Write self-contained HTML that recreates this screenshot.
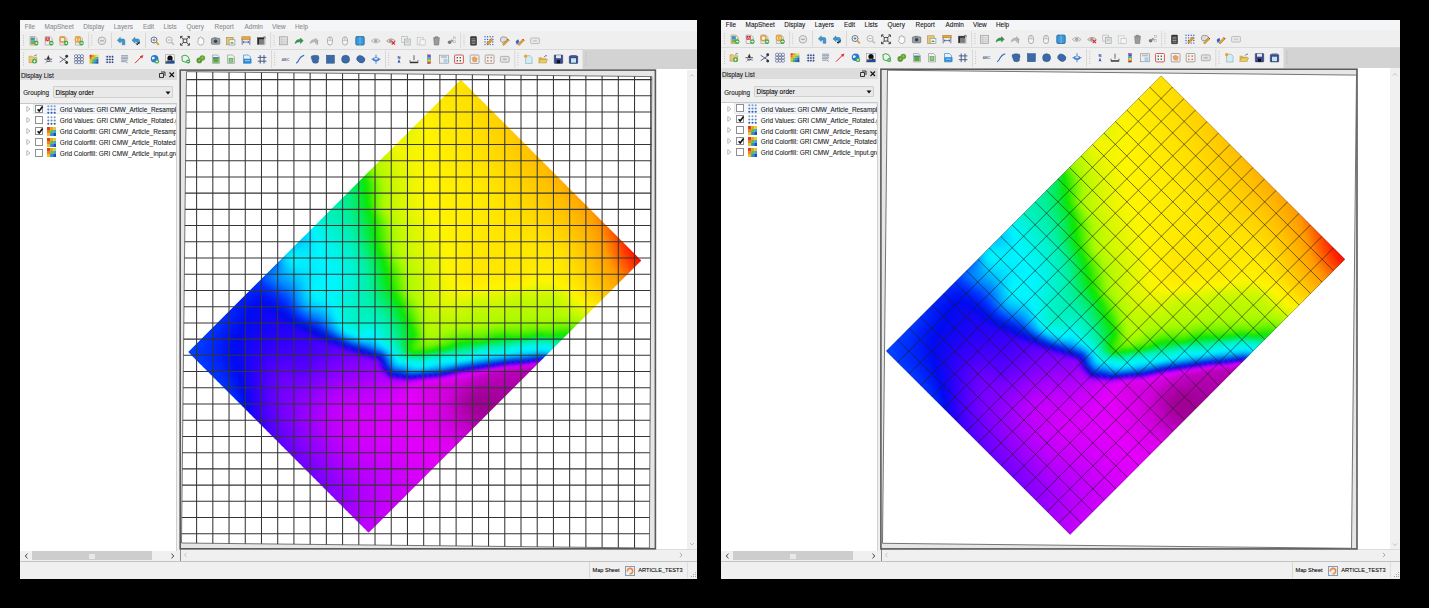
<!DOCTYPE html><html><head><meta charset="utf-8"><style>
html,body{margin:0;padding:0;background:#000;width:1429px;height:608px;overflow:hidden;position:relative}
div{position:absolute}
.s{position:absolute}
.t{position:absolute;white-space:nowrap;font-family:"Liberation Sans",sans-serif;line-height:1.2;-webkit-text-stroke:0.08px currentColor}
.dm{position:absolute;width:390px;height:260px;transform-origin:0 0;overflow:hidden}
.dm i{position:absolute;left:0;width:100%;height:3px}
.f0{top:0px;background:linear-gradient(90deg,#0045ff,#0042ff,#003fff,#003dff,#003bff,#0039ff,#0038ff,#0037ff,#0036ff,#0036ff,#0035fe,#0032fd,#002ffc,#002cfb,#0028fa,#0025f9,#0022f8,#0020f7,#001ff7,#0020f7,#0021f8,#0023f8,#0025f9,#0029fa,#002efc,#0037ff,#0046ff,#0057ff,#0065ff,#006dff,#0071ff,#0077ff,#008dff,#00afff,#00cdff,#00dcff,#00deff,#00d8ff,#00d1ff,#00caff,#00c9ff,#00d0ff,#00daff,#00e8ff,#00f4fd,#00f4f1,#00f3e4,#00f3d7,#00f2cb,#00f1c1,#00f1ba,#00f1b5,#00f0b0,#00f0ac,#00f0a4,#01ef9b,#02ee8f,#02ee82,#03ed72,#04ec5f,#06ea48,#07e92c,#0ae70b,#2cea00,#5df000,#88f600,#a2f900,#b0fa00,#b8f900,#c0f900,#cbf800,#d8f700,#e5f700,#eff600,#f5f600,#f0f600,#e4f700,#e2f700,#e4f700,#e8f600,#eef600,#f4f600,#faf500,#fff400,#fff200,#fff000,#ffee00,#ffed00,#ffec00,#ffeb00,#ffea00,#ffe900,#ffe800,#ffe700,#ffe600,#ffe500,#ffe300,#ffe100)}
.f1{top:2px;background:linear-gradient(90deg,#0043ff,#003fff,#003cff,#003aff,#0038ff,#0036ff,#0035fe,#0034fe,#0033fe,#0032fd,#0030fd,#002efc,#002bfb,#0029fa,#0025f9,#0022f8,#001ff7,#001df6,#001cf6,#001cf6,#001ef7,#001ff7,#0022f8,#0025f9,#002cfb,#0035fe,#0046ff,#005aff,#006bff,#0076ff,#007bff,#0082ff,#0098ff,#00baff,#00d9ff,#00e6ff,#00e5ff,#00dfff,#00d7ff,#00d0ff,#00ceff,#00d4ff,#00deff,#00ebff,#00f5fc,#00f4ef,#00f3e3,#00f3d6,#00f2ca,#00f1c0,#00f1b9,#00f1b4,#00f0af,#00f0aa,#01efa1,#01ef96,#02ee8a,#03ed7c,#04ec6b,#05eb57,#06ea3f,#08e823,#0de704,#34eb00,#63f100,#8cf600,#a6f900,#b3f900,#bbf900,#c4f800,#cef800,#dbf700,#e7f600,#f1f600,#f5f600,#f0f600,#e7f600,#e5f700,#e6f600,#eaf600,#eff600,#f5f600,#fcf500,#fff400,#fff100,#ffef00,#ffee00,#ffec00,#ffeb00,#ffea00,#ffe900,#ffe800,#ffe700,#ffe600,#ffe500,#ffe400,#ffe300,#ffe100)}
.f2{top:4px;background:linear-gradient(90deg,#0041ff,#003dff,#003aff,#0037ff,#0035fe,#0033fe,#0032fd,#0030fd,#002ffc,#002dfc,#002cfb,#002afb,#0027fa,#0025f9,#0022f8,#001ff7,#001df6,#001af5,#0019f5,#0019f5,#001af5,#001cf6,#001ef7,#0022f8,#0028fa,#0033fe,#0046ff,#005dff,#0072ff,#007eff,#0084ff,#008eff,#00a4ff,#00c3ff,#00e1ff,#00edff,#00ebff,#00e5ff,#00dcff,#00d6ff,#00d4ff,#00d8ff,#00e2ff,#00eeff,#00f5fa,#00f4ee,#00f3e1,#00f3d5,#00f2ca,#00f1c0,#00f1b8,#00f1b3,#00f0ad,#00f0a7,#01ef9d,#01ef92,#02ee84,#03ed75,#04ec63,#05eb4e,#07e935,#09e718,#15e700,#3dec00,#69f200,#8ff700,#a9fa00,#b5f900,#bef900,#c7f800,#d1f800,#ddf700,#e8f600,#f1f600,#f5f600,#f1f600,#eaf600,#e7f600,#e9f600,#ecf600,#f1f600,#f7f500,#fdf500,#fff300,#fff100,#ffef00,#ffed00,#ffec00,#ffeb00,#ffea00,#ffe900,#ffe800,#ffe700,#ffe600,#ffe500,#ffe400,#ffe200,#ffe100)}
.f3{top:6px;background:linear-gradient(90deg,#0040ff,#003cff,#0038ff,#0035fe,#0033fe,#0031fd,#002ffc,#002dfc,#002bfb,#0029fa,#0027fa,#0025f9,#0023f8,#0022f8,#001ff7,#001df6,#001af5,#0017f4,#0016f4,#0016f4,#0017f4,#0018f5,#001af5,#001ef7,#0025f9,#0031fd,#0045ff,#005eff,#0077ff,#0085ff,#008dff,#0099ff,#00adff,#00caff,#00e5ff,#00f0ff,#00f0ff,#00e9ff,#00e1ff,#00dbff,#00d9ff,#00ddff,#00e5ff,#00f1ff,#00f5f8,#00f4ec,#00f3e0,#00f2d4,#00f2c9,#00f1c0,#00f1b8,#00f0b2,#00f0ac,#00f0a4,#01ef99,#02ee8d,#03ed7e,#04ec6e,#05eb5a,#06ea44,#08e82a,#09e70c,#20e900,#46ee00,#6ff300,#93f700,#acfa00,#b8f900,#c1f900,#caf800,#d4f800,#dff700,#e9f600,#f1f600,#f4f600,#f2f600,#edf600,#eaf600,#ebf600,#eef600,#f3f600,#f8f500,#fef500,#fff300,#fff100,#ffef00,#ffed00,#ffec00,#ffea00,#ffe900,#ffe800,#ffe800,#ffe700,#ffe600,#ffe400,#ffe300,#ffe200,#ffe000)}
.f4{top:8px;background:linear-gradient(90deg,#003fff,#003aff,#0036ff,#0033fe,#0031fd,#002ffc,#002cfb,#002afb,#0027fa,#0025f9,#0022f8,#0021f8,#0020f7,#001ef7,#001cf6,#001af5,#0017f4,#0015f4,#0013f3,#0013f3,#0013f3,#0015f4,#0017f4,#001bf6,#0022f8,#002ffc,#0043ff,#005fff,#0079ff,#008aff,#0094ff,#00a1ff,#00b5ff,#00cfff,#00e6ff,#00f1ff,#00f2ff,#00ecff,#00e5ff,#00e0ff,#00deff,#00e2ff,#00e9ff,#00f3ff,#00f4f6,#00f4eb,#00f3e0,#00f2d4,#00f2c9,#00f1c0,#00f1b8,#00f0b1,#00f0ab,#01efa1,#01ef95,#02ee88,#03ed78,#04ec66,#05eb51,#07e939,#08e81e,#0de703,#2bea00,#50ef00,#75f300,#97f800,#aefa00,#baf900,#c4f800,#cdf800,#d6f700,#e0f700,#eaf600,#f1f600,#f4f600,#f2f600,#eff600,#edf600,#eef600,#f1f600,#f5f600,#faf500,#fff500,#fff200,#fff000,#ffee00,#ffed00,#ffeb00,#ffea00,#ffe900,#ffe800,#ffe700,#ffe600,#ffe500,#ffe400,#ffe300,#ffe100,#ffdf00)}
.f5{top:10px;background:linear-gradient(90deg,#003eff,#0039ff,#0035fe,#0032fd,#002ffc,#002cfb,#002afb,#0027fa,#0024f9,#0021f8,#001ff7,#001df6,#001cf6,#001bf6,#0019f5,#0017f4,#0014f3,#0012f3,#0010f2,#0010f2,#0010f2,#0011f2,#0014f3,#0018f5,#0020f7,#002dfc,#0041ff,#005dff,#0078ff,#008cff,#0099ff,#00a7ff,#00bbff,#00d2ff,#00e6ff,#00f1ff,#00f2ff,#00eeff,#00e9ff,#00e4ff,#00e3ff,#00e6ff,#00edff,#00f5fd,#00f4f4,#00f4ea,#00f3df,#00f2d4,#00f2c9,#00f1c0,#00f1b8,#00f0b1,#00f0aa,#01ef9e,#01ef91,#02ee83,#03ed71,#05eb5d,#06ea47,#07e92d,#09e711,#17e800,#37ec00,#59f000,#7cf400,#9bf800,#b0fa00,#bcf900,#c6f800,#cff800,#d8f700,#e2f700,#eaf600,#f0f600,#f3f600,#f3f600,#f1f600,#eff600,#f0f600,#f3f600,#f7f500,#fcf500,#fff400,#fff200,#fff000,#ffee00,#ffec00,#ffeb00,#ffea00,#ffe900,#ffe800,#ffe700,#ffe600,#ffe500,#ffe300,#ffe200,#ffe100,#ffdf00)}
.f6{top:12px;background:linear-gradient(90deg,#003dff,#0038ff,#0034fe,#0030fd,#002dfc,#002afb,#0027fa,#0024f9,#0021f8,#001ef7,#001bf6,#001af5,#0019f5,#0017f4,#0016f4,#0014f3,#0012f3,#0010f2,#000ef1,#000df1,#000df1,#000ef1,#0011f2,#0016f4,#001ef7,#002bfb,#003fff,#005bff,#0076ff,#008cff,#009cff,#00abff,#00beff,#00d3ff,#00e5ff,#00f0ff,#00f2ff,#00f0ff,#00ebff,#00e8ff,#00e7ff,#00eaff,#00f0ff,#00f5fc,#00f4f3,#00f4e9,#00f3de,#00f2d3,#00f2c9,#00f1c0,#00f1b8,#00f0b0,#00f0a8,#01ef9c,#02ee8e,#03ed7d,#04ec6b,#05eb55,#06ea3c,#08e821,#0be605,#23e900,#42ed00,#63f100,#83f500,#a0f900,#b3f900,#bff900,#c9f800,#d2f800,#daf700,#e3f700,#ebf600,#f0f600,#f3f600,#f4f600,#f2f600,#f2f600,#f3f600,#f5f600,#f9f500,#fdf500,#fff400,#fff200,#fff000,#ffee00,#ffec00,#ffeb00,#ffea00,#ffe800,#ffe700,#ffe600,#ffe500,#ffe400,#ffe300,#ffe200,#ffe000,#ffde00)}
.f7{top:14px;background:linear-gradient(90deg,#003cff,#0037ff,#0033fe,#002ffc,#002bfb,#0028fa,#0025f9,#0021f8,#001ef7,#001bf6,#0018f5,#0017f4,#0016f4,#0014f3,#0013f3,#0012f3,#0010f2,#000df1,#000bf0,#000af0,#000af0,#000cf1,#000ff2,#0013f3,#001cf6,#0029fa,#003dff,#0058ff,#0074ff,#008bff,#009dff,#00adff,#00c0ff,#00d3ff,#00e3ff,#00eeff,#00f1ff,#00f0ff,#00edff,#00ebff,#00eaff,#00edff,#00f3ff,#00f5fa,#00f4f1,#00f4e8,#00f3dd,#00f2d3,#00f2c9,#00f1c0,#00f1b7,#00f0b0,#00f0a6,#01ef99,#02ee8a,#03ed78,#04ec64,#06ea4c,#07e932,#09e715,#13e700,#30eb00,#4eef00,#6df200,#8bf600,#a5f900,#b5f900,#c1f900,#cbf800,#d3f800,#dcf700,#e4f700,#ebf600,#f0f600,#f3f600,#f4f600,#f4f600,#f4f600,#f5f600,#f7f500,#faf500,#fef500,#fff300,#fff100,#ffef00,#ffee00,#ffec00,#ffea00,#ffe900,#ffe800,#ffe700,#ffe600,#ffe500,#ffe400,#ffe200,#ffe100,#ffdf00,#ffdd00)}
.f8{top:16px;background:linear-gradient(90deg,#003bff,#0036ff,#0032fd,#002efc,#002afb,#0026f9,#0022f8,#001ff7,#001bf6,#0018f5,#0016f4,#0014f3,#0013f3,#0012f3,#0010f2,#000ff2,#000df1,#000bf0,#010af0,#020af0,#020af0,#010af0,#000cf1,#0012f3,#001af5,#0028fa,#003aff,#0055ff,#0071ff,#0089ff,#009cff,#00aeff,#00c0ff,#00d3ff,#00e2ff,#00ebff,#00f0ff,#00f0ff,#00eeff,#00edff,#00edff,#00f0ff,#00f5fe,#00f5f8,#00f4f0,#00f4e7,#00f3dd,#00f2d3,#00f2c9,#00f1c0,#00f1b7,#00f0af,#00f0a4,#01ef96,#02ee86,#03ed73,#05eb5d,#06ea43,#08e827,#0ae709,#20e900,#3dec00,#5af000,#77f400,#92f700,#aafa00,#b8f900,#c3f900,#cdf800,#d5f700,#ddf700,#e5f700,#ebf600,#f0f600,#f4f600,#f5f600,#f5f600,#f6f600,#f7f500,#f9f500,#fcf500,#fff400,#fff300,#fff100,#ffef00,#ffed00,#ffec00,#ffea00,#ffe900,#ffe800,#ffe700,#ffe600,#ffe400,#ffe300,#ffe200,#ffe000,#ffdf00,#ffdd00)}
.f9{top:18px;background:linear-gradient(90deg,#003aff,#0035fe,#0031fd,#002cfb,#0028fa,#0024f9,#0020f7,#001df6,#0019f5,#0016f4,#0013f3,#0011f2,#0010f2,#000ff2,#000ef1,#000df1,#000bf0,#010af0,#0309f1,#0509f1,#0509f1,#0309f1,#000af0,#0010f2,#0019f5,#0026f9,#0038fe,#0052ff,#006dff,#0086ff,#009bff,#00adff,#00c0ff,#00d1ff,#00e0ff,#00e9ff,#00eeff,#00efff,#00efff,#00efff,#00f0ff,#00f3ff,#00f5fc,#00f4f6,#00f4ee,#00f4e6,#00f3dc,#00f2d2,#00f2c9,#00f1bf,#00f1b6,#00f0ae,#00f0a2,#01ef93,#02ee81,#04ec6d,#05eb56,#07e93a,#08e81c,#0fe701,#2dea00,#4aee00,#66f100,#81f500,#9af800,#aefa00,#bbf900,#c5f800,#cff800,#d7f700,#dff700,#e6f600,#ecf600,#f1f600,#f4f600,#f6f600,#f6f600,#f7f500,#f9f500,#fbf500,#fef500,#fff400,#fff200,#fff000,#ffef00,#ffed00,#ffeb00,#ffea00,#ffe900,#ffe700,#ffe600,#ffe500,#ffe400,#ffe300,#ffe100,#ffe000,#ffde00,#ffdc00)}
.f10{top:20px;background:linear-gradient(90deg,#003aff,#0035fe,#0030fd,#002bfb,#0027fa,#0023f8,#001ef7,#001af5,#0017f4,#0013f3,#0011f2,#000ff2,#000df1,#000cf1,#000bf0,#000bf0,#010af0,#0309f1,#0509f1,#0709f1,#0709f1,#0609f1,#020af0,#000ef1,#0017f4,#0025f9,#0036fe,#004fff,#006aff,#0083ff,#0099ff,#00acff,#00bfff,#00d0ff,#00deff,#00e7ff,#00ecff,#00efff,#00efff,#00f0ff,#00f1ff,#00f4ff,#00f5fb,#00f4f5,#00f4ed,#00f3e5,#00f3db,#00f2d2,#00f2c8,#00f1bf,#00f1b6,#00f0ad,#01efa0,#02ee8f,#03ed7d,#04ec68,#05eb4f,#07e931,#09e710,#1be800,#3aec00,#57f000,#72f300,#8bf600,#a2f900,#b2fa00,#bef900,#c8f800,#d0f800,#d8f700,#e0f700,#e6f600,#ecf600,#f1f600,#f4f600,#f6f600,#f7f500,#f9f500,#faf500,#fdf500,#fff500,#fff300,#fff200,#fff000,#ffee00,#ffed00,#ffeb00,#ffea00,#ffe800,#ffe700,#ffe600,#ffe500,#ffe400,#ffe200,#ffe100,#ffdf00,#ffdd00,#ffdb00)}
.f11{top:22px;background:linear-gradient(90deg,#0039ff,#0034fe,#002ffc,#002afb,#0025f9,#0021f8,#001df6,#0018f5,#0015f4,#0011f2,#000ef1,#000cf1,#000bf0,#000af0,#010af0,#020af0,#0309f1,#0509f1,#0709f1,#0908f2,#0908f2,#0808f2,#0409f1,#000df1,#0016f4,#0023f8,#0034fe,#004dff,#0067ff,#0080ff,#0097ff,#00abff,#00beff,#00cfff,#00dcff,#00e5ff,#00ebff,#00eeff,#00f0ff,#00f1ff,#00f3ff,#00f5fe,#00f5f9,#00f4f3,#00f4ec,#00f3e4,#00f3db,#00f2d1,#00f2c8,#00f1be,#00f1b5,#00f0ac,#01ef9d,#02ee8c,#03ed79,#04ec63,#06ea48,#08e829,#0be707,#27ea00,#48ee00,#64f100,#7ef400,#95f700,#a9fa00,#b6f900,#c0f900,#caf800,#d2f800,#daf700,#e1f700,#e7f600,#edf600,#f1f600,#f5f600,#f7f500,#f9f500,#faf500,#fcf500,#fef500,#fff400,#fff300,#fff100,#fff000,#ffee00,#ffec00,#ffeb00,#ffe900,#ffe800,#ffe700,#ffe600,#ffe400,#ffe300,#ffe200,#ffe000,#ffdf00,#ffdd00,#ffdb00)}
.f12{top:24px;background:linear-gradient(90deg,#0039ff,#0034fe,#002efc,#0029fa,#0024f9,#001ff7,#001bf6,#0016f4,#0013f3,#000ff2,#000cf1,#000af0,#020af0,#0309f1,#0409f1,#0409f1,#0509f1,#0709f1,#0908f2,#0b08f2,#0b08f2,#0a08f2,#0509f1,#000cf1,#0015f4,#0022f8,#0032fd,#004aff,#0064ff,#007eff,#0095ff,#00aaff,#00beff,#00ceff,#00dbff,#00e4ff,#00eaff,#00eeff,#00f0ff,#00f2ff,#00f4ff,#00f5fd,#00f5f8,#00f4f2,#00f4eb,#00f3e3,#00f3da,#00f2d0,#00f2c7,#00f1bd,#00f1b4,#00f0aa,#01ef9a,#02ee88,#03ed74,#04ec5e,#06ea42,#08e820,#11e701,#34eb00,#55ef00,#71f300,#89f600,#9ef900,#affa00,#b9f900,#c3f900,#ccf800,#d4f800,#dbf700,#e2f700,#e8f600,#edf600,#f2f600,#f5f600,#f8f500,#faf500,#fbf500,#fdf500,#fff500,#fff400,#fff200,#fff100,#ffef00,#ffee00,#ffec00,#ffea00,#ffe900,#ffe800,#ffe600,#ffe500,#ffe400,#ffe300,#ffe100,#ffe000,#ffde00,#ffdc00,#ffda00)}
.f13{top:26px;background:linear-gradient(90deg,#0038ff,#0033fe,#002efc,#0028fa,#0023f8,#001ef7,#0019f5,#0015f4,#0011f2,#000df1,#000af0,#020af0,#0409f1,#0509f1,#0609f1,#0709f1,#0709f1,#0908f2,#0b08f2,#0c08f2,#0d07f3,#0c08f2,#0709f1,#000bf0,#0014f3,#0021f8,#0031fd,#0048ff,#0062ff,#007cff,#0093ff,#00a9ff,#00beff,#00ceff,#00dbff,#00e3ff,#00e9ff,#00edff,#00f0ff,#00f2ff,#00f5ff,#00f5fc,#00f5f7,#00f4f1,#00f4ea,#00f3e2,#00f3d9,#00f2d0,#00f2c6,#00f1bc,#00f1b3,#00f0a8,#01ef96,#02ee84,#03ed70,#05eb58,#06ea3c,#09e718,#1ae800,#41ed00,#63f100,#7ef500,#94f700,#a7fa00,#b3f900,#bdf900,#c6f800,#cef800,#d6f700,#ddf700,#e3f700,#e9f600,#eef600,#f2f600,#f6f600,#f8f500,#fbf500,#fdf500,#fff500,#fff400,#fff300,#fff200,#fff000,#ffef00,#ffed00,#ffec00,#ffea00,#ffe900,#ffe700,#ffe600,#ffe500,#ffe400,#ffe200,#ffe100,#ffdf00,#ffdd00,#ffdb00,#ffd900)}
.f14{top:28px;background:linear-gradient(90deg,#0038ff,#0033fe,#002dfc,#0027fa,#0022f8,#001cf6,#0017f4,#0013f3,#000ff2,#000bf0,#020af0,#0509f1,#0709f1,#0808f2,#0908f2,#0908f2,#0a08f2,#0a08f2,#0c08f2,#0e07f3,#0f07f3,#0e07f3,#0808f2,#010bf0,#0013f3,#0020f7,#0030fd,#0047ff,#0061ff,#007aff,#0092ff,#00aaff,#00beff,#00cfff,#00dcff,#00e4ff,#00e9ff,#00edff,#00f0ff,#00f3ff,#00f5fe,#00f5fb,#00f4f6,#00f4f0,#00f4e9,#00f3e1,#00f3d8,#00f2cf,#00f2c5,#00f1bb,#00f0b1,#00f0a5,#01ef92,#03ed7f,#04ec6a,#05eb52,#07e935,#09e711,#24e900,#4eee00,#71f300,#8bf600,#9ff900,#aefa00,#b7f900,#c1f900,#c9f800,#d1f800,#d8f700,#def700,#e4f700,#e9f600,#eef600,#f3f600,#f6f600,#f9f500,#fcf500,#fef500,#fff500,#fff400,#fff200,#fff100,#fff000,#ffee00,#ffed00,#ffeb00,#ffea00,#ffe800,#ffe700,#ffe600,#ffe400,#ffe300,#ffe200,#ffe000,#ffdf00,#ffdd00,#ffdb00,#ffd900)}
.f15{top:30px;background:linear-gradient(90deg,#0038ff,#0032fd,#002cfb,#0026f9,#0021f8,#001bf6,#0016f4,#0011f2,#000df1,#010af0,#0509f1,#0709f1,#0908f2,#0b08f2,#0b08f2,#0c08f2,#0c08f2,#0c08f2,#0e07f3,#1007f3,#1107f3,#0f07f3,#0a08f2,#010af0,#0012f2,#001ff7,#002ffc,#0046ff,#0061ff,#007aff,#0093ff,#00abff,#00c0ff,#00d1ff,#00ddff,#00e5ff,#00eaff,#00eeff,#00f1ff,#00f3ff,#00f5fe,#00f5fa,#00f4f5,#00f4ef,#00f4e8,#00f3e0,#00f3d7,#00f2ce,#00f2c4,#00f1ba,#00f0af,#01efa1,#02ee8e,#03ed7a,#04ec64,#06ea4c,#07e92f,#0ae70a,#2eea00,#5af000,#7ef400,#97f800,#a9fa00,#b3f900,#bcf900,#c4f800,#ccf800,#d3f800,#d9f700,#dff700,#e5f700,#eaf600,#eff600,#f4f600,#f7f500,#faf500,#fdf500,#fff500,#fff400,#fff300,#fff200,#fff100,#ffef00,#ffee00,#ffec00,#ffeb00,#ffea00,#ffe800,#ffe700,#ffe500,#ffe400,#ffe300,#ffe100,#ffe000,#ffde00,#ffdc00,#ffda00,#ffd800)}
.f16{top:32px;background:linear-gradient(90deg,#0037ff,#0032fd,#002cfb,#0025f9,#001ff7,#001af5,#0014f3,#000ff2,#000bf0,#0409f1,#0709f1,#0a08f2,#0c08f2,#0d07f3,#0e07f3,#0e07f3,#0e07f3,#0f07f3,#1007f3,#1107f3,#1206f4,#1107f3,#0c08f2,#020aef,#0012f1,#001ef7,#002ffc,#0046ff,#0062ff,#007cff,#0095ff,#00aeff,#00c3ff,#00d4ff,#00dfff,#00e7ff,#00ebff,#00efff,#00f1ff,#00f4ff,#00f5fd,#00f5f9,#00f4f5,#00f4ee,#00f4e7,#00f3df,#00f3d6,#00f2cc,#00f1c2,#00f1b8,#00f0ad,#01ef9c,#02ee88,#03ed74,#04ec5e,#06ea45,#08e828,#0de705,#37ec00,#67f200,#8af600,#a1f900,#affa00,#b8f900,#c0f900,#c7f800,#cff800,#d5f700,#dbf700,#e1f700,#e6f600,#ebf600,#f0f600,#f4f600,#f8f500,#fbf500,#fef500,#fff500,#fff400,#fff300,#fff100,#fff000,#ffef00,#ffed00,#ffec00,#ffeb00,#ffe900,#ffe800,#ffe600,#ffe500,#ffe400,#ffe200,#ffe100,#ffdf00,#ffdd00,#ffdb00,#ffd900,#ffd700)}
.f17{top:34px;background:linear-gradient(90deg,#0037ff,#0031fd,#002bfb,#0025f9,#001ef7,#0018f5,#0013f3,#000df1,#010af0,#0609f1,#0a08f2,#0c08f2,#0e07f3,#1007f3,#1107f3,#1107f3,#1107f3,#1107f3,#1206f4,#1306f4,#1406f4,#1306f4,#0e07f2,#0309ee,#0011f0,#001ef6,#002ffc,#0047ff,#0064ff,#0080ff,#009aff,#00b2ff,#00c7ff,#00d7ff,#00e2ff,#00e9ff,#00edff,#00efff,#00f2ff,#00f4ff,#00f5fd,#00f5f9,#00f4f4,#00f4ee,#00f4e6,#00f3de,#00f3d5,#00f2cb,#00f1c1,#00f1b6,#00f0aa,#01ef97,#02ee83,#04ec6d,#05eb56,#06ea3d,#08e820,#12e702,#41ed00,#71f300,#94f700,#aafa00,#b4f900,#bcf900,#c3f900,#caf800,#d1f800,#d8f700,#ddf700,#e2f700,#e7f600,#ecf600,#f1f600,#f5f600,#f9f500,#fcf500,#fef500,#fff400,#fff300,#fff200,#fff100,#fff000,#ffee00,#ffed00,#ffec00,#ffea00,#ffe900,#ffe700,#ffe600,#ffe500,#ffe300,#ffe200,#ffe000,#ffdf00,#ffdd00,#ffdb00,#ffd900,#ffd600)}
.f18{top:36px;background:linear-gradient(90deg,#0036ff,#0031fd,#002afb,#0024f9,#001df6,#0017f4,#0011f2,#000cf1,#0409f1,#0808f2,#0c08f2,#0f07f3,#1107f3,#1306f4,#1306f4,#1406f4,#1406f4,#1306f4,#1406f4,#1506f4,#1606f4,#1506f4,#0f07f3,#0409ed,#0011ee,#001ef6,#0030fc,#0049ff,#0068ff,#0085ff,#009fff,#00b7ff,#00ccff,#00dcff,#00e6ff,#00ecff,#00efff,#00f0ff,#00f2ff,#00f4ff,#00f5fc,#00f5f8,#00f4f3,#00f4ed,#00f3e5,#00f3dd,#00f2d3,#00f2c9,#00f1bf,#00f1b4,#00f0a6,#01ef92,#03ed7c,#04ec65,#05eb4e,#07e934,#09e715,#1be800,#4aee00,#79f400,#9cf800,#affa00,#b9f900,#c0f900,#c7f800,#cef800,#d4f800,#daf700,#dff700,#e4f700,#e9f600,#eef600,#f2f600,#f6f600,#faf500,#fdf500,#fff500,#fff400,#fff300,#fff200,#fff000,#ffef00,#ffee00,#ffed00,#ffeb00,#ffea00,#ffe900,#ffe700,#ffe600,#ffe400,#ffe300,#ffe100,#ffe000,#ffde00,#ffdc00,#ffda00,#ffd800,#ffd600)}
.f19{top:38px;background:linear-gradient(90deg,#0036ff,#0030fd,#0029fa,#0023f8,#001cf6,#0015f4,#000ff2,#010af0,#0609f1,#0b08f2,#0f07f3,#1206f4,#1406f4,#1506f4,#1606f4,#1606f4,#1606f4,#1606f4,#1606f4,#1705f5,#1705f5,#1705f5,#1107f3,#0509ed,#0010ec,#001ef5,#0030fd,#004cff,#006cff,#008bff,#00a5ff,#00bdff,#00d2ff,#00e1ff,#00eaff,#00eeff,#00f0ff,#00f1ff,#00f2ff,#00f5ff,#00f5fc,#00f5f8,#00f4f2,#00f4ec,#00f3e4,#00f3db,#00f2d2,#00f2c8,#00f1bd,#00f0b1,#00f0a2,#02ee8c,#03ed75,#05eb5d,#06ea44,#08e829,#0ae70a,#26ea00,#53ef00,#7ff500,#a1f900,#b3f900,#bcf900,#c4f800,#caf800,#d1f800,#d7f700,#dcf700,#e1f700,#e6f600,#ebf600,#eff600,#f3f600,#f7f500,#fbf500,#fef500,#fff400,#fff300,#fff200,#fff100,#fff000,#ffef00,#ffee00,#ffec00,#ffeb00,#ffea00,#ffe800,#ffe700,#ffe500,#ffe400,#ffe200,#ffe100,#ffdf00,#ffdd00,#ffdc00,#ffda00,#ffd700,#ffd500)}
.f20{top:40px;background:linear-gradient(90deg,#0036ff,#0030fd,#0029fa,#0022f8,#001bf6,#0014f3,#000df1,#0309f1,#0808f2,#0d07f3,#1107f3,#1406f4,#1705f5,#1805f5,#1905f5,#1905f5,#1905f5,#1905f5,#1805f5,#1805f5,#1905f5,#1805f5,#1306f3,#0609ed,#0010eb,#001ef4,#0031fd,#004eff,#0070ff,#0090ff,#00acff,#00c3ff,#00d8ff,#00e6ff,#00eeff,#00f1ff,#00f2ff,#00f2ff,#00f3ff,#00f5ff,#00f5fc,#00f5f7,#00f4f2,#00f4eb,#00f3e3,#00f3da,#00f2d0,#00f2c6,#00f1bb,#00f0af,#01ef9c,#02ee85,#04ec6d,#05eb54,#07e93a,#08e81e,#0fe702,#31eb00,#5cf000,#85f500,#a6f900,#b6f900,#bff900,#c7f800,#cef800,#d4f800,#d9f700,#dff700,#e4f700,#e8f600,#ecf600,#f1f600,#f5f600,#f8f500,#fcf500,#fff500,#fff400,#fff300,#fff200,#fff100,#fff000,#ffee00,#ffed00,#ffec00,#ffeb00,#ffe900,#ffe800,#ffe600,#ffe500,#ffe400,#ffe200,#ffe100,#ffdf00,#ffdd00,#ffdb00,#ffd900,#ffd700,#ffd400)}
.f21{top:42px;background:linear-gradient(90deg,#0035fe,#002ffc,#0028fa,#0020f7,#0019f5,#0012f3,#000cf1,#0509f1,#0b08f2,#1007f3,#1406f4,#1705f5,#1a05f5,#1b05f5,#1c04f6,#1c04f6,#1c04f6,#1b05f5,#1b05f5,#1a05f5,#1b05f5,#1a05f5,#1506f4,#0808ee,#0010e9,#001ef3,#0032fd,#0051ff,#0074ff,#0096ff,#00b2ff,#00caff,#00deff,#00ebff,#00f2ff,#00f4ff,#00f4ff,#00f3ff,#00f3ff,#00f5ff,#00f5fb,#00f5f7,#00f4f1,#00f4ea,#00f3e2,#00f3d8,#00f2cf,#00f2c4,#00f1b8,#00f0ab,#01ef96,#03ed7e,#04ec65,#06ea4b,#07e92f,#09e712,#19e800,#3dec00,#64f100,#8af600,#a9fa00,#b8f900,#c2f900,#caf800,#d1f800,#d6f700,#dcf700,#e1f700,#e6f600,#eaf600,#eef600,#f2f600,#f6f600,#faf500,#fdf500,#fff500,#fff400,#fff200,#fff100,#fff000,#ffef00,#ffee00,#ffed00,#ffec00,#ffea00,#ffe900,#ffe800,#ffe600,#ffe500,#ffe300,#ffe200,#ffe000,#ffde00,#ffdc00,#ffda00,#ffd800,#ffd600,#ffd400)}
.f22{top:44px;background:linear-gradient(90deg,#0035fe,#002efc,#0027fa,#001ff7,#0018f5,#0010f2,#010af0,#0709f1,#0d07f3,#1306f4,#1705f5,#1a05f5,#1d04f6,#1e04f6,#1f04f6,#1f04f6,#1f04f6,#1e04f6,#1d04f6,#1c04f6,#1d04f6,#1c04f6,#1705f4,#0a08ee,#0010e8,#001ef2,#0033fd,#0053ff,#0079ff,#009bff,#00b7ff,#00cfff,#00e3ff,#00f0ff,#00f5fe,#00f5fe,#00f5ff,#00f3ff,#00f3ff,#00f5fe,#00f5fb,#00f4f6,#00f4f0,#00f4e8,#00f3e0,#00f3d7,#00f2cd,#00f1c2,#00f1b6,#00f0a7,#02ee90,#03ed77,#05eb5c,#06ea41,#08e824,#0be606,#24e900,#47ee00,#6cf200,#90f700,#acfa00,#baf900,#c5f800,#cdf800,#d3f800,#d9f700,#def700,#e3f700,#e8f600,#ecf600,#f0f600,#f4f600,#f7f500,#fbf500,#fef500,#fff400,#fff300,#fff200,#fff100,#fff000,#ffef00,#ffee00,#ffec00,#ffeb00,#ffea00,#ffe900,#ffe700,#ffe600,#ffe400,#ffe300,#ffe100,#ffe000,#ffde00,#ffdc00,#ffda00,#ffd800,#ffd500,#ffd300)}
.f23{top:46px;background:linear-gradient(90deg,#0034fe,#002efc,#0026f9,#001ef7,#0016f4,#000ff2,#0309f1,#0a08f2,#1007f3,#1606f4,#1a05f5,#1d04f6,#2004f6,#2103f7,#2203f7,#2203f7,#2103f7,#2103f7,#2004f6,#1f04f6,#1e04f6,#1e04f6,#1a05f5,#0c07ef,#000fe7,#001ef0,#0033fd,#0055ff,#007cff,#00a0ff,#00bcff,#00d4ff,#00e8ff,#00f4ff,#00f5fc,#00f5fd,#00f5fe,#00f4ff,#00f4ff,#00f5fe,#00f5fa,#00f4f5,#00f4ef,#00f4e7,#00f3de,#00f3d5,#00f2cb,#00f1bf,#00f1b3,#00f0a2,#02ee89,#03ed6f,#05eb53,#07e936,#09e718,#11e701,#30eb00,#52ef00,#75f300,#96f700,#affa00,#bcf900,#c7f800,#cff800,#d6f700,#dbf700,#e1f700,#e5f700,#eaf600,#eef600,#f2f600,#f5f600,#f9f500,#fcf500,#fff500,#fff400,#fff300,#fff200,#fff100,#fff000,#ffee00,#ffed00,#ffec00,#ffeb00,#ffea00,#ffe800,#ffe700,#ffe500,#ffe400,#ffe200,#ffe100,#ffdf00,#ffdd00,#ffdb00,#ffd900,#ffd700,#ffd500,#ffd200)}
.f24{top:48px;background:linear-gradient(90deg,#0033fe,#002dfc,#0025f9,#001df6,#0015f4,#000df1,#0509f1,#0d07f3,#1306f4,#1905f5,#1d04f6,#2103f7,#2303f7,#2503f7,#2503f7,#2503f7,#2403f7,#2303f7,#2203f7,#2103f7,#2004f6,#2004f6,#1c04f5,#0e07f0,#000fe6,#001eee,#0033fc,#0056ff,#007eff,#00a4ff,#00c0ff,#00d7ff,#00ebff,#00f5fe,#00f5fb,#00f5fc,#00f5fe,#00f4ff,#00f4ff,#00f5fe,#00f5fa,#00f4f4,#00f4ed,#00f3e5,#00f3dd,#00f2d3,#00f2c8,#00f1bd,#00f0b0,#01ef9d,#02ee82,#04ec67,#06ea4a,#07e92b,#09e70c,#1ce800,#3cec00,#5cf000,#7df400,#9cf800,#b1fa00,#bff900,#c9f800,#d1f800,#d8f700,#def700,#e3f700,#e8f600,#ecf600,#f0f600,#f4f600,#f7f500,#faf500,#fdf500,#fff400,#fff300,#fff200,#fff100,#fff000,#ffef00,#ffee00,#ffed00,#ffec00,#ffeb00,#ffe900,#ffe800,#ffe600,#ffe500,#ffe400,#ffe200,#ffe000,#ffdf00,#ffdd00,#ffdb00,#ffd900,#ffd600,#ffd400,#ffd200)}
.f25{top:50px;background:linear-gradient(90deg,#0033fe,#002cfb,#0023f8,#001bf6,#0013f3,#000bf0,#0808f2,#0f07f3,#1606f4,#1c04f6,#2103f7,#2403f7,#2702f8,#2802f8,#2902f8,#2802f8,#2702f8,#2602f8,#2503f7,#2303f7,#2203f7,#2103f7,#1e04f6,#1107f1,#000ee5,#001deb,#0032fb,#0055ff,#007fff,#00a6ff,#00c2ff,#00d9ff,#00ebff,#00f5fd,#00f5fb,#00f5fb,#00f5fd,#00f4ff,#00f4ff,#00f5fd,#00f5f9,#00f4f3,#00f4ec,#00f3e4,#00f3db,#00f2d1,#00f2c6,#00f1ba,#00f0ad,#01ef97,#03ed7b,#04ec5e,#06ea40,#08e820,#0de703,#28ea00,#47ee00,#66f100,#85f500,#a1f900,#b4f900,#c1f900,#cbf800,#d3f800,#daf700,#dff700,#e5f700,#eaf600,#eef600,#f2f600,#f5f600,#f9f500,#fcf500,#fff500,#fff400,#fff300,#fff200,#fff100,#fff000,#ffef00,#ffee00,#ffed00,#ffeb00,#ffea00,#ffe900,#ffe800,#ffe600,#ffe500,#ffe300,#ffe200,#ffe000,#ffde00,#ffdc00,#ffda00,#ffd800,#ffd600,#ffd300,#ffd100)}
.f26{top:52px;background:linear-gradient(90deg,#0032fd,#002bfb,#0022f8,#0019f5,#0011f2,#020af0,#0a08f2,#1206f4,#1905f5,#1f04f6,#2403f7,#2802f8,#2a02f8,#2c01f9,#2c01f9,#2c01f9,#2b01f9,#2902f8,#2802f8,#2602f8,#2403f7,#2303f7,#2004f6,#1406f2,#010ce6,#001ce8,#0031fa,#0054ff,#007fff,#00a6ff,#00c2ff,#00d9ff,#00ebff,#00f5fe,#00f5fb,#00f5fb,#00f5fd,#00f5ff,#00f5ff,#00f5fc,#00f5f7,#00f4f1,#00f4ea,#00f3e2,#00f3d9,#00f2cf,#00f2c4,#00f1b8,#00f0a9,#01ef91,#03ed74,#05eb56,#07e936,#09e715,#15e700,#34eb00,#52ef00,#70f300,#8df600,#a7f900,#b7f900,#c3f900,#ccf800,#d5f700,#dbf700,#e1f700,#e7f600,#ebf600,#f0f600,#f4f600,#f7f500,#faf500,#fdf500,#fff500,#fff400,#fff200,#fff100,#fff100,#fff000,#ffee00,#ffed00,#ffec00,#ffeb00,#ffea00,#ffe900,#ffe700,#ffe600,#ffe400,#ffe300,#ffe100,#ffdf00,#ffde00,#ffdc00,#ffda00,#ffd700,#ffd500,#ffd300,#ffd000)}
.f27{top:54px;background:linear-gradient(90deg,#0031fd,#0029fa,#0021f8,#0018f5,#000ff2,#0409f1,#0d07f3,#1506f4,#1d04f6,#2303f7,#2802f8,#2b01f9,#2e01f9,#2f01f9,#2f01f9,#2f01f9,#2e01f9,#2c01f9,#2a02f8,#2802f8,#2602f8,#2503f7,#2203f7,#1805f4,#020be7,#001ae5,#002ff7,#0051ff,#007cff,#00a5ff,#00c1ff,#00d7ff,#00e8ff,#00f4ff,#00f5fc,#00f5fb,#00f5fc,#00f5fe,#00f5fe,#00f5fa,#00f4f5,#00f4ef,#00f4e8,#00f3df,#00f3d6,#00f2cc,#00f1c1,#00f1b5,#00f0a5,#02ee8a,#04ec6d,#05eb4e,#07e92c,#0ae70a,#21e900,#3fed00,#5df000,#79f400,#94f700,#abfa00,#b9f900,#c5f800,#cef800,#d6f700,#ddf700,#e3f700,#e8f600,#edf600,#f1f600,#f5f600,#f9f500,#fcf500,#fef500,#fff400,#fff300,#fff200,#fff100,#fff000,#ffef00,#ffee00,#ffed00,#ffec00,#ffeb00,#ffea00,#ffe800,#ffe700,#ffe500,#ffe400,#ffe200,#ffe100,#ffdf00,#ffdd00,#ffdb00,#ffd900,#ffd700,#ffd500,#ffd200,#ffcf00)}
.f28{top:56px;background:linear-gradient(90deg,#002ffc,#0028fa,#001ff7,#0016f4,#000cf1,#0709f1,#1007f3,#1905f5,#2004f6,#2602f8,#2b01f9,#2f01f9,#3200fa,#3300fa,#3300fa,#3200fa,#3100fa,#2f01f9,#2d01f9,#2b01f9,#2902f8,#2702f8,#2503f7,#1c04f5,#050ae9,#0019e3,#002cf4,#004efe,#0078ff,#00a1ff,#00bdff,#00d4ff,#00e5ff,#00f1ff,#00f5fd,#00f5fc,#00f5fc,#00f5fc,#00f5fc,#00f5f8,#00f4f3,#00f4ec,#00f3e5,#00f3dd,#00f2d4,#00f2c9,#00f1be,#00f0b2,#01ef9f,#02ee84,#04ec66,#06ea45,#08e822,#0ee703,#2cea00,#4bee00,#68f200,#83f500,#9cf800,#affa00,#bcf900,#c7f800,#d0f800,#d8f700,#def700,#e4f700,#eaf600,#eff600,#f3f600,#f7f500,#faf500,#fdf500,#fff500,#fff400,#fff300,#fff200,#fff100,#fff000,#ffef00,#ffee00,#ffed00,#ffec00,#ffea00,#ffe900,#ffe800,#ffe700,#ffe500,#ffe400,#ffe200,#ffe000,#ffdf00,#ffdd00,#ffdb00,#ffd800,#ffd600,#ffd400,#ffd100,#ffcf00)}
.f29{top:58px;background:linear-gradient(90deg,#002efc,#0027fa,#001df6,#0014f3,#010bf0,#0a08f2,#1406f4,#1c04f6,#2403f7,#2a02f8,#2f01f9,#3300fa,#3500fa,#3600fa,#3600fa,#3500fa,#3400fa,#3200fa,#3000fa,#2d01f9,#2b01f9,#2902f8,#2702f8,#1f04f6,#0808eb,#0018e1,#002af0,#0049fe,#0073ff,#009bff,#00b9ff,#00cfff,#00e1ff,#00eeff,#00f5fe,#00f5fc,#00f5fb,#00f5fb,#00f5f9,#00f4f5,#00f4f0,#00f4ea,#00f3e2,#00f3da,#00f2d1,#00f2c7,#00f1bb,#00f0af,#01ef9a,#03ed7e,#04ec5f,#06ea3d,#09e718,#16e800,#38ec00,#57f000,#73f300,#8cf600,#a3f900,#b3f900,#bef900,#c8f800,#d1f800,#d9f700,#e0f700,#e6f600,#ebf600,#f0f600,#f5f600,#f8f500,#fcf500,#fef500,#fff400,#fff300,#fff200,#fff100,#fff000,#ffef00,#ffef00,#ffee00,#ffec00,#ffeb00,#ffea00,#ffe900,#ffe800,#ffe600,#ffe500,#ffe300,#ffe200,#ffe000,#ffde00,#ffdc00,#ffda00,#ffd800,#ffd600,#ffd300,#ffd100,#ffce00)}
.f30{top:60px;background:linear-gradient(90deg,#002dfc,#0025f9,#001bf6,#0011f2,#0309f1,#0d07f3,#1705f5,#2004f6,#2802f8,#2e01f9,#3300fa,#3700fa,#3900fb,#3a00fb,#3900fb,#3800fa,#3700fa,#3500fa,#3200fa,#3000fa,#2d01f9,#2b01f9,#2902f8,#2303f7,#0e07ed,#0016e0,#0027ec,#0044fd,#006dff,#0095ff,#00b3ff,#00cbff,#00ddff,#00ebff,#00f4ff,#00f5fc,#00f5fa,#00f5f8,#00f4f6,#00f4f2,#00f4ed,#00f4e7,#00f3df,#00f3d7,#00f2ce,#00f1c3,#00f1b8,#00f0ab,#01ef94,#03ed78,#05eb58,#07e934,#09e70e,#21e900,#44ed00,#63f100,#7df400,#95f700,#aafa00,#b6f900,#c1f900,#caf800,#d3f800,#daf700,#e1f700,#e7f600,#edf600,#f2f600,#f6f600,#faf500,#fdf500,#fff500,#fff400,#fff300,#fff200,#fff100,#fff000,#ffef00,#ffee00,#ffed00,#ffec00,#ffeb00,#ffea00,#ffe900,#ffe700,#ffe600,#ffe400,#ffe300,#ffe100,#ffe000,#ffde00,#ffdc00,#ffda00,#ffd700,#ffd500,#ffd300,#ffd000,#ffcd00)}
.f31{top:62px;background:linear-gradient(90deg,#002bfb,#0023f8,#0019f5,#000ff2,#0609f1,#1107f3,#1b05f5,#2403f7,#2c01f9,#3200fa,#3700fa,#3a00fb,#3c00fb,#3d00fb,#3d00fb,#3b00fb,#3a00fb,#3700fa,#3500fa,#3200fa,#3000fa,#2d01f9,#2b01f9,#2602f7,#1306f0,#0012e0,#0023e7,#003efc,#0066ff,#008eff,#00adff,#00c6ff,#00d9ff,#00e8ff,#00f2ff,#00f5fc,#00f5f8,#00f4f6,#00f4f3,#00f4ef,#00f4ea,#00f3e3,#00f3dc,#00f2d4,#00f2ca,#00f1c0,#00f1b5,#00f0a6,#02ee8e,#03ed72,#05eb51,#07e92d,#0ce706,#2cea00,#50ef00,#6ef300,#88f600,#9ef800,#affa00,#b9f900,#c3f900,#ccf800,#d4f800,#dbf700,#e2f700,#e8f600,#eef600,#f3f600,#f8f500,#fbf500,#fef500,#fff400,#fff300,#fff200,#fff100,#fff100,#fff000,#ffef00,#ffee00,#ffed00,#ffec00,#ffeb00,#ffea00,#ffe800,#ffe700,#ffe600,#ffe400,#ffe300,#ffe100,#ffdf00,#ffdd00,#ffdb00,#ffd900,#ffd700,#ffd400,#ffd200,#ffcf00,#ffcd00)}
.f32{top:64px;background:linear-gradient(90deg,#0029fa,#0021f8,#0017f4,#000cf1,#0908f2,#1406f4,#1f04f6,#2802f8,#3000fa,#3600fa,#3b00fb,#3e00fb,#4000fb,#4100fb,#4000fb,#3f00fb,#3c00fb,#3a00fb,#3700fa,#3500fa,#3200fa,#2f01f9,#2d01f9,#2902f8,#1905f2,#010ee0,#0020e2,#0038f9,#005fff,#0087ff,#00a7ff,#00c1ff,#00d6ff,#00e6ff,#00f2ff,#00f5fb,#00f5f7,#00f4f3,#00f4ef,#00f4eb,#00f4e6,#00f3e0,#00f3d8,#00f2d0,#00f2c7,#00f1bd,#00f0b1,#01efa1,#02ee88,#04ec6b,#06ea4b,#08e825,#11e702,#38ec00,#5cf000,#7af400,#92f700,#a6f900,#b3f900,#bcf900,#c6f800,#cef800,#d5f700,#dcf700,#e3f700,#e9f600,#eff600,#f4f600,#f9f500,#fdf500,#fff500,#fff400,#fff300,#fff200,#fff100,#fff000,#ffef00,#ffef00,#ffee00,#ffed00,#ffec00,#ffeb00,#ffe900,#ffe800,#ffe700,#ffe500,#ffe400,#ffe200,#ffe100,#ffdf00,#ffdd00,#ffdb00,#ffd800,#ffd600,#ffd400,#ffd100,#ffcf00,#ffcc00)}
.f33{top:66px;background:linear-gradient(90deg,#0027fa,#001ff7,#0014f3,#020af1,#0d07f3,#1805f5,#2303f7,#2c01f9,#3400fa,#3a00fb,#3f00fb,#4200fb,#4400fb,#4400fb,#4400fb,#4200fb,#3f00fb,#3c00fb,#3a00fb,#3700fa,#3400fa,#3200fa,#3000fa,#2c01f9,#1f04f4,#030be2,#001cde,#0033f6,#0058ff,#0080ff,#00a1ff,#00bcff,#00d3ff,#00e5ff,#00f2ff,#00f5fa,#00f4f4,#00f4f0,#00f4ec,#00f4e7,#00f3e2,#00f3dc,#00f3d5,#00f2cd,#00f1c3,#00f1b9,#00f0ae,#01ef9a,#02ee81,#04ec65,#06ea44,#08e81e,#18e800,#43ed00,#68f200,#85f500,#9cf800,#acfa00,#b6f900,#bff900,#c8f800,#d0f800,#d7f700,#ddf700,#e3f700,#eaf600,#f0f600,#f6f600,#faf500,#fef500,#fff400,#fff300,#fff200,#fff200,#fff100,#fff000,#ffef00,#ffee00,#ffed00,#ffec00,#ffeb00,#ffea00,#ffe900,#ffe800,#ffe600,#ffe500,#ffe300,#ffe200,#ffe000,#ffde00,#ffdc00,#ffda00,#ffd800,#ffd600,#ffd300,#ffd100,#ffce00,#ffcb00)}
.f34{top:68px;background:linear-gradient(90deg,#0025f9,#001cf6,#0011f2,#0509f1,#1107f3,#1c04f6,#2702f8,#3000fa,#3800fa,#3e00fb,#4200fb,#4600fc,#4800fc,#4800fc,#4700fc,#4500fb,#4200fb,#3f00fb,#3c00fb,#3900fb,#3600fa,#3400fa,#3200fa,#2f01f9,#2403f6,#0709e5,#0019db,#002df1,#0051fe,#007aff,#009cff,#00b9ff,#00d1ff,#00e4ff,#00f3ff,#00f5f8,#00f4f2,#00f4ed,#00f4e8,#00f3e3,#00f3de,#00f3d8,#00f2d1,#00f2c9,#00f1c0,#00f1b5,#00f0a9,#01ef93,#03ed7a,#04ec5e,#06ea3e,#09e717,#20e900,#4eee00,#74f300,#90f700,#a5f900,#b1fa00,#baf900,#c2f900,#caf800,#d1f800,#d8f700,#def700,#e4f700,#eaf600,#f1f600,#f7f500,#fbf500,#fef500,#fff400,#fff300,#fff200,#fff100,#fff000,#fff000,#ffef00,#ffee00,#ffed00,#ffec00,#ffeb00,#ffea00,#ffe900,#ffe800,#ffe600,#ffe500,#ffe300,#ffe200,#ffe000,#ffde00,#ffdc00,#ffda00,#ffd700,#ffd500,#ffd300,#ffd000,#ffcd00,#ffcb00)}
.f35{top:70px;background:linear-gradient(90deg,#0023f8,#0019f5,#000ef1,#0908f2,#1506f4,#2103f7,#2b01f9,#3500fa,#3c00fb,#4200fb,#4600fc,#4a00fc,#4c00fc,#4c00fc,#4b00fc,#4800fc,#4500fb,#4200fb,#3e00fb,#3b00fb,#3800fa,#3600fa,#3400fa,#3200fa,#2a02f8,#0d07e9,#0016d9,#0029eb,#004afd,#0074ff,#0098ff,#00b6ff,#00d0ff,#00e5ff,#00f4fe,#00f4f6,#00f4ee,#00f4e9,#00f3e4,#00f3df,#00f3da,#00f2d4,#00f2cd,#00f2c5,#00f1bc,#00f0b1,#00f0a3,#02ee8c,#03ed73,#05eb57,#07e937,#09e710,#29ea00,#58f000,#7ff500,#9af800,#acfa00,#b5f900,#bdf900,#c5f800,#ccf800,#d3f800,#d9f700,#dff700,#e5f700,#ebf600,#f1f600,#f7f500,#fcf500,#fff500,#fff400,#fff300,#fff200,#fff100,#fff000,#ffef00,#ffef00,#ffee00,#ffed00,#ffec00,#ffeb00,#ffea00,#ffe900,#ffe700,#ffe600,#ffe400,#ffe300,#ffe100,#ffdf00,#ffdd00,#ffdb00,#ffd900,#ffd700,#ffd500,#ffd200,#ffd000,#ffcd00,#ffca00)}
.f36{top:72px;background:linear-gradient(90deg,#0020f7,#0016f4,#010bf1,#0d07f3,#1a05f5,#2503f7,#3000fa,#3900fb,#4000fb,#4600fc,#4a00fc,#4e00fc,#4f00fc,#5000fc,#4e00fc,#4b00fc,#4800fc,#4400fb,#4000fb,#3d00fb,#3a00fb,#3800fa,#3600fa,#3400fa,#2e01f9,#1506ed,#0013da,#0025e6,#0044fc,#006fff,#0095ff,#00b4ff,#00d0ff,#00e7ff,#00f5fc,#00f4f2,#00f4eb,#00f3e5,#00f3e0,#00f3db,#00f3d6,#00f2d0,#00f2c9,#00f1c1,#00f1b8,#00f0ad,#01ef9b,#02ee84,#04ec6b,#05eb4f,#07e92f,#0ae70a,#31eb00,#62f100,#89f600,#a2f900,#b0fa00,#b9f900,#c0f900,#c7f800,#cef800,#d5f700,#dbf700,#e0f700,#e6f600,#ecf600,#f2f600,#f8f500,#fdf500,#fff500,#fff300,#fff200,#fff100,#fff100,#fff000,#ffef00,#ffee00,#ffee00,#ffed00,#ffec00,#ffeb00,#ffea00,#ffe800,#ffe700,#ffe600,#ffe400,#ffe300,#ffe100,#ffdf00,#ffdd00,#ffdb00,#ffd900,#ffd600,#ffd400,#ffd100,#ffcf00,#ffcc00,#ffc900)}
.f37{top:74px;background:linear-gradient(90deg,#001cf6,#0012f3,#0409f1,#1206f4,#1e04f6,#2a02f8,#3400fa,#3d00fb,#4400fb,#4a00fc,#4f00fc,#5200fc,#5300fd,#5300fd,#5200fc,#4e00fc,#4a00fc,#4600fc,#4300fb,#3f00fb,#3c00fb,#3a00fb,#3800fa,#3600fa,#3200fa,#1d04f1,#0010db,#0021e2,#003ffa,#006bff,#0093ff,#00b5ff,#00d2ff,#00eaff,#00f5f9,#00f4ef,#00f4e7,#00f3e1,#00f3dc,#00f3d7,#00f2d2,#00f2cc,#00f2c5,#00f1bd,#00f1b4,#00f0a8,#01ef93,#03ed7c,#04ec63,#06ea47,#08e826,#0ee704,#39ec00,#6af200,#91f700,#a9fa00,#b4f900,#bcf900,#c3f900,#caf800,#d0f800,#d6f700,#dcf700,#e1f700,#e7f600,#edf600,#f3f600,#f8f500,#fdf500,#fff400,#fff300,#fff200,#fff100,#fff000,#fff000,#ffef00,#ffee00,#ffed00,#ffed00,#ffec00,#ffea00,#ffe900,#ffe800,#ffe700,#ffe500,#ffe400,#ffe200,#ffe000,#ffdf00,#ffdd00,#ffda00,#ffd800,#ffd600,#ffd300,#ffd100,#ffce00,#ffcc00,#ffc900)}
.f38{top:76px;background:linear-gradient(90deg,#0018f5,#000ef1,#0908f2,#1705f5,#2303f7,#2f01f9,#3900fb,#4100fb,#4800fc,#4e00fc,#5300fd,#5600fd,#5700fd,#5700fd,#5500fd,#5100fc,#4d00fc,#4900fc,#4500fb,#4100fb,#3e00fb,#3c00fb,#3a00fb,#3900fb,#3600fa,#2403f4,#020cde,#001fde,#003af8,#0068ff,#0093ff,#00b6ff,#00d5ff,#00eeff,#00f4f6,#00f4eb,#00f3e3,#00f3dd,#00f3d8,#00f2d3,#00f2ce,#00f2c8,#00f1c1,#00f1b9,#00f0af,#01efa1,#02ee8b,#03ed74,#05eb5a,#06ea3d,#08e81c,#14e700,#41ed00,#70f300,#96f700,#adfa00,#b7f900,#bff900,#c6f800,#ccf800,#d2f800,#d8f700,#ddf700,#e2f700,#e8f600,#eef600,#f4f600,#f9f500,#fef500,#fff400,#fff300,#fff200,#fff100,#fff000,#ffef00,#ffef00,#ffee00,#ffed00,#ffec00,#ffeb00,#ffea00,#ffe900,#ffe800,#ffe700,#ffe500,#ffe400,#ffe200,#ffe000,#ffde00,#ffdc00,#ffda00,#ffd800,#ffd500,#ffd300,#ffd000,#ffce00,#ffcb00,#ffc800)}
.f39{top:78px;background:linear-gradient(90deg,#0013f3,#020af1,#0f07f3,#1c04f6,#2902f8,#3400fa,#3d00fb,#4500fb,#4c00fc,#5200fc,#5700fd,#5a00fd,#5b00fd,#5b00fd,#5800fd,#5400fd,#5000fc,#4b00fc,#4700fc,#4300fb,#4000fb,#3e00fb,#3c00fb,#3b00fb,#3900fa,#2b01f7,#0709e2,#001cdb,#0037f5,#0067fe,#0094ff,#00b8ff,#00d9ff,#00f1fe,#00f4f2,#00f4e6,#00f3de,#00f3d8,#00f2d3,#00f2cf,#00f2ca,#00f2c4,#00f1bd,#00f1b5,#00f0ab,#01ef99,#02ee83,#04ec6b,#05eb51,#07e933,#09e712,#1ee900,#49ee00,#75f300,#99f800,#affa00,#baf900,#c2f900,#c8f800,#cef800,#d4f800,#daf700,#dff700,#e4f700,#e9f600,#eff600,#f4f600,#faf500,#fef500,#fff400,#fff300,#fff200,#fff100,#fff000,#ffef00,#ffef00,#ffee00,#ffed00,#ffec00,#ffeb00,#ffea00,#ffe900,#ffe800,#ffe600,#ffe500,#ffe300,#ffe200,#ffe000,#ffde00,#ffdc00,#ffd900,#ffd700,#ffd500,#ffd200,#ffd000,#ffcd00,#ffca00,#ffc700)}
.f40{top:80px;background:linear-gradient(90deg,#000ef1,#0709f1,#1406f4,#2103f7,#2e01f9,#3800fa,#4100fb,#4900fc,#5000fc,#5600fd,#5a00fd,#5e00fd,#5f00fd,#5f00fd,#5c00fd,#5700fd,#5200fc,#4d00fc,#4900fc,#4500fb,#4300fb,#4000fb,#3f00fb,#3d00fb,#3c00fb,#3200f9,#0d07e7,#001ada,#0034f1,#0065fe,#0095ff,#00bcff,#00ddff,#00f4fc,#00f4ed,#00f3e2,#00f3da,#00f2d4,#00f2cf,#00f2cb,#00f2c6,#00f1c0,#00f1b9,#00f0b1,#00f0a5,#01ef91,#03ed7b,#04ec62,#06ea47,#08e829,#0ae708,#28ea00,#51ef00,#7af400,#9cf800,#b1fa00,#bcf900,#c4f800,#caf800,#d0f800,#d6f700,#dbf700,#e0f700,#e5f700,#eaf600,#f0f600,#f5f600,#faf500,#fef500,#fff400,#fff200,#fff100,#fff100,#fff000,#ffef00,#ffee00,#ffee00,#ffed00,#ffec00,#ffeb00,#ffea00,#ffe900,#ffe700,#ffe600,#ffe500,#ffe300,#ffe100,#ffdf00,#ffdd00,#ffdb00,#ffd900,#ffd700,#ffd400,#ffd200,#ffcf00,#ffcc00,#ffca00,#ffc700)}
.f41{top:82px;background:linear-gradient(90deg,#020af0,#0c08f2,#1a05f5,#2702f8,#3300fa,#3d00fb,#4500fb,#4d00fc,#5400fd,#5a00fd,#5e00fd,#6100fe,#6300fe,#6200fe,#5f00fd,#5900fd,#5400fd,#4f00fc,#4b00fc,#4700fc,#4500fb,#4300fb,#4100fb,#4000fb,#3e00fb,#3800fa,#1605ec,#0018da,#0031ed,#0064fd,#0097ff,#00c0ff,#00e2ff,#00f5f8,#00f4e9,#00f3de,#00f3d6,#00f2d0,#00f2cc,#00f2c7,#00f1c2,#00f1bd,#00f1b5,#00f0ad,#01ef9e,#02ee89,#03ed73,#05eb59,#06ea3d,#08e81e,#0fe702,#32eb00,#59f000,#7ff500,#9ff900,#b2fa00,#bdf900,#c6f800,#ccf800,#d2f800,#d8f700,#ddf700,#e2f700,#e7f600,#ecf600,#f1f600,#f6f600,#fbf500,#fff500,#fff300,#fff200,#fff100,#fff000,#fff000,#ffef00,#ffee00,#ffee00,#ffed00,#ffec00,#ffeb00,#ffea00,#ffe900,#ffe700,#ffe600,#ffe400,#ffe300,#ffe100,#ffdf00,#ffdd00,#ffdb00,#ffd900,#ffd600,#ffd400,#ffd100,#ffcf00,#ffcc00,#ffc900,#ffc600)}
.f42{top:84px;background:linear-gradient(90deg,#0709f1,#1206f4,#2004f6,#2d01f9,#3800fa,#4100fb,#4a00fc,#5100fc,#5800fd,#5d00fd,#6200fe,#6500fe,#6600fe,#6500fe,#6200fe,#5c00fd,#5600fd,#5100fc,#4c00fc,#4900fc,#4700fc,#4500fb,#4300fb,#4200fb,#4100fb,#3c00fb,#1f03f0,#0015db,#002ee8,#0062fc,#0099ff,#00c4ff,#00e8ff,#00f4f3,#00f3e4,#00f3d9,#00f2d2,#00f2cd,#00f2c8,#00f2c4,#00f1bf,#00f1b9,#00f0b2,#00f0a8,#01ef97,#02ee82,#04ec6a,#05eb50,#07e933,#09e713,#18e800,#3bec00,#60f100,#83f500,#a2f900,#b4f900,#bff900,#c7f800,#cef800,#d4f800,#d9f700,#def700,#e3f700,#e8f600,#edf600,#f2f600,#f7f500,#fcf500,#fff500,#fff300,#fff200,#fff100,#fff000,#ffef00,#ffef00,#ffee00,#ffed00,#ffed00,#ffec00,#ffeb00,#ffea00,#ffe800,#ffe700,#ffe600,#ffe400,#ffe200,#ffe100,#ffdf00,#ffdd00,#ffda00,#ffd800,#ffd600,#ffd300,#ffd100,#ffce00,#ffcb00,#ffc800,#ffc500)}
.f43{top:86px;background:linear-gradient(90deg,#0d07f3,#1805f5,#2503f7,#3200fa,#3c00fb,#4500fb,#4e00fc,#5500fd,#5b00fd,#6100fe,#6500fe,#6800fe,#6900fe,#6800fe,#6400fe,#5e00fd,#5800fd,#5200fc,#4e00fc,#4b00fc,#4900fc,#4700fc,#4600fc,#4500fb,#4400fb,#4100fb,#2902f4,#0110dd,#002be4,#005ffa,#009aff,#00c8ff,#00edff,#00f4ef,#00f3df,#00f3d5,#00f2ce,#00f2c9,#00f2c5,#00f1c1,#00f1bc,#00f1b6,#00f0af,#00f0a3,#02ee90,#03ed7a,#04ec62,#06ea47,#08e829,#0ae709,#22e900,#44ed00,#67f200,#88f600,#a5f900,#b5f900,#c0f900,#c9f800,#cff800,#d5f700,#dbf700,#e0f700,#e5f700,#e9f600,#eef600,#f3f600,#f8f500,#fcf500,#fff400,#fff300,#fff200,#fff100,#fff000,#ffef00,#ffef00,#ffee00,#ffed00,#ffec00,#ffec00,#ffeb00,#ffe900,#ffe800,#ffe700,#ffe500,#ffe400,#ffe200,#ffe000,#ffde00,#ffdc00,#ffda00,#ffd800,#ffd500,#ffd300,#ffd000,#ffcd00,#ffcb00,#ffc800,#ffc500)}
.f44{top:88px;background:linear-gradient(90deg,#1206f4,#1d04f6,#2b01f9,#3700fa,#4100fb,#4a00fc,#5200fc,#5900fd,#5f00fd,#6400fe,#6800fe,#6b00fe,#6c00fe,#6a00fe,#6600fe,#6000fe,#5900fd,#5400fd,#5000fc,#4e00fc,#4c00fc,#4a00fc,#4900fc,#4800fc,#4700fc,#4400fb,#3301f7,#050ce0,#0028e0,#005af7,#009bfe,#00cbff,#00f1fd,#00f4ea,#00f3db,#00f2d2,#00f2cb,#00f2c6,#00f1c2,#00f1be,#00f1ba,#00f1b3,#00f0ac,#01ef9d,#02ee8a,#03ed73,#05eb5a,#06ea3d,#08e81f,#0ee702,#2cea00,#4dee00,#6ef200,#8df600,#a8fa00,#b7f900,#c2f900,#caf800,#d1f800,#d7f700,#dcf700,#e1f700,#e6f600,#ebf600,#eff600,#f4f600,#f9f500,#fdf500,#fff400,#fff300,#fff200,#fff100,#fff000,#ffef00,#ffee00,#ffee00,#ffed00,#ffec00,#ffeb00,#ffea00,#ffe900,#ffe800,#ffe700,#ffe500,#ffe300,#ffe200,#ffe000,#ffde00,#ffdc00,#ffda00,#ffd700,#ffd500,#ffd200,#ffd000,#ffcd00,#ffca00,#ffc700,#ffc400)}
.f45{top:90px;background:linear-gradient(90deg,#1705f5,#2303f7,#3000fa,#3b00fb,#4500fb,#4e00fc,#5500fd,#5c00fd,#6200fe,#6700fe,#6b00fe,#6d00ff,#6e00ff,#6c00fe,#6800fe,#6100fe,#5b00fd,#5600fd,#5200fc,#5000fc,#4e00fc,#4d00fc,#4c00fc,#4a00fc,#4900fc,#4800fc,#3b00f9,#0c08e5,#0024dd,#0054f3,#0099fe,#00ceff,#00f3fb,#00f4e6,#00f3d8,#00f2cf,#00f2c9,#00f2c4,#00f1c0,#00f1bc,#00f1b7,#00f0b1,#00f0a8,#01ef98,#02ee84,#04ec6c,#05eb52,#07e934,#09e715,#15e700,#35eb00,#56ef00,#75f300,#92f700,#abfa00,#b8f900,#c3f900,#cbf800,#d2f800,#d8f700,#ddf700,#e2f700,#e7f600,#ecf600,#f1f600,#f5f600,#faf500,#fef500,#fff400,#fff200,#fff100,#fff000,#fff000,#ffef00,#ffee00,#ffee00,#ffed00,#ffec00,#ffeb00,#ffea00,#ffe900,#ffe800,#ffe600,#ffe500,#ffe300,#ffe100,#ffe000,#ffdd00,#ffdb00,#ffd900,#ffd700,#ffd400,#ffd200,#ffcf00,#ffcc00,#ffc900,#ffc600,#ffc300)}
.f46{top:92px;background:linear-gradient(90deg,#1d04f6,#2802f8,#3400fa,#3f00fb,#4900fc,#5100fc,#5900fd,#6000fe,#6500fe,#6a00fe,#6e00ff,#7000ff,#7000ff,#6e00ff,#6900fe,#6300fe,#5c00fd,#5800fd,#5500fd,#5300fd,#5100fc,#5000fc,#4f00fc,#4e00fc,#4d00fc,#4b00fc,#4300fb,#1905eb,#0020dc,#004cee,#0096fd,#00d0ff,#00f4f9,#00f3e4,#00f3d6,#00f2cd,#00f2c7,#00f1c3,#00f1bf,#00f1bb,#00f1b6,#00f0af,#00f0a5,#01ef93,#03ed7e,#04ec66,#06ea4a,#07e92c,#09e70b,#1fe900,#3fed00,#5ef000,#7cf400,#97f800,#adfa00,#baf900,#c4f800,#ccf800,#d3f800,#d9f700,#def700,#e3f700,#e8f600,#edf600,#f2f600,#f6f600,#fbf500,#fff500,#fff300,#fff200,#fff100,#fff000,#ffef00,#ffef00,#ffee00,#ffed00,#ffed00,#ffec00,#ffeb00,#ffea00,#ffe900,#ffe800,#ffe600,#ffe500,#ffe300,#ffe100,#ffdf00,#ffdd00,#ffdb00,#ffd900,#ffd600,#ffd400,#ffd100,#ffce00,#ffcc00,#ffc900,#ffc600,#ffc300)}
.f47{top:94px;background:linear-gradient(90deg,#2103f7,#2d01f9,#3800fa,#4300fb,#4d00fc,#5500fd,#5c00fd,#6300fe,#6800fe,#6d00ff,#7000ff,#7200ff,#7200ff,#7000ff,#6b00fe,#6500fe,#5e00fd,#5a00fd,#5700fd,#5500fd,#5400fd,#5300fd,#5200fc,#5100fc,#5000fc,#4f00fc,#4900fb,#2702f1,#001add,#0044ea,#008ffb,#00cfff,#00f4f8,#00f3e2,#00f2d4,#00f2cc,#00f2c6,#00f1c2,#00f1be,#00f1ba,#00f1b4,#00f0ad,#01efa1,#02ee8f,#03ed79,#04ec60,#06ea43,#08e823,#0ce704,#28ea00,#48ee00,#66f200,#83f500,#9df800,#b0fa00,#bbf900,#c5f800,#cdf800,#d4f800,#daf700,#dff700,#e5f700,#e9f600,#eef600,#f3f600,#f8f500,#fcf500,#fff500,#fff300,#fff200,#fff100,#fff000,#ffef00,#ffee00,#ffee00,#ffed00,#ffed00,#ffec00,#ffeb00,#ffea00,#ffe900,#ffe700,#ffe600,#ffe400,#ffe300,#ffe100,#ffdf00,#ffdd00,#ffdb00,#ffd800,#ffd600,#ffd300,#ffd100,#ffce00,#ffcb00,#ffc800,#ffc500,#ffc200)}
.f48{top:96px;background:linear-gradient(90deg,#2602f8,#3100fa,#3c00fb,#4700fc,#5000fc,#5800fd,#6000fe,#6600fe,#6b00fe,#7000ff,#7300ff,#7400ff,#7400ff,#7200ff,#6d00ff,#6700fe,#6100fe,#5d00fd,#5a00fd,#5900fd,#5700fd,#5600fd,#5500fd,#5400fd,#5300fd,#5200fc,#4e00fc,#3501f6,#0212de,#003be5,#0086f9,#00ccff,#00f4f9,#00f3e3,#00f2d4,#00f2cc,#00f2c6,#00f1c2,#00f1be,#00f1b9,#00f1b4,#00f0ac,#01ef9e,#02ee8b,#03ed75,#05eb5a,#06ea3c,#08e81b,#12e701,#32eb00,#51ef00,#6ff300,#8af600,#a2f900,#b2fa00,#bdf900,#c6f800,#cef800,#d5f700,#dbf700,#e0f700,#e6f600,#ebf600,#eff600,#f4f600,#f9f500,#fdf500,#fff400,#fff300,#fff200,#fff000,#fff000,#ffef00,#ffee00,#ffed00,#ffed00,#ffec00,#ffec00,#ffeb00,#ffea00,#ffe800,#ffe700,#ffe600,#ffe400,#ffe200,#ffe100,#ffde00,#ffdc00,#ffda00,#ffd800,#ffd500,#ffd300,#ffd000,#ffcd00,#ffcb00,#ffc800,#ffc400,#ffc100)}
.f49{top:98px;background:linear-gradient(90deg,#2b01f9,#3500fa,#4000fb,#4a00fc,#5300fd,#5b00fd,#6300fe,#6900fe,#6e00ff,#7200ff,#7500ff,#7600ff,#7600ff,#7400ff,#7000ff,#6a00fe,#6400fe,#6000fe,#5e00fd,#5c00fd,#5b00fd,#5a00fd,#5900fd,#5800fd,#5700fd,#5500fd,#5300fc,#4100f9,#080be2,#0032e1,#007af6,#00c5fe,#00f2fc,#00f3e5,#00f3d6,#00f2cd,#00f2c7,#00f1c3,#00f1bf,#00f1ba,#00f1b3,#00f0ab,#01ef9c,#02ee88,#03ed70,#05eb55,#07e936,#09e713,#1ae800,#3bec00,#5bf000,#77f400,#90f700,#a7fa00,#b4f900,#bff900,#c8f800,#cff800,#d6f700,#dcf700,#e1f700,#e7f600,#ecf600,#f1f600,#f5f600,#faf500,#fef500,#fff400,#fff200,#fff100,#fff000,#ffef00,#ffee00,#ffee00,#ffed00,#ffed00,#ffec00,#ffeb00,#ffeb00,#ffe900,#ffe800,#ffe700,#ffe500,#ffe400,#ffe200,#ffe000,#ffde00,#ffdc00,#ffda00,#ffd700,#ffd500,#ffd200,#ffd000,#ffcd00,#ffca00,#ffc700,#ffc400,#ffc100)}
.f50{top:100px;background:linear-gradient(90deg,#2f01f9,#3900fb,#4300fb,#4d00fc,#5600fd,#5e00fd,#6600fe,#6c00fe,#7100ff,#7500ff,#7700ff,#7800ff,#7700ff,#7600ff,#7200ff,#6d00ff,#6800fe,#6500fe,#6200fe,#6100fe,#5f00fd,#5e00fd,#5d00fd,#5c00fd,#5a00fd,#5900fd,#5700fd,#4b00fb,#1506e8,#002bdf,#006ef2,#00bdfe,#00edfe,#00f4ea,#00f3d9,#00f2cf,#00f2c9,#00f2c5,#00f1c0,#00f1ba,#00f1b3,#00f0aa,#01ef9a,#02ee85,#04ec6d,#05eb50,#07e930,#09e70c,#22e900,#45ed00,#64f100,#7ff500,#97f800,#abfa00,#b7f900,#c1f900,#c9f800,#d0f800,#d7f700,#ddf700,#e2f700,#e8f600,#edf600,#f2f600,#f7f500,#fbf500,#fff500,#fff300,#fff200,#fff100,#fff000,#ffef00,#ffee00,#ffed00,#ffed00,#ffec00,#ffec00,#ffeb00,#ffea00,#ffe900,#ffe800,#ffe700,#ffe500,#ffe300,#ffe200,#ffe000,#ffde00,#ffdc00,#ffd900,#ffd700,#ffd400,#ffd200,#ffcf00,#ffcc00,#ffc900,#ffc600,#ffc300,#ffc000)}
.f51{top:102px;background:linear-gradient(90deg,#3300fa,#3c00fb,#4600fc,#5000fc,#5900fd,#6100fe,#6800fe,#6f00ff,#7300ff,#7700ff,#7900ff,#7a00ff,#7900ff,#7800ff,#7500ff,#7100ff,#6d00ff,#6900fe,#6700fe,#6500fe,#6300fe,#6200fe,#6100fe,#6000fe,#5e00fd,#5d00fd,#5b00fd,#5300fc,#2603ef,#0023de,#0060ed,#00b3fd,#00e6ff,#00f4ef,#00f3dd,#00f2d2,#00f2cc,#00f2c7,#00f1c2,#00f1bb,#00f1b4,#00f0aa,#01ef98,#02ee82,#04ec69,#06ea4c,#08e82a,#0be706,#2bea00,#4eef00,#6df200,#88f600,#9ef900,#affa00,#b9f900,#c2f900,#caf800,#d2f800,#d8f700,#def700,#e3f700,#e9f600,#eef600,#f3f600,#f8f500,#fcf500,#fff400,#fff300,#fff100,#fff000,#ffef00,#ffee00,#ffee00,#ffed00,#ffed00,#ffec00,#ffec00,#ffeb00,#ffea00,#ffe900,#ffe800,#ffe600,#ffe500,#ffe300,#ffe100,#ffdf00,#ffdd00,#ffdb00,#ffd900,#ffd600,#ffd400,#ffd100,#ffcf00,#ffcc00,#ffc900,#ffc600,#ffc300,#ffbf00)}
.f52{top:104px;background:linear-gradient(90deg,#3600fa,#3f00fb,#4900fc,#5300fd,#5c00fd,#6400fe,#6b00fe,#7100ff,#7600ff,#7900ff,#7b00ff,#7c00ff,#7c00ff,#7a00ff,#7800ff,#7500ff,#7100ff,#6e00ff,#6b00fe,#6a00fe,#6800fe,#6700fe,#6500fe,#6400fe,#6200fe,#6100fe,#5f00fd,#5900fd,#3701f4,#0019dd,#0053e8,#00a7fb,#00ddff,#00f4f4,#00f3e1,#00f3d6,#00f2d0,#00f2cb,#00f2c5,#00f1bd,#00f1b4,#00f0aa,#01ef97,#02ee80,#04ec66,#06ea48,#08e825,#0fe703,#33eb00,#58f000,#77f400,#90f700,#a5f900,#b2fa00,#bbf900,#c4f800,#ccf800,#d3f800,#d9f700,#dff700,#e4f700,#eaf600,#eff600,#f4f600,#f9f500,#fef500,#fff400,#fff200,#fff100,#fff000,#ffef00,#ffee00,#ffed00,#ffed00,#ffec00,#ffec00,#ffeb00,#ffea00,#ffea00,#ffe900,#ffe700,#ffe600,#ffe400,#ffe300,#ffe100,#ffdf00,#ffdd00,#ffdb00,#ffd800,#ffd600,#ffd300,#ffd100,#ffce00,#ffcb00,#ffc800,#ffc500,#ffc200,#ffbe00)}
.f53{top:106px;background:linear-gradient(90deg,#3a00fb,#4200fb,#4c00fc,#5600fd,#5f00fd,#6700fe,#6e00ff,#7400ff,#7800ff,#7b00ff,#7d00ff,#7e00ff,#7e00ff,#7d00ff,#7b00ff,#7800ff,#7500ff,#7300ff,#7000ff,#6e00ff,#6d00ff,#6b00fe,#6a00fe,#6800fe,#6600fe,#6400fe,#6300fe,#5e00fd,#4500f8,#0510df,#0045e4,#0099f8,#00d3ff,#00f4fa,#00f4e6,#00f3db,#00f3d5,#00f2cf,#00f2c8,#00f1bf,#00f1b5,#00f0aa,#01ef95,#03ed7e,#04ec63,#06ea45,#08e821,#13e701,#3cec00,#61f100,#80f500,#98f800,#aafa00,#b5f900,#bef900,#c6f800,#cdf800,#d4f800,#daf700,#e0f700,#e5f700,#ebf600,#f0f600,#f6f600,#faf500,#fff500,#fff300,#fff200,#fff100,#ffef00,#ffee00,#ffee00,#ffed00,#ffec00,#ffec00,#ffeb00,#ffeb00,#ffea00,#ffe900,#ffe800,#ffe700,#ffe600,#ffe400,#ffe300,#ffe100,#ffdf00,#ffdd00,#ffda00,#ffd800,#ffd600,#ffd300,#ffd000,#ffce00,#ffcb00,#ffc800,#ffc500,#ffc100,#ffbe00)}
.f54{top:108px;background:linear-gradient(90deg,#3d00fb,#4600fc,#4f00fc,#5900fd,#6100fe,#6900fe,#7000ff,#7600ff,#7a00ff,#7d00ff,#7f00fe,#8000fe,#8000fe,#8000fe,#7e00ff,#7b00ff,#7900ff,#7700ff,#7500ff,#7300ff,#7200ff,#7000ff,#6e00ff,#6c00fe,#6a00fe,#6800fe,#6600fe,#6300fe,#5100fa,#1108e4,#0038e1,#0089f5,#00c8fe,#00f0fd,#00f4eb,#00f3e0,#00f3da,#00f2d4,#00f2cb,#00f1c1,#00f1b6,#00f0a9,#01ef94,#03ed7c,#04ec60,#06ea41,#08e81c,#18e800,#44ed00,#6bf200,#89f600,#a0f900,#affa00,#b8f900,#c0f900,#c8f800,#cff800,#d5f700,#dbf700,#e1f700,#e6f600,#ecf600,#f2f600,#f7f500,#fcf500,#fff400,#fff300,#fff100,#fff000,#ffef00,#ffee00,#ffed00,#ffed00,#ffec00,#ffec00,#ffeb00,#ffea00,#ffea00,#ffe900,#ffe800,#ffe700,#ffe500,#ffe400,#ffe200,#ffe000,#ffde00,#ffdc00,#ffda00,#ffd800,#ffd500,#ffd300,#ffd000,#ffcd00,#ffca00,#ffc700,#ffc400,#ffc100,#ffbd00)}
.f55{top:110px;background:linear-gradient(90deg,#4000fb,#4900fc,#5200fc,#5b00fd,#6400fe,#6c00fe,#7300ff,#7800ff,#7c00ff,#7f00fe,#8100fe,#8300fe,#8300fe,#8200fe,#8100fe,#7f00fe,#7d00ff,#7b00ff,#7900ff,#7800ff,#7600ff,#7500ff,#7300ff,#7100ff,#6f00ff,#6c00fe,#6a00fe,#6700fe,#5a00fc,#2203eb,#002cdf,#0076f0,#00bdfd,#00e9ff,#00f4f0,#00f4e6,#00f3e1,#00f3d9,#00f2ce,#00f1c3,#00f1b7,#00f0a9,#01ef92,#03ed79,#05eb5d,#06ea3e,#09e719,#1ee800,#4cee00,#75f300,#92f700,#a7fa00,#b2fa00,#baf900,#c2f900,#caf800,#d1f800,#d7f700,#dcf700,#e2f700,#e7f600,#edf600,#f3f600,#f8f500,#fdf500,#fff400,#fff200,#fff100,#ffef00,#ffee00,#ffee00,#ffed00,#ffec00,#ffec00,#ffeb00,#ffeb00,#ffea00,#ffe900,#ffe900,#ffe800,#ffe600,#ffe500,#ffe400,#ffe200,#ffe000,#ffde00,#ffdc00,#ffda00,#ffd700,#ffd500,#ffd200,#ffcf00,#ffcd00,#ffca00,#ffc700,#ffc300,#ffc000,#ffbc00)}
.f56{top:112px;background:linear-gradient(90deg,#4300fb,#4b00fc,#5500fd,#5e00fd,#6700fe,#6e00ff,#7500ff,#7a00ff,#7e00ff,#8100fe,#8400fe,#8500fe,#8600fe,#8500fe,#8400fe,#8300fe,#8100fe,#7f00fe,#7e00ff,#7c00ff,#7a00ff,#7900ff,#7700ff,#7500ff,#7300ff,#7100ff,#6e00ff,#6c00fe,#6200fd,#3501f2,#0021de,#0062ec,#00affc,#00e0ff,#00f4f6,#00f4ec,#00f4e8,#00f3de,#00f2d2,#00f2c4,#00f1b7,#00f0a8,#02ee90,#03ed76,#05eb5a,#07e93a,#09e715,#23e900,#53ef00,#7ef400,#9af800,#acfa00,#b6f900,#bdf900,#c4f800,#ccf800,#d2f800,#d8f700,#def700,#e3f700,#e9f600,#eff600,#f5f600,#faf500,#fff500,#fff300,#fff200,#fff000,#ffef00,#ffee00,#ffed00,#ffec00,#ffec00,#ffeb00,#ffeb00,#ffea00,#ffea00,#ffe900,#ffe800,#ffe700,#ffe600,#ffe500,#ffe300,#ffe200,#ffe000,#ffde00,#ffdc00,#ffd900,#ffd700,#ffd400,#ffd200,#ffcf00,#ffcc00,#ffc900,#ffc600,#ffc300,#ffbf00,#ffbb00)}
.f57{top:114px;background:linear-gradient(90deg,#4600fc,#4e00fc,#5800fd,#6100fe,#6900fe,#7100ff,#7700ff,#7c00ff,#8000fe,#8300fe,#8600fe,#8800fe,#8800fe,#8900fe,#8800fe,#8700fe,#8500fe,#8400fe,#8200fe,#8000fe,#7f00fe,#7d00ff,#7b00ff,#7900ff,#7700ff,#7400ff,#7200ff,#6f00ff,#6900fe,#4600f6,#0215de,#004de6,#009df9,#00d4ff,#00f4fb,#00f4f4,#00f4f0,#00f3e3,#00f2d4,#00f2c6,#00f1b7,#00f0a7,#02ee8e,#03ed73,#05eb56,#07e935,#09e710,#28ea00,#5af000,#85f500,#a1f900,#b0fa00,#b9f900,#c0f900,#c7f800,#cef800,#d4f800,#daf700,#e0f700,#e5f700,#eaf600,#f0f600,#f6f600,#fcf500,#fff400,#fff300,#fff100,#fff000,#ffee00,#ffed00,#ffed00,#ffec00,#ffeb00,#ffeb00,#ffea00,#ffea00,#ffe900,#ffe900,#ffe800,#ffe700,#ffe600,#ffe400,#ffe300,#ffe100,#ffdf00,#ffdd00,#ffdb00,#ffd900,#ffd600,#ffd400,#ffd100,#ffce00,#ffcc00,#ffc900,#ffc500,#ffc200,#ffbf00,#ffbb00)}
.f58{top:116px;background:linear-gradient(90deg,#4900fc,#5100fc,#5a00fd,#6300fe,#6b00fe,#7300ff,#7900ff,#7e00ff,#8200fe,#8600fe,#8800fe,#8a00fe,#8b00fe,#8c00fe,#8b00fe,#8b00fe,#8900fe,#8800fe,#8700fe,#8500fe,#8300fe,#8100fe,#7f00fe,#7d00ff,#7a00ff,#7800ff,#7600ff,#7300ff,#6e00ff,#5400fa,#0c0be1,#003ae2,#0088f6,#00c6fe,#00eeff,#00f5fc,#00f5f7,#00f4e7,#00f3d6,#00f2c6,#00f1b7,#00f0a5,#02ee8b,#03ed6f,#05eb51,#07e92f,#0ae709,#2feb00,#60f100,#8af600,#a6f900,#b3f900,#bcf900,#c3f900,#c9f800,#d0f800,#d6f700,#dcf700,#e2f700,#e7f600,#ecf600,#f2f600,#f8f500,#fdf500,#fff400,#fff200,#fff000,#ffef00,#ffee00,#ffed00,#ffec00,#ffeb00,#ffeb00,#ffea00,#ffea00,#ffe900,#ffe900,#ffe800,#ffe700,#ffe600,#ffe500,#ffe400,#ffe300,#ffe100,#ffdf00,#ffdd00,#ffdb00,#ffd800,#ffd600,#ffd300,#ffd100,#ffce00,#ffcb00,#ffc800,#ffc500,#ffc200,#ffbe00,#ffba00)}
.f59{top:118px;background:linear-gradient(90deg,#4b00fc,#5300fd,#5d00fd,#6500fe,#6e00ff,#7500ff,#7b00ff,#8000fe,#8400fe,#8800fe,#8b00fe,#8d00fe,#8e00fe,#8f00fe,#8f00fe,#8e00fe,#8e00fe,#8d00fe,#8b00fe,#8900fe,#8800fe,#8500fe,#8300fe,#8000fe,#7e00ff,#7b00ff,#7900ff,#7600ff,#7300ff,#6100fc,#1f04e9,#002cdf,#0070f1,#00b5fe,#00dfff,#00eeff,#00f5fb,#00f4e9,#00f3d7,#00f2c6,#00f1b6,#00f0a3,#02ee87,#04ec6a,#06ea4b,#08e829,#0de704,#36eb00,#65f100,#8df600,#a9fa00,#b6f900,#bff900,#c6f800,#ccf800,#d3f800,#d9f700,#def700,#e4f700,#e9f600,#eff600,#f4f600,#faf500,#fff500,#fff300,#fff100,#fff000,#ffee00,#ffed00,#ffec00,#ffec00,#ffeb00,#ffea00,#ffea00,#ffea00,#ffe900,#ffe900,#ffe800,#ffe700,#ffe600,#ffe500,#ffe400,#ffe200,#ffe100,#ffdf00,#ffdd00,#ffda00,#ffd800,#ffd600,#ffd300,#ffd000,#ffce00,#ffcb00,#ffc800,#ffc400,#ffc100,#ffbd00,#ffb900)}
.f60{top:120px;background:linear-gradient(90deg,#4e00fc,#5600fd,#5f00fd,#6800fe,#7000ff,#7700ff,#7d00ff,#8200fe,#8600fe,#8a00fe,#8d00fe,#8f00fe,#9100fe,#9200fe,#9200fe,#9200fe,#9200fe,#9100fe,#9000fe,#8e00fe,#8c00fe,#8a00fe,#8700fe,#8400fe,#8200fe,#7f00fe,#7c00ff,#7900ff,#7600ff,#6b00fe,#3601f1,#001fdd,#0059ec,#00a3fc,#00cfff,#00e6ff,#00f4fc,#00f4e9,#00f3d6,#00f2c5,#00f1b4,#01efa0,#02ee83,#04ec65,#06ea45,#08e821,#12e701,#3cec00,#69f200,#90f700,#abfa00,#b8f900,#c1f900,#c8f800,#cff800,#d5f700,#dbf700,#e1f700,#e6f600,#ebf600,#f1f600,#f7f500,#fcf500,#fff400,#fff200,#fff000,#ffef00,#ffee00,#ffed00,#ffec00,#ffeb00,#ffea00,#ffea00,#ffea00,#ffe900,#ffe900,#ffe800,#ffe800,#ffe700,#ffe600,#ffe500,#ffe300,#ffe200,#ffe000,#ffde00,#ffdc00,#ffda00,#ffd800,#ffd500,#ffd300,#ffd000,#ffcd00,#ffca00,#ffc700,#ffc400,#ffc000,#ffbd00,#ffb900)}
.f61{top:122px;background:linear-gradient(90deg,#5000fc,#5800fd,#6100fe,#6a00fe,#7200ff,#7900ff,#7e00fe,#8400fe,#8800fe,#8c00fe,#9000fe,#9200fe,#9400fe,#9500fd,#9600fd,#9600fd,#9600fd,#9500fd,#9400fe,#9300fe,#9000fe,#8e00fe,#8b00fe,#8800fe,#8500fe,#8200fe,#7f00fe,#7d00ff,#7a00ff,#7200ff,#4b00f7,#0313dd,#0045e6,#0091f9,#00c1ff,#00e0ff,#00f4fb,#00f4e8,#00f3d5,#00f1c3,#00f0b2,#01ef9c,#03ed7f,#04ec60,#06ea3e,#08e81a,#19e800,#43ed00,#6ef200,#93f700,#adfa00,#baf900,#c3f900,#cbf800,#d1f800,#d7f700,#ddf700,#e3f700,#e8f600,#eef600,#f3f600,#f9f500,#fef500,#fff300,#fff100,#fff000,#ffee00,#ffed00,#ffec00,#ffeb00,#ffea00,#ffea00,#ffe900,#ffe900,#ffe900,#ffe800,#ffe800,#ffe700,#ffe600,#ffe600,#ffe400,#ffe300,#ffe200,#ffe000,#ffde00,#ffdc00,#ffda00,#ffd700,#ffd500,#ffd200,#ffd000,#ffcd00,#ffca00,#ffc700,#ffc300,#ffc000,#ffbc00,#ffb800)}
.f62{top:124px;background:linear-gradient(90deg,#5300fd,#5b00fd,#6400fe,#6c00fe,#7400ff,#7a00ff,#8000fe,#8600fe,#8a00fe,#8e00fe,#9200fe,#9500fe,#9700fd,#9900fd,#9a00fd,#9a00fd,#9a00fd,#9a00fd,#9900fd,#9700fd,#9500fe,#9200fe,#8f00fe,#8c00fe,#8900fe,#8600fe,#8300fe,#8000fe,#7d00ff,#7800ff,#5d00fa,#0f09e2,#0036e2,#007ef6,#00b5fe,#00dbff,#00f4fa,#00f4e6,#00f2d3,#00f1c1,#00f0b0,#01ef97,#03ed7a,#05eb5a,#07e938,#09e712,#20e900,#49ee00,#72f300,#96f700,#affa00,#bcf900,#c5f800,#cdf800,#d4f800,#daf700,#e0f700,#e5f700,#ebf600,#f0f600,#f5f600,#fbf500,#fff400,#fff200,#fff000,#ffef00,#ffed00,#ffec00,#ffeb00,#ffeb00,#ffea00,#ffe900,#ffe900,#ffe900,#ffe800,#ffe800,#ffe700,#ffe700,#ffe600,#ffe500,#ffe400,#ffe300,#ffe200,#ffe000,#ffde00,#ffdc00,#ffda00,#ffd700,#ffd500,#ffd200,#ffcf00,#ffcc00,#ffc900,#ffc600,#ffc300,#ffbf00,#ffbb00,#ffb700)}
.f63{top:126px;background:linear-gradient(90deg,#5500fd,#5d00fd,#6600fe,#6e00ff,#7600ff,#7c00ff,#8200fe,#8700fe,#8c00fe,#9100fe,#9400fe,#9700fd,#9a00fd,#9c00fd,#9d00fd,#9e00fd,#9e00fd,#9e00fd,#9d00fd,#9c00fd,#9900fd,#9700fd,#9300fe,#9000fe,#8d00fe,#8900fe,#8600fe,#8300fe,#8000fe,#7c00ff,#6a00fd,#2403e9,#0029df,#006af1,#00aafe,#00d6ff,#00f4f9,#00f3e3,#00f2d0,#00f1be,#00f0ad,#01ef92,#03ed74,#05eb54,#07e931,#0ae70b,#27ea00,#50ef00,#77f400,#99f800,#b1fa00,#bef900,#c7f800,#cff800,#d6f700,#dcf700,#e2f700,#e7f600,#edf600,#f2f600,#f8f500,#fdf500,#fff300,#fff100,#fff000,#ffee00,#ffed00,#ffec00,#ffeb00,#ffea00,#ffe900,#ffe900,#ffe900,#ffe800,#ffe800,#ffe800,#ffe700,#ffe700,#ffe600,#ffe500,#ffe400,#ffe300,#ffe100,#ffe000,#ffde00,#ffdc00,#ffd900,#ffd700,#ffd400,#ffd200,#ffcf00,#ffcc00,#ffc900,#ffc600,#ffc200,#ffbf00,#ffbb00,#ffb600)}
.f64{top:128px;background:linear-gradient(90deg,#5700fd,#5f00fd,#6800fe,#7000ff,#7700ff,#7e00ff,#8400fe,#8900fe,#8e00fe,#9300fe,#9700fd,#9a00fd,#9d00fd,#9f00fd,#a100fd,#a200fd,#a300fd,#a300fd,#a200fd,#a000fd,#9e00fd,#9b00fd,#9800fd,#9400fe,#9100fe,#8d00fe,#8a00fe,#8600fe,#8300fe,#8000fe,#7500fe,#3d01f1,#001edd,#0056ec,#009efc,#00d1ff,#00f4f9,#00f3e2,#00f2ce,#00f1bc,#00f0aa,#02ee8d,#03ed6f,#05eb4e,#08e82a,#0ce705,#2feb00,#56f000,#7cf400,#9df800,#b3f900,#bff900,#c9f800,#d1f800,#d8f700,#def700,#e4f700,#e9f600,#eff600,#f4f600,#faf500,#fff500,#fff300,#fff100,#ffef00,#ffed00,#ffec00,#ffeb00,#ffea00,#ffe900,#ffe900,#ffe900,#ffe800,#ffe800,#ffe800,#ffe700,#ffe700,#ffe600,#ffe600,#ffe500,#ffe400,#ffe300,#ffe100,#ffdf00,#ffdd00,#ffdb00,#ffd900,#ffd700,#ffd400,#ffd100,#ffce00,#ffcb00,#ffc800,#ffc500,#ffc200,#ffbe00,#ffba00,#ffb600)}
.f65{top:130px;background:linear-gradient(90deg,#5900fd,#6100fe,#6a00fe,#7200ff,#7900ff,#7f00fe,#8500fe,#8b00fe,#9000fe,#9500fe,#9900fd,#9c00fd,#9f00fd,#a200fd,#a400fd,#a600fd,#a700fd,#a700fd,#a600fd,#a400fd,#a200fd,#9f00fd,#9c00fd,#9800fd,#9400fe,#9100fe,#8d00fe,#8900fe,#8600fe,#8300fe,#7c00fe,#5300f7,#0413dd,#0045e6,#0090f9,#00cbff,#00f3fa,#00f3e1,#00f2cc,#00f1b9,#00f0a5,#02ee88,#04ec69,#06ea48,#08e823,#10e702,#36eb00,#5df000,#81f500,#a1f900,#b4f900,#c1f900,#cbf800,#d3f800,#d9f700,#e0f700,#e5f700,#ebf600,#f1f600,#f6f600,#fcf500,#fff400,#fff200,#fff000,#ffee00,#ffed00,#ffeb00,#ffea00,#ffea00,#ffe900,#ffe800,#ffe800,#ffe800,#ffe800,#ffe700,#ffe700,#ffe700,#ffe600,#ffe500,#ffe500,#ffe400,#ffe200,#ffe100,#ffdf00,#ffdd00,#ffdb00,#ffd900,#ffd600,#ffd400,#ffd100,#ffce00,#ffcb00,#ffc800,#ffc500,#ffc100,#ffbd00,#ffb900,#ffb500)}
.f66{top:132px;background:linear-gradient(90deg,#5b00fd,#6200fe,#6b00fe,#7400ff,#7b00ff,#8100fe,#8700fe,#8d00fe,#9200fe,#9700fd,#9b00fd,#9f00fd,#a200fd,#a500fd,#a700fd,#a900fd,#aa00fd,#ab00fd,#aa00fd,#a900fd,#a600fd,#a300fd,#9f00fd,#9c00fd,#9800fd,#9400fe,#9000fe,#8d00fe,#8900fe,#8600fe,#8100fe,#6600fb,#1109e2,#0036e2,#0080f6,#00c2fe,#00f1fc,#00f3e2,#00f2cb,#00f1b7,#01efa1,#02ee82,#04ec63,#06ea42,#08e81c,#16e700,#3dec00,#64f100,#87f600,#a5f900,#b6f900,#c2f900,#ccf800,#d4f800,#dbf700,#e1f700,#e7f600,#edf600,#f2f600,#f8f500,#fef500,#fff300,#fff100,#ffef00,#ffed00,#ffec00,#ffeb00,#ffea00,#ffe900,#ffe800,#ffe800,#ffe800,#ffe700,#ffe700,#ffe700,#ffe700,#ffe600,#ffe600,#ffe500,#ffe400,#ffe300,#ffe200,#ffe100,#ffdf00,#ffdd00,#ffdb00,#ffd800,#ffd600,#ffd300,#ffd100,#ffce00,#ffcb00,#ffc800,#ffc400,#ffc100,#ffbd00,#ffb900,#ffb400)}
.f67{top:134px;background:linear-gradient(90deg,#5c00fd,#6400fe,#6d00ff,#7500ff,#7c00ff,#8200fe,#8900fe,#8e00fe,#9400fe,#9900fd,#9d00fd,#a100fd,#a500fd,#a800fd,#ab00fd,#ad00fc,#ae00fc,#af00fc,#af00fc,#ad00fc,#aa00fd,#a700fd,#a300fd,#9f00fd,#9b00fd,#9800fd,#9400fe,#9000fe,#8d00fe,#8a00fe,#8600fe,#7500fd,#2803ea,#002bdf,#0070f1,#00b9fe,#00edfe,#00f3e4,#00f2cb,#00f1b5,#01ef9b,#03ed7c,#04ec5e,#06ea3c,#09e716,#1de800,#45ed00,#6bf200,#8df600,#a9fa00,#b8f900,#c4f800,#cdf800,#d5f700,#dcf700,#e2f700,#e8f600,#eef600,#f4f600,#faf500,#fff500,#fff200,#fff000,#ffee00,#ffed00,#ffeb00,#ffea00,#ffe900,#ffe800,#ffe800,#ffe800,#ffe700,#ffe700,#ffe700,#ffe700,#ffe700,#ffe600,#ffe600,#ffe500,#ffe400,#ffe300,#ffe200,#ffe100,#ffdf00,#ffdd00,#ffdb00,#ffd800,#ffd600,#ffd300,#ffd000,#ffcd00,#ffca00,#ffc700,#ffc400,#ffc000,#ffbc00,#ffb800,#ffb300)}
.f68{top:136px;background:linear-gradient(90deg,#5e00fd,#6600fe,#6f00ff,#7700ff,#7d00ff,#8400fe,#8a00fe,#9000fe,#9600fd,#9b00fd,#9f00fd,#a400fd,#a700fd,#ab00fd,#ae00fc,#b000fc,#b200fc,#b300fc,#b300fc,#b100fc,#ae00fc,#ab00fd,#a700fd,#a300fd,#9f00fd,#9b00fd,#9700fd,#9300fe,#9000fe,#8d00fe,#8a00fe,#7f00fe,#4400f2,#0020dd,#0060ec,#00b1fc,#00e8ff,#00f4e6,#00f2ca,#00f0b2,#01ef95,#03ed76,#05eb57,#07e936,#09e70f,#24e900,#4dee00,#72f300,#93f700,#acfa00,#baf900,#c5f800,#cef800,#d6f700,#ddf700,#e3f700,#e9f600,#eff600,#f5f600,#fbf500,#fff400,#fff200,#fff000,#ffee00,#ffec00,#ffeb00,#ffe900,#ffe900,#ffe800,#ffe800,#ffe700,#ffe700,#ffe700,#ffe700,#ffe700,#ffe600,#ffe600,#ffe600,#ffe500,#ffe400,#ffe300,#ffe200,#ffe100,#ffdf00,#ffdd00,#ffdb00,#ffd800,#ffd600,#ffd300,#ffd000,#ffcd00,#ffca00,#ffc700,#ffc300,#ffc000,#ffbc00,#ffb700,#ffb300)}
.f69{top:138px;background:linear-gradient(90deg,#6000fe,#6700fe,#7000ff,#7800ff,#7f00fe,#8500fe,#8c00fe,#9200fe,#9700fd,#9d00fd,#a100fd,#a600fd,#aa00fd,#ad00fc,#b000fc,#b300fc,#b500fc,#b700fc,#b600fc,#b400fc,#b100fc,#ae00fc,#aa00fd,#a600fd,#a200fd,#9e00fd,#9b00fd,#9700fd,#9300fe,#9000fe,#8d00fe,#8600fe,#5c00f8,#0414de,#0051e6,#00a8f9,#00e3ff,#00f4e8,#00f2c9,#00f0af,#02ee8d,#04ec6e,#05eb51,#07e930,#0ae709,#2cea00,#55ef00,#7af400,#99f800,#affa00,#bcf900,#c7f800,#cff800,#d7f700,#ddf700,#e4f700,#eaf600,#f0f600,#f6f600,#fcf500,#fff400,#fff100,#ffef00,#ffed00,#ffeb00,#ffea00,#ffe900,#ffe800,#ffe800,#ffe700,#ffe700,#ffe700,#ffe700,#ffe700,#ffe600,#ffe600,#ffe600,#ffe600,#ffe500,#ffe400,#ffe300,#ffe200,#ffe100,#ffdf00,#ffdd00,#ffda00,#ffd800,#ffd500,#ffd300,#ffd000,#ffcd00,#ffca00,#ffc600,#ffc300,#ffbf00,#ffbb00,#ffb700,#ffb200)}
.f70{top:140px;background:linear-gradient(90deg,#6100fe,#6900fe,#7200ff,#7900ff,#8000fe,#8700fe,#8d00fe,#9300fe,#9900fd,#9e00fd,#a300fd,#a800fd,#ac00fc,#b000fc,#b300fc,#b600fc,#b800fc,#ba00fc,#b900fc,#b800fc,#b500fc,#b100fc,#ae00fc,#aa00fd,#a600fd,#a200fd,#9e00fd,#9a00fd,#9700fd,#9400fe,#9100fe,#8c00fe,#7100fb,#1309e3,#0043e3,#009ef7,#00e0ff,#00f4e9,#00f2c7,#00f0aa,#02ee85,#04ec66,#06ea4a,#08e82a,#0de705,#34eb00,#5ff100,#83f500,#a0f900,#b2fa00,#bef900,#c8f800,#d0f800,#d7f700,#def700,#e4f700,#eaf600,#f0f600,#f6f600,#fdf500,#fff300,#fff100,#ffee00,#ffec00,#ffeb00,#ffe900,#ffe900,#ffe800,#ffe700,#ffe700,#ffe700,#ffe600,#ffe600,#ffe600,#ffe600,#ffe600,#ffe600,#ffe500,#ffe500,#ffe400,#ffe300,#ffe200,#ffe100,#ffdf00,#ffdd00,#ffda00,#ffd800,#ffd500,#ffd300,#ffd000,#ffcd00,#ffc900,#ffc600,#ffc200,#ffbf00,#ffba00,#ffb600,#ffb100)}
.f71{top:142px;background:linear-gradient(90deg,#6200fe,#6a00fe,#7300ff,#7a00ff,#8100fe,#8800fe,#8e00fe,#9500fe,#9a00fd,#a000fd,#a500fd,#aa00fd,#ae00fc,#b200fc,#b600fc,#b900fc,#bb00fc,#bc00fc,#bc00fc,#ba00fc,#b800fc,#b500fc,#b100fc,#ad00fc,#a900fd,#a500fd,#a100fd,#9e00fd,#9a00fd,#9700fd,#9400fe,#9000fe,#7800fc,#1807e4,#0042e3,#009cf7,#00deff,#00f4e8,#00f2c4,#00f0a3,#03ed7a,#05eb5b,#06ea42,#08e823,#11e702,#3eec00,#68f200,#8bf600,#a6f900,#b5f900,#bff900,#c8f800,#d0f800,#d7f700,#ddf700,#e4f700,#eaf600,#f0f600,#f6f600,#fdf500,#fff300,#fff000,#ffee00,#ffec00,#ffea00,#ffe900,#ffe800,#ffe700,#ffe700,#ffe700,#ffe600,#ffe600,#ffe600,#ffe600,#ffe600,#ffe600,#ffe600,#ffe500,#ffe500,#ffe400,#ffe300,#ffe200,#ffe100,#ffdf00,#ffdd00,#ffda00,#ffd800,#ffd500,#ffd200,#ffcf00,#ffcc00,#ffc900,#ffc600,#ffc200,#ffbe00,#ffba00,#ffb500,#ffb100)}
.f72{top:144px;background:linear-gradient(90deg,#6400fe,#6b00fe,#7400ff,#7b00ff,#8200fe,#8900fe,#9000fe,#9600fd,#9c00fd,#a200fd,#a700fd,#ac00fc,#b000fc,#b400fc,#b800fc,#bb00fc,#bd00fc,#bf00fc,#bf00fc,#bd00fc,#bb00fc,#b800fc,#b400fc,#b000fc,#ac00fc,#a800fd,#a500fd,#a100fd,#9d00fd,#9a00fd,#9800fd,#9200fd,#6f00fa,#0a0fdf,#004be5,#00a1f9,#00deff,#00f4e7,#00f1c0,#01ef99,#04ec6e,#05eb4f,#07e938,#08e81c,#17e800,#48ee00,#73f300,#94f700,#abfa00,#b7f900,#c1f900,#c9f800,#d0f800,#d7f700,#ddf700,#e3f700,#e9f600,#eff600,#f6f600,#fdf500,#fff300,#fff000,#ffee00,#ffec00,#ffea00,#ffe900,#ffe800,#ffe700,#ffe700,#ffe600,#ffe600,#ffe600,#ffe600,#ffe600,#ffe600,#ffe600,#ffe600,#ffe500,#ffe500,#ffe400,#ffe300,#ffe200,#ffe100,#ffdf00,#ffdd00,#ffda00,#ffd800,#ffd500,#ffd200,#ffcf00,#ffcc00,#ffc900,#ffc500,#ffc200,#ffbd00,#ffb900,#ffb500,#ffb000)}
.f73{top:146px;background:linear-gradient(90deg,#6500fe,#6d00ff,#7500ff,#7c00ff,#8300fe,#8a00fe,#9100fe,#9700fd,#9d00fd,#a300fd,#a900fd,#ae00fc,#b200fc,#b600fc,#ba00fc,#bd00fc,#bf00fc,#c100fc,#c100fc,#bf00fc,#bd00fc,#ba00fc,#b700fc,#b300fc,#af00fc,#ac00fc,#a800fd,#a400fd,#a100fd,#9e00fd,#9b00fd,#9300fd,#6000f7,#0218dd,#0055e9,#00a6fb,#00e1ff,#00f3e4,#00f1bc,#02ee8d,#04ec5f,#06ea40,#07e92c,#09e714,#20e900,#53ef00,#7ef500,#9cf800,#affa00,#b9f900,#c1f900,#c9f800,#cff800,#d6f700,#dcf700,#e2f700,#e8f600,#eef600,#f5f600,#fcf500,#fff300,#fff000,#ffee00,#ffeb00,#ffea00,#ffe800,#ffe800,#ffe700,#ffe700,#ffe600,#ffe600,#ffe600,#ffe600,#ffe600,#ffe600,#ffe600,#ffe600,#ffe500,#ffe500,#ffe400,#ffe300,#ffe200,#ffe100,#ffdf00,#ffdd00,#ffda00,#ffd800,#ffd500,#ffd200,#ffcf00,#ffcc00,#ffc800,#ffc500,#ffc100,#ffbd00,#ffb800,#ffb400,#ffaf00)}
.f74{top:148px;background:linear-gradient(90deg,#6600fe,#6e00ff,#7600ff,#7d00ff,#8400fe,#8b00fe,#9200fe,#9800fd,#9f00fd,#a500fd,#aa00fd,#af00fc,#b400fc,#b800fc,#bc00fc,#bf00fc,#c100fc,#c300fb,#c300fb,#c200fc,#c000fc,#bd00fc,#ba00fc,#b600fc,#b200fc,#af00fc,#ab00fd,#a800fd,#a400fd,#a100fd,#9e00fd,#9200fd,#4d00f3,#0021dd,#0062ee,#00adfd,#00e5ff,#00f3e0,#00f1b6,#03ed7f,#05eb4e,#07e92e,#08e81c,#0ae709,#2bea00,#5ff100,#89f600,#a4f900,#b2fa00,#baf900,#c2f900,#c8f800,#cef800,#d4f800,#dbf700,#e1f700,#e7f600,#edf600,#f3f600,#faf500,#fff400,#fff100,#ffee00,#ffeb00,#ffe900,#ffe800,#ffe800,#ffe700,#ffe600,#ffe600,#ffe600,#ffe600,#ffe600,#ffe600,#ffe600,#ffe600,#ffe600,#ffe600,#ffe500,#ffe400,#ffe300,#ffe200,#ffe100,#ffdf00,#ffdd00,#ffda00,#ffd800,#ffd500,#ffd200,#ffcf00,#ffcc00,#ffc800,#ffc500,#ffc100,#ffbc00,#ffb800,#ffb300,#ffae00)}
.f75{top:150px;background:linear-gradient(90deg,#6700fe,#6f00ff,#7700ff,#7e00ff,#8500fe,#8c00fe,#9300fe,#9a00fd,#a000fd,#a600fd,#ac00fc,#b100fc,#b600fc,#ba00fc,#be00fc,#c100fc,#c300fb,#c400fb,#c500fb,#c400fb,#c200fc,#bf00fc,#bc00fc,#b900fc,#b500fc,#b200fc,#ae00fc,#ab00fd,#a800fd,#a500fd,#a200fd,#9100fd,#3802ec,#002bdf,#0071f2,#00b5fe,#00eafe,#00f3db,#00f0af,#03ed71,#07e93b,#08e81a,#0ae708,#13e700,#3aec00,#6bf200,#92f700,#aafa00,#b4f900,#bbf900,#c1f900,#c7f800,#cdf800,#d3f800,#d9f700,#dff700,#e5f700,#ebf600,#f1f600,#f8f500,#fff400,#fff100,#ffee00,#ffeb00,#ffe900,#ffe800,#ffe800,#ffe700,#ffe700,#ffe600,#ffe600,#ffe600,#ffe600,#ffe600,#ffe600,#ffe600,#ffe600,#ffe600,#ffe500,#ffe400,#ffe400,#ffe200,#ffe100,#ffdf00,#ffdd00,#ffdb00,#ffd800,#ffd500,#ffd200,#ffcf00,#ffcb00,#ffc800,#ffc400,#ffc000,#ffbc00,#ffb700,#ffb200,#ffae00)}
.f76{top:152px;background:linear-gradient(90deg,#6800fe,#7000ff,#7800ff,#7f00fe,#8600fe,#8d00fe,#9400fe,#9b00fd,#a100fd,#a700fd,#ad00fc,#b200fc,#b700fc,#bb00fc,#bf00fc,#c200fb,#c500fb,#c600fb,#c600fb,#c500fb,#c400fb,#c100fc,#bf00fc,#bc00fc,#b800fc,#b500fc,#b100fc,#ae00fc,#ab00fd,#a900fd,#a500fd,#9200fc,#3002ea,#0031e1,#007ff6,#00bffe,#00f0fc,#00f3d7,#00f0a9,#04ec63,#08e828,#0be705,#18e800,#29ea00,#4bee00,#76f400,#9af800,#adfa00,#b6f900,#bbf900,#c0f900,#c5f800,#cbf800,#d1f800,#d7f700,#ddf700,#e2f700,#e8f600,#eff600,#f6f600,#fef500,#fff200,#ffee00,#ffeb00,#ffea00,#ffe900,#ffe800,#ffe700,#ffe700,#ffe600,#ffe600,#ffe600,#ffe600,#ffe600,#ffe600,#ffe600,#ffe600,#ffe600,#ffe500,#ffe500,#ffe400,#ffe300,#ffe100,#ffdf00,#ffdd00,#ffdb00,#ffd800,#ffd500,#ffd200,#ffcf00,#ffcb00,#ffc800,#ffc400,#ffc000,#ffbb00,#ffb700,#ffb200,#ffad00)}
.f77{top:154px;background:linear-gradient(90deg,#6900fe,#7100ff,#7800ff,#8000fe,#8700fe,#8e00fe,#9500fd,#9c00fd,#a200fd,#a800fd,#ae00fc,#b300fc,#b800fc,#bd00fc,#c000fc,#c400fb,#c600fb,#c700fb,#c800fb,#c700fb,#c600fb,#c400fb,#c100fc,#be00fc,#bb00fc,#b800fc,#b500fc,#b200fc,#af00fc,#ac00fc,#a900fd,#9300fc,#2b03e8,#0035e2,#0088f7,#00c8ff,#00f3f8,#00f2d3,#01f0a4,#05eb58,#09e716,#1ce800,#2feb00,#40ed00,#5df000,#82f500,#a0f900,#affa00,#b6f900,#bbf900,#bef900,#c3f900,#c8f800,#cef800,#d4f800,#daf700,#e0f700,#e5f700,#ebf600,#f2f600,#fbf500,#fff300,#ffef00,#ffec00,#ffea00,#ffe900,#ffe800,#ffe700,#ffe700,#ffe700,#ffe600,#ffe600,#ffe600,#ffe600,#ffe600,#ffe600,#ffe600,#ffe600,#ffe500,#ffe500,#ffe400,#ffe300,#ffe100,#ffdf00,#ffdd00,#ffdb00,#ffd800,#ffd500,#ffd200,#ffcf00,#ffcb00,#ffc700,#ffc300,#ffbf00,#ffbb00,#ffb600,#ffb100,#ffac00)}
.f78{top:156px;background:linear-gradient(90deg,#6a00fe,#7200ff,#7900ff,#8000fe,#8800fe,#8f00fe,#9600fd,#9d00fd,#a300fd,#a900fd,#af00fc,#b500fc,#ba00fc,#be00fc,#c200fc,#c500fb,#c700fb,#c900fb,#c900fb,#c900fb,#c700fb,#c600fb,#c300fb,#c000fc,#be00fc,#bb00fc,#b800fc,#b500fc,#b200fc,#b000fc,#ad00fc,#9400fc,#2604e6,#0038e2,#008cf8,#00ccff,#00f4f6,#00f2d3,#01f0a5,#05eb52,#0ce709,#2eeb00,#42ed00,#54ef00,#6ef200,#8cf600,#a5f900,#b1fa00,#b6f900,#b9f900,#bcf900,#c0f900,#c6f800,#ccf800,#d2f800,#d7f700,#dcf700,#e2f700,#e7f600,#eef600,#f7f500,#fff400,#fff000,#ffed00,#ffeb00,#ffea00,#ffe900,#ffe800,#ffe700,#ffe700,#ffe700,#ffe700,#ffe700,#ffe700,#ffe700,#ffe700,#ffe600,#ffe600,#ffe600,#ffe500,#ffe400,#ffe300,#ffe100,#ffe000,#ffdd00,#ffdb00,#ffd800,#ffd500,#ffd200,#ffce00,#ffcb00,#ffc700,#ffc300,#ffbf00,#ffba00,#ffb500,#ffb000,#ffab00)}
.f79{top:158px;background:linear-gradient(90deg,#6b00fe,#7300ff,#7a00ff,#8100fe,#8800fe,#9000fe,#9700fd,#9e00fd,#a400fd,#aa00fd,#b000fc,#b600fc,#bb00fc,#bf00fc,#c300fb,#c600fb,#c800fb,#ca00fb,#ca00fb,#ca00fb,#c900fb,#c700fb,#c500fb,#c300fb,#c000fc,#bd00fc,#bb00fc,#b800fc,#b600fc,#b400fc,#b000fc,#9500fb,#2105e4,#0038e3,#008af9,#00c8ff,#00f3f9,#00f3d9,#00f0ab,#05eb53,#12e705,#3bec00,#50ef00,#63f100,#7af400,#94f700,#a8fa00,#b1fa00,#b6f900,#b7f900,#b9f900,#bef900,#c3f900,#c9f800,#cff800,#d4f800,#d9f700,#def700,#e3f700,#eaf600,#f2f600,#fcf500,#fff100,#ffee00,#ffec00,#ffeb00,#ffea00,#ffe900,#ffe800,#ffe700,#ffe700,#ffe700,#ffe700,#ffe700,#ffe700,#ffe700,#ffe700,#ffe600,#ffe600,#ffe500,#ffe400,#ffe300,#ffe200,#ffe000,#ffde00,#ffdb00,#ffd800,#ffd500,#ffd200,#ffce00,#ffcb00,#ffc700,#ffc300,#ffbe00,#ffba00,#ffb500,#ffb000,#ffaa00)}
.f80{top:160px;background:linear-gradient(90deg,#6c00fe,#7300ff,#7b00ff,#8200fe,#8900fe,#9000fe,#9800fd,#9f00fd,#a500fd,#ab00fd,#b100fc,#b700fc,#bc00fc,#c000fc,#c400fb,#c700fb,#c900fb,#cb00fb,#cc00fb,#cb00fb,#cb00fb,#c900fb,#c700fb,#c500fb,#c300fb,#c000fc,#be00fc,#bb00fc,#b900fc,#b700fc,#b400fc,#9500fb,#1e06e3,#0036e4,#0080f8,#00bcfe,#00ebfe,#00f3e3,#00f1b6,#04ec60,#12e706,#3eec00,#56f000,#6cf200,#83f500,#99f800,#aafa00,#b1fa00,#b4f900,#b5f900,#b7f900,#bbf900,#c0f900,#c6f800,#ccf800,#d1f800,#d5f700,#daf700,#dff700,#e5f700,#edf600,#f7f500,#fff400,#fff000,#ffee00,#ffec00,#ffeb00,#ffea00,#ffe900,#ffe800,#ffe700,#ffe700,#ffe700,#ffe700,#ffe700,#ffe700,#ffe700,#ffe600,#ffe600,#ffe500,#ffe500,#ffe300,#ffe200,#ffe000,#ffde00,#ffdb00,#ffd800,#ffd500,#ffd200,#ffce00,#ffca00,#ffc700,#ffc200,#ffbe00,#ffb900,#ffb400,#ffaf00,#ffaa00)}
.f81{top:162px;background:linear-gradient(90deg,#6d00ff,#7400ff,#7b00ff,#8300fe,#8a00fe,#9100fe,#9800fd,#9f00fd,#a600fd,#ac00fc,#b200fc,#b800fc,#bd00fc,#c100fc,#c500fb,#c800fb,#ca00fb,#cc00fb,#cd00fb,#cd00fb,#cc00fb,#cb00fb,#c900fb,#c700fb,#c500fb,#c300fb,#c000fc,#be00fc,#bc00fc,#bb00fc,#b700fc,#9900fb,#2404e5,#002ce0,#006bf2,#00abfd,#00dbff,#00f4ef,#00f2c4,#03ed7b,#0be711,#33eb00,#52ef00,#6df200,#86f500,#9bf800,#a9fa00,#affa00,#b2fa00,#b3f900,#b4f900,#b8f900,#bef900,#c3f900,#c9f800,#cdf800,#d2f800,#d5f700,#daf700,#dff700,#e6f600,#f0f600,#fcf500,#fff200,#fff000,#ffee00,#ffec00,#ffeb00,#ffe900,#ffe800,#ffe800,#ffe700,#ffe700,#ffe700,#ffe700,#ffe700,#ffe700,#ffe700,#ffe600,#ffe600,#ffe500,#ffe400,#ffe200,#ffe000,#ffde00,#ffdb00,#ffd800,#ffd500,#ffd200,#ffce00,#ffca00,#ffc600,#ffc200,#ffbd00,#ffb800,#ffb300,#ffae00,#ffa900)}
.f82{top:164px;background:linear-gradient(90deg,#6d00ff,#7500ff,#7c00ff,#8300fe,#8b00fe,#9200fe,#9900fd,#a000fd,#a700fd,#ad00fc,#b300fc,#b900fc,#bd00fc,#c200fc,#c600fb,#c900fb,#cb00fb,#cd00fb,#ce00fb,#ce00fb,#cd00fb,#cc00fb,#cb00fb,#c900fb,#c700fb,#c500fb,#c300fb,#c100fc,#c000fc,#be00fc,#bc00fc,#a500fb,#4c00ef,#001edc,#0052ea,#0098fa,#00cbff,#00f2f9,#00f3d5,#01efa1,#07e939,#19e801,#42ed00,#66f100,#83f500,#98f800,#a6fa00,#adfa00,#affa00,#b0fa00,#b2fa00,#b5f900,#bbf900,#c0f900,#c6f800,#caf800,#cef800,#d1f800,#d5f700,#d9f700,#dff700,#e9f600,#f5f600,#fef500,#fff200,#ffef00,#ffed00,#ffec00,#ffea00,#ffe900,#ffe800,#ffe800,#ffe800,#ffe800,#ffe800,#ffe700,#ffe700,#ffe700,#ffe700,#ffe600,#ffe500,#ffe400,#ffe200,#ffe100,#ffde00,#ffdc00,#ffd900,#ffd500,#ffd200,#ffce00,#ffca00,#ffc600,#ffc200,#ffbd00,#ffb800,#ffb300,#ffad00,#ffa800)}
.f83{top:166px;background:linear-gradient(90deg,#6e00ff,#7500ff,#7c00ff,#8400fe,#8b00fe,#9300fe,#9a00fd,#a100fd,#a800fd,#ae00fc,#b400fc,#b900fc,#be00fc,#c300fb,#c600fb,#c900fb,#cc00fb,#ce00fb,#cf00fb,#cf00fb,#cf00fb,#ce00fb,#cd00fb,#cb00fb,#c900fb,#c700fb,#c600fb,#c400fb,#c300fb,#c200fc,#c000fc,#b400fc,#7b00f7,#0d0dde,#003de4,#0082f5,#00bdfe,#00ebfe,#00f3e5,#00f1c0,#04ec6b,#09e719,#29ea00,#57f000,#7af400,#91f700,#9ff900,#a8fa00,#abfa00,#acfa00,#affa00,#b3f900,#b8f900,#bdf900,#c2f900,#c7f800,#caf800,#cdf800,#d0f800,#d3f800,#d9f700,#e2f700,#edf600,#f8f500,#fff400,#fff100,#ffef00,#ffed00,#ffeb00,#ffea00,#ffe900,#ffe800,#ffe800,#ffe800,#ffe800,#ffe800,#ffe700,#ffe700,#ffe700,#ffe600,#ffe500,#ffe400,#ffe300,#ffe100,#ffde00,#ffdc00,#ffd900,#ffd500,#ffd200,#ffce00,#ffca00,#ffc600,#ffc100,#ffbc00,#ffb700,#ffb200,#ffac00,#ffa700)}
.f84{top:168px;background:linear-gradient(90deg,#6f00ff,#7600ff,#7d00ff,#8400fe,#8c00fe,#9300fe,#9b00fd,#a200fd,#a800fd,#af00fc,#b500fc,#ba00fc,#bf00fc,#c300fb,#c700fb,#ca00fb,#cd00fb,#ce00fb,#cf00fb,#d000fb,#d000fb,#cf00fb,#ce00fb,#cd00fb,#cb00fb,#ca00fb,#c800fb,#c700fb,#c600fb,#c500fb,#c400fb,#bf00fb,#9d00fa,#3302e9,#002cdf,#006bee,#00b0fc,#00e0ff,#00f4f1,#00f2d2,#01ef97,#06ea45,#0fe708,#42ed00,#6bf200,#84f500,#95f700,#9ef900,#a3f900,#a7fa00,#abfa00,#b0fa00,#b5f900,#baf900,#bff900,#c3f900,#c6f800,#c9f800,#cbf800,#cef800,#d2f800,#dbf700,#e6f600,#f2f600,#fbf500,#fff400,#fff100,#ffef00,#ffec00,#ffeb00,#ffe900,#ffe900,#ffe800,#ffe800,#ffe800,#ffe800,#ffe800,#ffe700,#ffe700,#ffe700,#ffe600,#ffe500,#ffe300,#ffe100,#ffdf00,#ffdc00,#ffd900,#ffd500,#ffd200,#ffce00,#ffca00,#ffc500,#ffc100,#ffbc00,#ffb600,#ffb100,#ffac00,#ffa600)}
.f85{top:170px;background:linear-gradient(90deg,#7000ff,#7600ff,#7e00ff,#8500fe,#8c00fe,#9400fe,#9b00fd,#a200fd,#a900fd,#af00fc,#b500fc,#bb00fc,#c000fc,#c400fb,#c800fb,#cb00fb,#cd00fb,#cf00fb,#d000fb,#d100fb,#d100fb,#d000fb,#d000fb,#ce00fb,#cd00fb,#cc00fb,#cb00fb,#c900fb,#c900fb,#c800fb,#c800fb,#c600fb,#b400fb,#6700f4,#0319dd,#0054e7,#00a1f8,#00d5fe,#00f4f9,#00f3de,#00f1b5,#03ed73,#07e92c,#25e900,#55ef00,#72f300,#86f600,#92f700,#98f800,#9ef900,#a5f900,#acfa00,#b1fa00,#b7f900,#bcf900,#c0f900,#c3f900,#c5f800,#c7f800,#c9f800,#ccf800,#d4f800,#e0f700,#ebf600,#f5f600,#fdf500,#fff300,#fff000,#ffee00,#ffec00,#ffea00,#ffe900,#ffe900,#ffe800,#ffe800,#ffe800,#ffe800,#ffe800,#ffe700,#ffe700,#ffe600,#ffe500,#ffe300,#ffe100,#ffdf00,#ffdc00,#ffd900,#ffd500,#ffd100,#ffcd00,#ffc900,#ffc500,#ffc000,#ffbb00,#ffb600,#ffb000,#ffab00,#ffa500)}
.f86{top:172px;background:linear-gradient(90deg,#7000ff,#7700ff,#7e00ff,#8600fe,#8d00fe,#9500fe,#9c00fd,#a300fd,#aa00fd,#b000fc,#b600fc,#bb00fc,#c000fc,#c400fb,#c800fb,#cb00fb,#ce00fb,#d000fb,#d100fb,#d200fb,#d200fb,#d200fb,#d100fb,#d000fb,#cf00fb,#ce00fb,#cd00fb,#cc00fb,#cb00fb,#cb00fb,#cb00fb,#ca00fb,#c200fb,#9300f9,#1b07e2,#003fe2,#008cf2,#00cbfc,#00f1fd,#00f4e8,#00f2c8,#01ef9f,#05eb5d,#0ce70f,#36eb00,#5af000,#74f300,#84f500,#8cf600,#94f700,#9df800,#a6f900,#adfa00,#b3f900,#b9f900,#bdf900,#c0f900,#c2f900,#c3f900,#c5f800,#c8f800,#d0f800,#dbf700,#e6f600,#eff600,#f8f500,#fef500,#fff200,#ffef00,#ffed00,#ffeb00,#ffe900,#ffe900,#ffe900,#ffe800,#ffe800,#ffe800,#ffe800,#ffe800,#ffe700,#ffe600,#ffe500,#ffe400,#ffe200,#ffdf00,#ffdc00,#ffd900,#ffd500,#ffd100,#ffcd00,#ffc900,#ffc400,#ffc000,#ffba00,#ffb500,#ffb000,#ffaa00,#ffa400)}
.f87{top:174px;background:linear-gradient(90deg,#7100ff,#7700ff,#7f00fe,#8600fe,#8e00fe,#9500fd,#9d00fd,#a400fd,#aa00fd,#b100fc,#b700fc,#bc00fc,#c100fc,#c500fb,#c900fb,#cc00fb,#ce00fb,#d000fb,#d200fb,#d200fb,#d300fb,#d300fb,#d200fb,#d200fb,#d100fb,#d000fb,#cf00fb,#ce00fb,#ce00fb,#ce00fb,#ce00fb,#ce00fb,#cb00fb,#b000fa,#4e01ef,#002bdf,#006fe9,#00b9f8,#00e7fe,#00f4f3,#00f3d9,#00f1be,#01ef93,#06ea41,#12e705,#3cec00,#5ff100,#73f300,#7ef400,#88f600,#93f700,#9df800,#a8fa00,#affa00,#b5f900,#b9f900,#bdf900,#bff900,#c0f900,#c2f900,#c5f800,#ccf800,#d6f700,#e0f700,#eaf600,#f3f600,#fbf500,#fff400,#fff100,#ffee00,#ffeb00,#ffea00,#ffe900,#ffe900,#ffe800,#ffe800,#ffe800,#ffe800,#ffe800,#ffe700,#ffe700,#ffe500,#ffe400,#ffe200,#ffdf00,#ffdc00,#ffd900,#ffd500,#ffd100,#ffcd00,#ffc900,#ffc400,#ffbf00,#ffba00,#ffb400,#ffaf00,#ffa900,#ffa300)}
.f88{top:176px;background:linear-gradient(90deg,#7200ff,#7800ff,#7f00fe,#8700fe,#8e00fe,#9600fd,#9d00fd,#a400fd,#ab00fd,#b100fc,#b700fc,#bc00fc,#c100fc,#c500fb,#c900fb,#cc00fb,#cf00fb,#d100fb,#d200fb,#d300fb,#d400fb,#d400fb,#d300fb,#d300fb,#d200fb,#d200fb,#d100fb,#d100fb,#d000fb,#d000fb,#d100fb,#d100fb,#d100fb,#c400fb,#8200f7,#0912df,#004fe2,#0099ef,#00d7fb,#00f2fc,#00f4e9,#00f2d4,#00f1bc,#03ed7a,#07e92c,#1ae801,#46ed00,#62f100,#6ff300,#7bf400,#87f600,#93f700,#a0f900,#abfa00,#b1fa00,#b6f900,#baf900,#bcf900,#bdf900,#bff900,#c3f900,#c9f800,#d2f800,#dcf700,#e5f700,#edf600,#f5f600,#fdf500,#fff200,#ffef00,#ffec00,#ffea00,#ffe900,#ffe900,#ffe900,#ffe900,#ffe800,#ffe800,#ffe800,#ffe800,#ffe700,#ffe600,#ffe400,#ffe200,#ffe000,#ffdd00,#ffd900,#ffd500,#ffd100,#ffcd00,#ffc800,#ffc400,#ffbf00,#ffb900,#ffb300,#ffae00,#ffa800,#ffa200)}
.f89{top:178px;background:linear-gradient(90deg,#7300ff,#7900ff,#8000fe,#8700fe,#8f00fe,#9600fd,#9e00fd,#a500fd,#ac00fc,#b200fc,#b800fc,#bd00fc,#c200fc,#c600fb,#c900fb,#cc00fb,#cf00fb,#d100fb,#d300fb,#d400fb,#d400fb,#d500fb,#d400fb,#d400fb,#d400fb,#d300fb,#d300fb,#d300fb,#d300fb,#d300fb,#d300fb,#d400fb,#d500fb,#d000fb,#a900f9,#3c01eb,#002fe0,#0071e6,#00b9f5,#00e5fd,#00f4f7,#00f4e6,#00f2d3,#00f0a8,#05eb5d,#09e81a,#2aea00,#50ef00,#60f100,#6cf200,#7af400,#88f600,#96f800,#a4f900,#adfa00,#b3f900,#b7f900,#b9f900,#bbf900,#bdf900,#c1f900,#c7f800,#cff800,#d7f700,#e0f700,#e8f600,#f0f600,#f8f500,#fff400,#fff000,#ffed00,#ffeb00,#ffea00,#ffe900,#ffe900,#ffe900,#ffe900,#ffe900,#ffe800,#ffe800,#ffe700,#ffe600,#ffe400,#ffe200,#ffe000,#ffdd00,#ffd900,#ffd500,#ffd100,#ffcd00,#ffc800,#ffc300,#ffbe00,#ffb800,#ffb300,#ffad00,#ffa700,#ffa100)}
.f90{top:180px;background:linear-gradient(90deg,#7400ff,#7a00ff,#8100fe,#8800fe,#9000fe,#9700fd,#9e00fd,#a600fd,#ac00fc,#b300fc,#b800fc,#bd00fc,#c200fc,#c600fb,#ca00fb,#cd00fb,#cf00fb,#d100fb,#d300fb,#d400fb,#d500fb,#d500fb,#d500fb,#d500fb,#d500fb,#d500fb,#d500fb,#d500fb,#d500fb,#d500fb,#d600fb,#d700fb,#d800fb,#d700fb,#c300fa,#8300f6,#130be1,#004ce1,#0090eb,#00cff9,#00edfe,#00f4f4,#00f3e3,#00f1c2,#02ee8b,#06ea46,#10e708,#3aec00,#4cee00,#5af000,#6af200,#7af400,#8bf600,#9bf800,#a8fa00,#affa00,#b4f900,#b7f900,#b9f900,#bbf900,#bff900,#c5f800,#ccf800,#d4f800,#dbf700,#e3f700,#ebf600,#f3f600,#fcf500,#fff200,#ffee00,#ffec00,#ffea00,#ffe900,#ffe900,#ffe900,#ffe900,#ffe900,#ffe900,#ffe800,#ffe800,#ffe600,#ffe500,#ffe300,#ffe000,#ffdd00,#ffd900,#ffd500,#ffd100,#ffcc00,#ffc700,#ffc300,#ffbd00,#ffb800,#ffb200,#ffac00,#ffa600,#ffa000)}
.f91{top:182px;background:linear-gradient(90deg,#7500ff,#7b00ff,#8200fe,#8900fe,#9000fe,#9800fd,#9f00fd,#a600fd,#ad00fc,#b300fc,#b900fc,#be00fc,#c200fb,#c600fb,#ca00fb,#cd00fb,#cf00fb,#d200fb,#d300fb,#d500fb,#d500fb,#d600fb,#d600fb,#d600fb,#d600fb,#d600fb,#d600fb,#d600fb,#d700fb,#d700fb,#d800fb,#d900fa,#db00fa,#db00fa,#d400fa,#b400f9,#5b00f1,#0223df,#0066e3,#00acf2,#00dcfc,#00f2fd,#00f4f0,#00f3d5,#00f0b0,#03ed76,#07e92d,#1be800,#32eb00,#44ed00,#57f000,#6bf200,#7ef500,#91f700,#a1f900,#abfa00,#b1fa00,#b4f900,#b7f900,#baf900,#bef900,#c3f900,#c9f800,#d0f800,#d7f700,#def700,#e5f700,#edf600,#f7f500,#fff400,#fff000,#ffed00,#ffeb00,#ffea00,#ffea00,#ffea00,#ffea00,#ffe900,#ffe900,#ffe900,#ffe800,#ffe700,#ffe500,#ffe300,#ffe000,#ffdd00,#ffd900,#ffd500,#ffd100,#ffcc00,#ffc700,#ffc200,#ffbd00,#ffb700,#ffb100,#ffab00,#ffa500,#ff9f00)}
.f92{top:184px;background:linear-gradient(90deg,#7600ff,#7c00ff,#8300fe,#8a00fe,#9100fe,#9900fd,#a000fd,#a700fd,#ad00fc,#b400fc,#b900fc,#be00fc,#c300fb,#c600fb,#ca00fb,#cd00fb,#d000fb,#d200fb,#d400fb,#d500fb,#d600fb,#d700fb,#d700fb,#d700fb,#d800fb,#d800fb,#d800fb,#d800fb,#d900fb,#d900fa,#da00fa,#db00fa,#dd00fa,#de00fa,#dd00fa,#d000fa,#9d00f8,#2d04e7,#003fe1,#0082e8,#00c2f7,#00e3fe,#00f3fc,#00f4e6,#00f2c9,#00f0a6,#04ec64,#08e81e,#13e702,#2aea00,#41ed00,#59f000,#70f300,#86f500,#98f800,#a6f900,#aefa00,#b2fa00,#b5f900,#b8f900,#bcf900,#c1f900,#c6f800,#cdf800,#d3f800,#d9f700,#e0f700,#e7f600,#f1f600,#fcf500,#fff200,#ffee00,#ffec00,#ffeb00,#ffea00,#ffea00,#ffea00,#ffea00,#ffea00,#ffe900,#ffe800,#ffe700,#ffe500,#ffe300,#ffe100,#ffdd00,#ffd900,#ffd500,#ffd000,#ffcb00,#ffc600,#ffc100,#ffbc00,#ffb600,#ffb000,#ffaa00,#ffa400,#ff9e00)}
.f93{top:186px;background:linear-gradient(90deg,#7700ff,#7d00ff,#8400fe,#8b00fe,#9200fe,#9900fd,#a000fd,#a700fd,#ae00fc,#b400fc,#ba00fc,#be00fc,#c300fb,#c700fb,#ca00fb,#cd00fb,#d000fb,#d200fb,#d400fb,#d500fb,#d600fb,#d700fb,#d800fb,#d800fb,#d900fb,#d900fa,#d900fa,#da00fa,#da00fa,#db00fa,#dc00fa,#dd00fa,#df00fa,#e100fa,#e200fa,#de00fa,#c600fa,#7b00f5,#0a15e0,#005ae2,#009cef,#00cffb,#00e7ff,#00f4f5,#00f3dd,#00f2c5,#01ef9f,#05eb55,#08e821,#0fe703,#29ea00,#45ed00,#61f100,#7af400,#8ff700,#9ff900,#aafa00,#affa00,#b3f900,#b6f900,#baf900,#bff900,#c4f800,#c9f800,#cff800,#d4f800,#daf700,#e1f700,#eaf600,#f5f600,#fff400,#fff000,#ffed00,#ffec00,#ffeb00,#ffeb00,#ffeb00,#ffeb00,#ffea00,#ffea00,#ffe900,#ffe800,#ffe600,#ffe400,#ffe100,#ffdd00,#ffd900,#ffd500,#ffd000,#ffcb00,#ffc600,#ffc100,#ffbb00,#ffb500,#ffaf00,#ffa900,#ffa300,#ff9c00)}
.f94{top:188px;background:linear-gradient(90deg,#7900ff,#7e00ff,#8500fe,#8c00fe,#9300fe,#9a00fd,#a100fd,#a800fd,#ae00fc,#b400fc,#ba00fc,#bf00fc,#c300fb,#c700fb,#ca00fb,#cd00fb,#d000fb,#d200fb,#d400fb,#d500fb,#d700fb,#d800fb,#d800fb,#d900fa,#da00fa,#da00fa,#da00fa,#db00fa,#dc00fa,#dd00fa,#de00fa,#df00fa,#e100fa,#e300fa,#e300f9,#e300f9,#db00fa,#b300f9,#4801ed,#0032e0,#0072e6,#00b2f5,#00d6fd,#00eefe,#00f4ef,#00f3db,#00f1c2,#02ee87,#06ea4b,#08e820,#11e702,#2feb00,#4fef00,#6df200,#85f500,#97f800,#a4f900,#acfa00,#b1fa00,#b5f900,#b9f900,#bdf900,#c2f900,#c6f800,#cbf800,#d0f800,#d4f800,#daf700,#e3f700,#eef600,#faf500,#fff200,#ffef00,#ffed00,#ffed00,#ffec00,#ffec00,#ffeb00,#ffeb00,#ffea00,#ffe900,#ffe800,#ffe600,#ffe400,#ffe100,#ffdd00,#ffd900,#ffd400,#ffd000,#ffca00,#ffc500,#ffc000,#ffba00,#ffb400,#ffae00,#ffa800,#ffa100,#ff9b00)}
.f95{top:190px;background:linear-gradient(90deg,#7a00ff,#7f00fe,#8600fe,#8d00fe,#9400fe,#9b00fd,#a200fd,#a800fd,#af00fc,#b500fc,#ba00fc,#bf00fc,#c300fb,#c700fb,#ca00fb,#cd00fb,#d000fb,#d200fb,#d400fb,#d600fb,#d700fb,#d800fb,#d900fa,#da00fa,#da00fa,#db00fa,#dc00fa,#dc00fa,#dd00fa,#de00fa,#df00fa,#e100fa,#e200fa,#e300f9,#e100f6,#df00f3,#e100f6,#d300fa,#9100f7,#160be2,#004de1,#008bec,#00c1fa,#00defe,#00f3fc,#00f4ec,#00f2d4,#00f0ac,#03ed73,#06ea43,#09e719,#18e800,#3cec00,#5ef100,#7af400,#8ff700,#9df800,#a8fa00,#aefa00,#b2fa00,#b7f900,#bbf900,#bff900,#c4f800,#c8f800,#cbf800,#cff800,#d4f800,#dbf700,#e6f600,#f3f600,#fef500,#fff100,#ffef00,#ffee00,#ffed00,#ffed00,#ffec00,#ffeb00,#ffeb00,#ffea00,#ffe800,#ffe700,#ffe400,#ffe100,#ffdd00,#ffd900,#ffd400,#ffcf00,#ffca00,#ffc500,#ffbf00,#ffb900,#ffb300,#ffad00,#ffa600,#ffa000,#ff9800)}
.f96{top:192px;background:linear-gradient(90deg,#7c00ff,#8100fe,#8700fe,#8e00fe,#9500fe,#9c00fd,#a200fd,#a900fd,#af00fc,#b500fc,#ba00fc,#bf00fc,#c300fb,#c700fb,#ca00fb,#cd00fb,#d000fb,#d200fb,#d400fb,#d600fb,#d700fb,#d900fb,#da00fa,#da00fa,#db00fa,#dc00fa,#dd00fa,#dd00fa,#de00fa,#df00fa,#e100fa,#e200fa,#e400fa,#e200f7,#df00f3,#dd00f0,#dc00ee,#e000f7,#c100f9,#6000f1,#0225df,#0063e4,#00a1f3,#00cbfc,#00e6fe,#00f5f7,#00f3e2,#00f1c1,#01ef98,#04ec65,#07e938,#0ae70d,#27ea00,#4eef00,#6ff300,#85f500,#95f700,#a1f900,#aafa00,#affa00,#b4f900,#b9f900,#bdf900,#c1f900,#c4f800,#c7f800,#caf800,#cef800,#d4f800,#dff700,#ebf600,#f7f500,#fff400,#fff200,#fff000,#ffef00,#ffee00,#ffed00,#ffec00,#ffeb00,#ffea00,#ffe900,#ffe700,#ffe400,#ffe100,#ffdd00,#ffd900,#ffd400,#ffcf00,#ffc900,#ffc400,#ffbe00,#ffb800,#ffb200,#ffab00,#ffa500,#ff9f00,#ff9400)}
.f97{top:194px;background:linear-gradient(90deg,#7d00ff,#8200fe,#8900fe,#8f00fe,#9600fd,#9c00fd,#a300fd,#a900fd,#b000fc,#b500fc,#ba00fc,#bf00fc,#c300fb,#c600fb,#ca00fb,#cd00fb,#cf00fb,#d200fb,#d400fb,#d600fb,#d700fb,#d900fa,#da00fa,#db00fa,#dc00fa,#dd00fa,#de00fa,#de00fa,#df00fa,#e100fa,#e200fa,#e300fa,#e300f8,#e000f4,#de00f1,#db00ed,#d900ea,#db00ed,#db00f9,#a200f8,#2905e6,#0040e1,#0077e8,#00aff5,#00d6fd,#00f0fe,#00f4ee,#00f2d2,#00f0b2,#02ee86,#05eb57,#08e829,#12e702,#3cec00,#62f100,#7bf400,#8cf600,#99f800,#a4f900,#acfa00,#b1fa00,#b6f900,#baf900,#bef900,#c1f900,#c4f800,#c6f800,#c9f800,#cef800,#d8f700,#e4f700,#f0f600,#faf500,#fff400,#fff200,#fff000,#ffef00,#ffee00,#ffed00,#ffec00,#ffeb00,#ffe900,#ffe700,#ffe500,#ffe100,#ffdd00,#ffd800,#ffd300,#ffce00,#ffc900,#ffc300,#ffbd00,#ffb700,#ffb000,#ffaa00,#ffa400,#ff9e00,#ff9000)}
.f98{top:196px;background:linear-gradient(90deg,#7f00fe,#8400fe,#8a00fe,#9000fe,#9700fd,#9d00fd,#a400fd,#aa00fd,#b000fc,#b500fc,#ba00fc,#bf00fc,#c300fb,#c600fb,#ca00fb,#cd00fb,#cf00fb,#d200fb,#d400fb,#d600fb,#d800fb,#d900fa,#da00fa,#db00fa,#dc00fa,#dd00fa,#de00fa,#df00fa,#e000fa,#e200fa,#e300fa,#e300f9,#e100f6,#df00f2,#dc00ef,#da00eb,#d800e8,#d700e7,#de00f1,#ca00f9,#7500f4,#0617df,#0050e2,#0086eb,#00bef7,#00e1fd,#00f4f9,#00f3e1,#00f2c4,#00f0a5,#03ed78,#06ea48,#09e715,#29ea00,#54ef00,#6ff300,#82f500,#90f700,#9cf800,#a7fa00,#aefa00,#b3f900,#b8f900,#bbf900,#bef900,#c1f900,#c2f900,#c5f800,#caf800,#d2f800,#dcf700,#e8f600,#f3f600,#fbf500,#fff400,#fff200,#fff000,#ffef00,#ffed00,#ffec00,#ffeb00,#ffea00,#ffe800,#ffe500,#ffe100,#ffdd00,#ffd800,#ffd300,#ffcd00,#ffc800,#ffc200,#ffbc00,#ffb600,#ffaf00,#ffa900,#ffa200,#ff9c00,#ff8c00)}
.f99{top:198px;background:linear-gradient(90deg,#8100fe,#8600fe,#8b00fe,#9200fe,#9800fd,#9e00fd,#a400fd,#aa00fd,#b000fc,#b500fc,#ba00fc,#bf00fc,#c200fb,#c600fb,#c900fb,#cc00fb,#cf00fb,#d200fb,#d400fb,#d600fb,#d800fb,#d900fa,#db00fa,#dc00fa,#dd00fa,#de00fa,#df00fa,#e000fa,#e100fa,#e200fa,#e400fa,#e200f7,#e000f4,#de00f1,#db00ed,#d900ea,#d700e7,#d600e5,#d800e9,#de00f8,#af00f8,#4201ec,#0026df,#005ce3,#0096ee,#00cbf9,#00eafe,#00f4ef,#00f3d5,#00f1ba,#01ef98,#04ec69,#07e933,#14e702,#45ed00,#63f100,#76f300,#85f500,#93f700,#9ff900,#aafa00,#b0fa00,#b5f900,#b9f900,#bcf900,#bef900,#bff900,#c2f900,#c6f800,#cdf800,#d6f700,#e1f700,#ecf600,#f4f600,#fcf500,#fff400,#fff200,#fff000,#ffee00,#ffed00,#ffeb00,#ffea00,#ffe800,#ffe500,#ffe100,#ffdd00,#ffd800,#ffd200,#ffcd00,#ffc700,#ffc100,#ffbb00,#ffb400,#ffae00,#ffa700,#ffa100,#ff9900,#ff8800)}
.f100{top:200px;background:linear-gradient(90deg,#8200fe,#8700fe,#8d00fe,#9300fe,#9900fd,#9f00fd,#a500fd,#ab00fd,#b000fc,#b500fc,#ba00fc,#be00fc,#c200fb,#c600fb,#c900fb,#cc00fb,#cf00fb,#d100fb,#d400fb,#d600fb,#d800fb,#d900fa,#db00fa,#dc00fa,#dd00fa,#df00fa,#e000fa,#e100fa,#e200fa,#e300fa,#e300f9,#e100f6,#df00f3,#dd00f0,#db00ec,#d900e9,#d700e6,#d600e5,#d600e5,#dd00ef,#d100fa,#9200f7,#2b04e7,#0034e0,#006ae4,#00a4f1,#00d6fb,#00f2fb,#00f3e5,#00f2cc,#00f1b3,#02ee8b,#05eb56,#09e716,#32eb00,#54ef00,#67f200,#78f400,#87f600,#95f700,#a3f900,#acfa00,#b2fa00,#b6f900,#b9f900,#bbf900,#bdf900,#bff900,#c2f900,#c8f800,#d0f800,#dbf700,#e5f700,#eef600,#f6f600,#fdf500,#fff300,#fff100,#ffef00,#ffed00,#ffec00,#ffea00,#ffe800,#ffe500,#ffe100,#ffdc00,#ffd700,#ffd100,#ffcc00,#ffc600,#ffc000,#ffba00,#ffb300,#ffad00,#ffa600,#ff9f00,#ff9500,#ff8300)}
.f101{top:202px;background:linear-gradient(90deg,#8400fe,#8900fe,#8e00fe,#9400fe,#9a00fd,#a000fd,#a500fd,#ab00fd,#b000fc,#b500fc,#ba00fc,#be00fc,#c200fc,#c500fb,#c900fb,#cc00fb,#cf00fb,#d100fb,#d400fb,#d600fb,#d800fb,#da00fa,#db00fa,#dd00fa,#de00fa,#df00fa,#e000fa,#e100fa,#e300fa,#e400fa,#e200f8,#e000f5,#de00f2,#dc00ef,#da00ec,#d800e9,#d600e6,#d500e4,#d500e4,#d800e8,#df00f7,#c400f9,#7f00f5,#170ae2,#0041e1,#0077e6,#00b3f3,#00e2fc,#00f4f4,#00f3dd,#00f2c6,#00f0ac,#03ed7d,#07e93b,#1be801,#40ed00,#54ef00,#67f200,#79f400,#8af600,#9af800,#a7fa00,#affa00,#b3f900,#b7f900,#b9f900,#bbf900,#bdf900,#c0f900,#c5f800,#ccf800,#d5f700,#dff700,#e9f600,#f1f600,#f9f500,#fff400,#fff200,#ffef00,#ffed00,#ffec00,#ffea00,#ffe800,#ffe500,#ffe100,#ffdc00,#ffd600,#ffd100,#ffcb00,#ffc500,#ffbf00,#ffb800,#ffb200,#ffab00,#ffa500,#ff9e00,#ff9100,#ff7f00)}
.f102{top:204px;background:linear-gradient(90deg,#8600fe,#8a00fe,#9000fe,#9500fd,#9b00fd,#a100fd,#a600fd,#ab00fd,#b100fc,#b500fc,#ba00fc,#be00fc,#c200fc,#c500fb,#c800fb,#cb00fb,#ce00fb,#d100fb,#d400fb,#d600fb,#d800fb,#da00fa,#db00fa,#dd00fa,#de00fa,#df00fa,#e100fa,#e200fa,#e300fa,#e300f9,#e200f7,#e000f4,#de00f1,#dc00ee,#da00eb,#d800e8,#d600e6,#d500e4,#d500e4,#d600e5,#db00ed,#dd00f9,#b900f9,#6a00f3,#0a13e0,#004de1,#0085e9,#00c3f6,#00ecfd,#00f4ee,#00f3d8,#00f1c2,#00f0a6,#04ec6a,#0ae818,#22e900,#3cec00,#53ef00,#69f200,#7df400,#90f700,#9ff900,#abfa00,#b0fa00,#b4f900,#b7f900,#b9f900,#bbf900,#bef900,#c2f900,#c8f800,#d1f800,#daf700,#e3f700,#ecf600,#f4f600,#fcf500,#fff300,#fff000,#ffed00,#ffec00,#ffea00,#ffe800,#ffe400,#ffe000,#ffdb00,#ffd600,#ffd000,#ffca00,#ffc400,#ffbe00,#ffb700,#ffb000,#ffaa00,#ffa300,#ff9c00,#ff8c00,#ff7a00)}
.f103{top:206px;background:linear-gradient(90deg,#8800fe,#8c00fe,#9100fe,#9700fd,#9c00fd,#a100fd,#a700fd,#ac00fc,#b100fc,#b500fc,#ba00fc,#be00fc,#c100fc,#c500fb,#c800fb,#cb00fb,#ce00fb,#d100fb,#d300fb,#d600fb,#d800fb,#da00fa,#db00fa,#dd00fa,#de00fa,#e000fa,#e100fa,#e200fa,#e400fa,#e300f8,#e100f6,#df00f3,#dd00f0,#db00ed,#d900eb,#d800e8,#d600e6,#d500e4,#d400e3,#d500e4,#d700e6,#dd00f0,#d800fa,#ac00f8,#5201ef,#031fdf,#0059e2,#0098ed,#00d4f9,#00f2fb,#00f4ea,#00f3d6,#00f1c2,#01ef9e,#05eb4e,#0ae711,#1fe900,#3cec00,#56ef00,#6ff300,#85f500,#97f800,#a5f900,#adfa00,#b2fa00,#b5f900,#b7f900,#b9f900,#bcf900,#c0f900,#c6f800,#cdf800,#d6f700,#def700,#e7f600,#eff600,#f9f500,#fff400,#fff000,#ffed00,#ffeb00,#ffea00,#ffe700,#ffe400,#ffdf00,#ffda00,#ffd500,#ffcf00,#ffc900,#ffc300,#ffbc00,#ffb600,#ffaf00,#ffa800,#ffa100,#ff9900,#ff8800,#ff7500)}
.f104{top:208px;background:linear-gradient(90deg,#8900fe,#8e00fe,#9300fe,#9800fd,#9d00fd,#a200fd,#a700fd,#ac00fc,#b100fc,#b500fc,#ba00fc,#bd00fc,#c100fc,#c400fb,#c800fb,#cb00fb,#ce00fb,#d100fb,#d300fb,#d600fb,#d800fb,#da00fa,#dc00fa,#dd00fa,#df00fa,#e000fa,#e100fa,#e300fa,#e400fa,#e200f8,#e100f5,#df00f2,#dd00f0,#db00ed,#d900ea,#d800e8,#d600e5,#d500e4,#d400e2,#d400e2,#d500e3,#d700e7,#df00f3,#d200fa,#9e00f8,#3a02ea,#002de0,#006be4,#00adf2,#00dffc,#00f3fa,#00f4e9,#00f3d8,#00f1c2,#02ee84,#06ea3d,#0ae70e,#21e900,#41ed00,#5ef100,#78f400,#8ef600,#9ef800,#a9fa00,#affa00,#b3f900,#b6f900,#b8f900,#bbf900,#bef900,#c3f900,#caf800,#d1f800,#d9f700,#e2f700,#ebf600,#f5f600,#fef400,#fff000,#ffed00,#ffeb00,#ffe900,#ffe700,#ffe300,#ffdf00,#ffd900,#ffd400,#ffce00,#ffc800,#ffc200,#ffbb00,#ffb400,#ffad00,#ffa600,#ffa000,#ff9500,#ff8300,#ff7100)}
.f105{top:210px;background:linear-gradient(90deg,#8b00fe,#8f00fe,#9400fe,#9900fd,#9e00fd,#a300fd,#a800fd,#ad00fc,#b100fc,#b600fc,#b900fc,#bd00fc,#c100fc,#c400fb,#c700fb,#cb00fb,#ce00fb,#d000fb,#d300fb,#d600fb,#d800fb,#da00fa,#dc00fa,#dd00fa,#df00fa,#e000fa,#e200fa,#e300fa,#e400f9,#e200f7,#e000f4,#de00f2,#dd00ef,#db00ec,#d900ea,#d700e8,#d600e5,#d400e3,#d300e1,#d200e0,#d300e1,#d400e3,#d800e8,#e000f6,#ca00fa,#8d00f7,#2007e4,#0043e1,#0080e8,#00c0f6,#00e5fd,#00f4f9,#00f4ea,#00f3d6,#00f0ac,#04ec68,#07e931,#0ce708,#2aea00,#4cee00,#6bf200,#84f500,#96f800,#a3f900,#acfa00,#b0fa00,#b4f900,#b7f900,#baf900,#bdf900,#c1f900,#c7f800,#cdf800,#d5f700,#ddf700,#e6f600,#f1f600,#fdf500,#fff100,#ffed00,#ffeb00,#ffe900,#ffe600,#ffe200,#ffde00,#ffd800,#ffd300,#ffcd00,#ffc700,#ffc000,#ffba00,#ffb300,#ffac00,#ffa500,#ff9e00,#ff9100,#ff7e00,#ff6c00)}
.f106{top:212px;background:linear-gradient(90deg,#8d00fe,#9100fe,#9600fd,#9b00fd,#9f00fd,#a400fd,#a900fd,#ad00fc,#b200fc,#b600fc,#b900fc,#bd00fc,#c000fc,#c400fb,#c700fb,#ca00fb,#cd00fb,#d000fb,#d300fb,#d500fb,#d800fb,#da00fa,#dc00fa,#de00fa,#df00fa,#e100fa,#e200fa,#e300fa,#e300f9,#e100f6,#e000f4,#de00f1,#dc00ef,#da00ec,#d900ea,#d700e7,#d600e5,#d400e2,#d200e0,#d100de,#d100de,#d200df,#d400e2,#d900ea,#df00f8,#c100f9,#7000f4,#0816df,#0056e2,#0095ed,#00cdfa,#00eafe,#00f4f7,#00f3e4,#00f1c2,#02ee8f,#05eb55,#08e824,#13e702,#38ec00,#5cf000,#79f400,#8df600,#9df800,#a8fa00,#aefa00,#b2fa00,#b5f900,#b8f900,#bcf900,#bff900,#c4f800,#caf800,#d0f800,#d8f700,#e1f700,#edf600,#fbf500,#fff100,#ffed00,#ffeb00,#ffe800,#ffe500,#ffe100,#ffdd00,#ffd700,#ffd100,#ffcb00,#ffc500,#ffbf00,#ffb800,#ffb100,#ffaa00,#ffa300,#ff9c00,#ff8c00,#ff7900,#ff6700)}
.f107{top:214px;background:linear-gradient(90deg,#8f00fe,#9300fe,#9700fd,#9c00fd,#a100fd,#a500fd,#aa00fd,#ae00fc,#b200fc,#b600fc,#ba00fc,#bd00fc,#c000fc,#c300fb,#c700fb,#ca00fb,#cd00fb,#d000fb,#d300fb,#d500fb,#d800fb,#da00fa,#dc00fa,#de00fa,#df00fa,#e100fa,#e200fa,#e400fa,#e300f8,#e100f6,#df00f3,#de00f1,#dc00ee,#da00ec,#d900e9,#d700e7,#d500e4,#d300e2,#d100de,#cf00dc,#cf00db,#cf00db,#d000dd,#d300e2,#da00ec,#db00f9,#ae00f8,#4701ed,#002ce0,#006ae4,#00a9f2,#00d7fc,#00f0fe,#00f4ef,#00f2d2,#00f0ad,#03ed77,#06ea44,#09e714,#23e900,#4cee00,#6df200,#84f500,#95f700,#a2f900,#abfa00,#b0fa00,#b3f900,#b7f900,#baf900,#bef900,#c2f900,#c7f800,#ccf800,#d3f800,#dcf700,#e8f600,#f7f500,#fff200,#ffee00,#ffea00,#ffe800,#ffe400,#ffe000,#ffdc00,#ffd600,#ffd000,#ffca00,#ffc400,#ffbd00,#ffb600,#ffaf00,#ffa800,#ffa100,#ff9900,#ff8700,#ff7400,#ff6200)}
.f108{top:216px;background:linear-gradient(90deg,#9100fe,#9500fe,#9900fd,#9d00fd,#a200fd,#a600fd,#ab00fd,#af00fc,#b300fc,#b600fc,#ba00fc,#bd00fc,#c000fc,#c300fb,#c700fb,#ca00fb,#cd00fb,#d000fb,#d300fb,#d500fb,#d800fb,#da00fa,#dc00fa,#de00fa,#df00fa,#e100fa,#e200fa,#e400fa,#e300f8,#e100f5,#df00f3,#dd00f0,#dc00ee,#da00eb,#d800e8,#d600e6,#d500e4,#d200e0,#d000dc,#ce00d9,#cc00d7,#cc00d7,#cd00d8,#cf00db,#d300e1,#dc00ee,#d300fa,#9400f7,#2007e4,#0042e1,#007ee8,#00bcf6,#00e1fd,#00f4fa,#00f3e0,#00f1c0,#01ef98,#04ec64,#07e932,#10e705,#3bec00,#61f100,#7af400,#8df600,#9bf800,#a6fa00,#adfa00,#b1fa00,#b5f900,#b9f900,#bcf900,#c0f900,#c4f800,#c8f800,#cff800,#d7f700,#e3f700,#f3f600,#fff300,#ffee00,#ffeb00,#ffe700,#ffe400,#ffe000,#ffda00,#ffd500,#ffcf00,#ffc900,#ffc300,#ffbc00,#ffb500,#ffae00,#ffa700,#ffa000,#ff9500,#ff8200,#ff6f00,#ff5d00)}
.f109{top:218px;background:linear-gradient(90deg,#9300fe,#9600fd,#9b00fd,#9f00fd,#a300fd,#a700fd,#ac00fc,#af00fc,#b300fc,#b700fc,#ba00fc,#bd00fc,#c000fc,#c300fb,#c700fb,#ca00fb,#cd00fb,#d000fb,#d300fb,#d500fb,#d800fb,#da00fa,#dc00fa,#de00fa,#e000fa,#e100fa,#e300fa,#e400fa,#e200f7,#e100f5,#df00f2,#dd00f0,#db00ed,#d900ea,#d800e8,#d600e5,#d400e2,#d100de,#ce00da,#cb00d6,#c900d3,#c900d2,#c900d3,#cb00d6,#ce00da,#d300e1,#de00f3,#c600f9,#7100f3,#0716df,#0056e2,#0094ed,#00ccfa,#00eafe,#00f4ee,#00f2d1,#00f0b2,#02ee85,#05eb51,#08e81a,#27ea00,#54ef00,#6ff300,#84f500,#94f700,#a0f900,#a9fa00,#affa00,#b4f900,#b7f900,#baf900,#bef900,#c1f900,#c5f800,#caf800,#d2f800,#dff700,#eff600,#fef400,#ffef00,#ffeb00,#ffe700,#ffe300,#ffdf00,#ffd900,#ffd400,#ffce00,#ffc800,#ffc100,#ffba00,#ffb300,#ffac00,#ffa500,#ff9e00,#ff9000,#ff7d00,#ff6a00,#ff5800)}
.f110{top:220px;background:linear-gradient(90deg,#9500fe,#9800fd,#9c00fd,#a100fd,#a500fd,#a900fd,#ac00fc,#b000fc,#b400fc,#b700fc,#ba00fc,#bd00fc,#c000fc,#c300fb,#c700fb,#ca00fb,#cd00fb,#d000fb,#d300fb,#d500fb,#d800fb,#da00fa,#dc00fa,#de00fa,#e000fa,#e100fa,#e300fa,#e400fa,#e200f7,#e000f5,#df00f2,#dd00ef,#db00ed,#d900ea,#d700e7,#d500e4,#d200e0,#cf00dc,#cc00d7,#c900d2,#c700cf,#c500cd,#c500cd,#c700cf,#ca00d3,#cd00d8,#d300e2,#dd00f6,#b200f8,#4801ec,#002de0,#006ae4,#00a9f2,#00d9fc,#00f3fa,#00f3e0,#00f2c4,#00f0a4,#03ed72,#07e939,#14e703,#46ed00,#65f100,#7af400,#8bf600,#98f800,#a4f900,#adfa00,#b2fa00,#b6f900,#b9f900,#bcf900,#bff900,#c2f900,#c7f800,#cef800,#daf700,#ebf600,#fcf500,#fff000,#ffeb00,#ffe700,#ffe300,#ffde00,#ffd800,#ffd200,#ffcc00,#ffc600,#ffc000,#ffb900,#ffb100,#ffaa00,#ffa300,#ff9c00,#ff8b00,#ff7800,#ff6500,#ff5200)}
.f111{top:222px;background:linear-gradient(90deg,#9700fd,#9a00fd,#9e00fd,#a200fd,#a600fd,#aa00fd,#ae00fc,#b100fc,#b400fc,#b800fc,#bb00fc,#be00fc,#c000fc,#c300fb,#c700fb,#ca00fb,#cd00fb,#d000fb,#d300fb,#d500fb,#d800fb,#da00fa,#dc00fa,#de00fa,#e000fa,#e200fa,#e300fa,#e400f9,#e200f7,#e000f4,#de00f2,#dc00ef,#da00ec,#d800e9,#d600e6,#d400e2,#d100de,#ce00d9,#ca00d3,#c600ce,#c300ca,#c200c8,#c100c7,#c300c9,#c500cc,#c800d1,#cc00d7,#d500e4,#d700f8,#9700f7,#2007e4,#0043e1,#007fe9,#00bdf7,#00e7fd,#00f4ef,#00f3d5,#00f1ba,#01ef95,#05eb5c,#09e716,#35eb00,#58f000,#6ff300,#82f500,#90f700,#9df800,#a9fa00,#affa00,#b4f900,#b7f900,#baf900,#bdf900,#c0f900,#c4f800,#caf800,#d6f700,#e7f600,#f8f500,#fff100,#ffec00,#ffe700,#ffe200,#ffdd00,#ffd700,#ffd100,#ffcb00,#ffc500,#ffbe00,#ffb700,#ffb000,#ffa900,#ffa100,#ff9800,#ff8600,#ff7300,#ff6000,#ff4d00)}
.f112{top:224px;background:linear-gradient(90deg,#9900fd,#9c00fd,#a000fd,#a400fd,#a700fd,#ab00fd,#af00fc,#b200fc,#b500fc,#b800fc,#bb00fc,#be00fc,#c100fc,#c400fb,#c700fb,#ca00fb,#cd00fb,#d000fb,#d300fb,#d500fb,#d800fb,#da00fa,#dc00fa,#de00fa,#e000fa,#e200fa,#e300fa,#e300f9,#e200f7,#e000f4,#de00f1,#dc00ef,#da00eb,#d800e8,#d500e4,#d200e0,#cf00db,#cb00d6,#c700d0,#c300ca,#c000c5,#be00c2,#bd00c1,#be00c2,#c000c6,#c300ca,#c700cf,#cb00d6,#d800e9,#ca00f9,#7300f3,#0717df,#0057e2,#0095ee,#00d1fa,#00f1fb,#00f3e6,#00f2cd,#00f1b3,#02ee85,#07e93b,#1ee900,#45ed00,#61f100,#76f400,#86f500,#96f700,#a4f900,#adfa00,#b2fa00,#b6f900,#b8f900,#bbf900,#bef900,#c2f900,#c8f800,#d4f800,#e4f700,#f6f600,#fff200,#ffec00,#ffe700,#ffe200,#ffdc00,#ffd600,#ffd000,#ffca00,#ffc300,#ffbd00,#ffb500,#ffae00,#ffa700,#ffa000,#ff9400,#ff8100,#ff6e00,#ff5b00,#ff4800)}
.f113{top:226px;background:linear-gradient(90deg,#9b00fd,#9e00fd,#a200fd,#a500fd,#a900fd,#ac00fc,#b000fc,#b300fc,#b600fc,#b900fc,#bc00fc,#bf00fc,#c100fc,#c400fb,#c700fb,#ca00fb,#cd00fb,#d000fb,#d300fb,#d500fb,#d800fb,#da00fa,#dc00fa,#de00fa,#e000fa,#e200fa,#e300fa,#e300f9,#e100f6,#e000f4,#de00f1,#dc00ee,#da00eb,#d700e7,#d400e3,#d100de,#ce00d9,#c900d3,#c500cc,#c000c6,#bd00c0,#ba00bc,#b900bb,#ba00bc,#bc00bf,#bf00c3,#c200c8,#c600cd,#cc00d6,#db00f0,#b500f8,#4801ec,#002ee0,#006be5,#00adf3,#00e1fc,#00f4f5,#00f3df,#00f2c8,#00f0ac,#04ec6b,#0ae716,#29ea00,#4eef00,#69f200,#7bf400,#8df600,#9ef800,#aafa00,#b0fa00,#b4f900,#b7f900,#b9f900,#bcf900,#c0f900,#c7f800,#d3f800,#e3f700,#f4f600,#fff300,#ffed00,#ffe700,#ffe100,#ffdc00,#ffd500,#ffcf00,#ffc900,#ffc200,#ffbb00,#ffb400,#ffac00,#ffa500,#ff9e00,#ff8f00,#ff7c00,#ff6900,#ff5600,#ff4300)}
.f114{top:228px;background:linear-gradient(90deg,#9d00fd,#a000fd,#a400fd,#a700fd,#ab00fd,#ae00fc,#b100fc,#b400fc,#b700fc,#ba00fc,#bc00fc,#bf00fc,#c200fc,#c500fb,#c700fb,#ca00fb,#cd00fb,#d000fb,#d300fb,#d600fb,#d800fb,#da00fa,#dd00fa,#df00fa,#e000fa,#e200fa,#e300fa,#e300f8,#e100f6,#e000f4,#de00f1,#dc00ee,#d900ea,#d700e6,#d300e2,#d000dc,#cc00d6,#c700d0,#c200c9,#be00c2,#b900bb,#b600b7,#b500b4,#b500b5,#b700b8,#ba00bc,#be00c1,#c100c7,#c500cc,#ce00d9,#d900f6,#9900f6,#2007e4,#0044e1,#0082e9,#00c3f7,#00ecfd,#00f4ef,#00f3db,#00f2c7,#01efa0,#06ea49,#0ee709,#37ec00,#5af000,#6ff300,#84f500,#97f800,#a5f900,#adfa00,#b2fa00,#b5f900,#b8f900,#bbf900,#c0f900,#c7f800,#d2f800,#e1f700,#f2f600,#fff300,#ffed00,#ffe700,#ffe100,#ffdb00,#ffd400,#ffce00,#ffc700,#ffc100,#ffb900,#ffb200,#ffab00,#ffa300,#ff9c00,#ff8a00,#ff7700,#ff6400,#ff5100,#ff3e00)}
.f115{top:230px;background:linear-gradient(90deg,#9f00fd,#a200fd,#a500fd,#a900fd,#ac00fc,#af00fc,#b200fc,#b500fc,#b800fc,#bb00fc,#bd00fc,#c000fc,#c200fb,#c500fb,#c800fb,#cb00fb,#cd00fb,#d000fb,#d300fb,#d600fb,#d800fb,#db00fa,#dd00fa,#df00fa,#e100fa,#e200fa,#e400fa,#e300f8,#e100f6,#df00f3,#de00f1,#db00ed,#d900ea,#d600e5,#d300e0,#cf00db,#ca00d4,#c500cd,#c000c5,#bb00bd,#b600b6,#b200b1,#b000ae,#b100ae,#b300b1,#b600b6,#b900bb,#bd00c0,#c000c6,#c500cc,#d200e0,#ce00f9,#7300f3,#0718df,#0059e2,#009aee,#00d5fa,#00f1fc,#00f4ec,#00f3dc,#00f1c1,#03ed7c,#07e92f,#1ce801,#4aee00,#64f100,#7af400,#8ff700,#9ff900,#aafa00,#affa00,#b3f900,#b6f900,#baf900,#bff900,#c7f800,#d2f800,#e1f700,#f1f600,#fff400,#ffed00,#ffe700,#ffe100,#ffda00,#ffd400,#ffcd00,#ffc600,#ffbf00,#ffb800,#ffb000,#ffa900,#ffa200,#ff9900,#ff8500,#ff7200,#ff5f00,#ff4c00,#ff3900)}
.f116{top:232px;background:linear-gradient(90deg,#a100fd,#a400fd,#a700fd,#ab00fd,#ae00fc,#b100fc,#b400fc,#b700fc,#b900fc,#bc00fc,#be00fc,#c100fc,#c300fb,#c600fb,#c800fb,#cb00fb,#ce00fb,#d100fb,#d300fb,#d600fb,#d800fb,#db00fa,#dd00fa,#df00fa,#e100fa,#e200fa,#e400fa,#e300f8,#e100f6,#df00f3,#dd00f0,#db00ed,#d900e9,#d500e5,#d200df,#ce00d9,#c900d2,#c300ca,#be00c2,#b800b9,#b300b2,#af00ac,#ac00a8,#ac00a8,#ae00ab,#b100b0,#b500b5,#b900bb,#bd00c0,#c000c5,#c600ce,#d800ea,#b800f8,#4801ec,#002fe0,#006ee5,#00b1f3,#00e1fd,#00f4fa,#00f4eb,#00f2d4,#01f0a6,#05eb5d,#0be712,#36eb00,#54ef00,#6ef300,#86f500,#98f800,#a5f900,#acfa00,#b1fa00,#b5f900,#b9f900,#bff900,#c7f800,#d2f800,#e0f700,#f0f600,#fef400,#ffed00,#ffe700,#ffe000,#ffda00,#ffd300,#ffcc00,#ffc500,#ffbe00,#ffb600,#ffaf00,#ffa700,#ffa000,#ff9500,#ff8100,#ff6d00,#ff5a00,#ff4700,#ff3500)}
.f117{top:234px;background:linear-gradient(90deg,#a300fd,#a600fd,#a900fd,#ad00fc,#b000fc,#b200fc,#b500fc,#b800fc,#ba00fc,#bd00fc,#bf00fc,#c100fc,#c400fb,#c600fb,#c900fb,#cb00fb,#ce00fb,#d100fb,#d300fb,#d600fb,#d900fb,#db00fa,#dd00fa,#df00fa,#e100fa,#e300fa,#e400fa,#e200f8,#e100f6,#df00f3,#dd00f0,#db00ed,#d800e9,#d500e4,#d100de,#cd00d7,#c700d0,#c200c7,#bc00bf,#b600b6,#b000ae,#ab00a7,#a900a3,#a800a2,#aa00a5,#ae00aa,#b200b0,#b500b6,#b900bb,#bc00c0,#c000c5,#c800d2,#d900f3,#9a00f6,#1f08e3,#0047e1,#0087ea,#00c8f8,#00e9fe,#00f4f7,#00f3e3,#00f1c1,#02ee8c,#06ea3c,#1ae801,#3eed00,#5ef100,#7bf400,#90f700,#9ef900,#a8fa00,#aefa00,#b3f900,#b8f900,#bef900,#c7f800,#d2f800,#e0f700,#f0f600,#fef400,#ffee00,#ffe700,#ffe000,#ffd900,#ffd200,#ffcb00,#ffc400,#ffbd00,#ffb500,#ffad00,#ffa600,#ff9e00,#ff9000,#ff7c00,#ff6800,#ff5500,#ff4200,#ff3000)}
.f118{top:236px;background:linear-gradient(90deg,#a600fd,#a800fd,#ac00fc,#af00fc,#b100fc,#b400fc,#b700fc,#b900fc,#bb00fc,#be00fc,#c000fc,#c200fb,#c400fb,#c700fb,#c900fb,#cc00fb,#ce00fb,#d100fb,#d400fb,#d600fb,#d900fa,#db00fa,#dd00fa,#df00fa,#e100fa,#e300fa,#e400fa,#e200f8,#e100f5,#df00f3,#dd00f0,#db00ed,#d800e9,#d500e3,#d000dd,#cc00d6,#c600ce,#c000c5,#ba00bc,#b300b3,#ad00aa,#a800a2,#a5009d,#a5009d,#a700a0,#aa00a5,#ae00ab,#b200b1,#b600b6,#b900bb,#bc00c0,#c000c6,#cd00d9,#cf00f8,#7300f3,#0619df,#005fe3,#00a3f1,#00d7fc,#00effe,#00f4f1,#00f3d5,#00f1b3,#03ed72,#08e81f,#20e900,#4aee00,#6ef200,#86f600,#96f800,#a2f900,#abfa00,#b0fa00,#b6f900,#bdf900,#c6f800,#d2f800,#e0f700,#f0f600,#fef400,#ffee00,#ffe700,#ffe000,#ffd800,#ffd100,#ffca00,#ffc300,#ffbb00,#ffb300,#ffac00,#ffa400,#ff9d00,#ff8b00,#ff7700,#ff6400,#ff5100,#ff3e00,#ff2b00)}
.f119{top:238px;background:linear-gradient(90deg,#a800fd,#ab00fd,#ae00fc,#b100fc,#b300fc,#b600fc,#b800fc,#ba00fc,#bd00fc,#bf00fc,#c100fc,#c300fb,#c500fb,#c700fb,#ca00fb,#cc00fb,#cf00fb,#d100fb,#d400fb,#d700fb,#d900fa,#db00fa,#de00fa,#e000fa,#e100fa,#e300fa,#e400f9,#e200f7,#e100f5,#df00f3,#dd00f0,#db00ed,#d800e8,#d400e3,#d000dd,#cb00d5,#c500cc,#bf00c3,#b800b9,#b200b0,#ab00a7,#a6009f,#a20099,#a20098,#a4009c,#a700a1,#ab00a7,#af00ad,#b300b2,#b700b7,#ba00bc,#bc00c0,#c200c8,#d500e5,#b900f8,#4401eb,#0038e0,#007ae7,#00bcf7,#00dffe,#00f3fc,#00f4e7,#00f2cd,#01f0a6,#05eb53,#0be710,#33eb00,#5ff100,#7bf400,#8df600,#9af800,#a5f900,#adfa00,#b4f900,#bcf900,#c6f800,#d2f800,#e0f700,#eff600,#fef400,#ffee00,#ffe700,#ffdf00,#ffd800,#ffd000,#ffc900,#ffc200,#ffba00,#ffb200,#ffaa00,#ffa300,#ff9a00,#ff8700,#ff7300,#ff5f00,#ff4c00,#ff3900,#ff2700)}
.f120{top:240px;background:linear-gradient(90deg,#aa00fd,#ad00fc,#b000fc,#b300fc,#b500fc,#b700fc,#ba00fc,#bc00fc,#be00fc,#c000fc,#c200fc,#c400fb,#c600fb,#c800fb,#ca00fb,#cd00fb,#cf00fb,#d200fb,#d400fb,#d700fb,#d900fa,#dc00fa,#de00fa,#e000fa,#e200fa,#e300fa,#e300f9,#e200f7,#e100f5,#df00f3,#dd00f0,#db00ed,#d800e8,#d400e3,#d000dc,#ca00d4,#c400cb,#be00c2,#b700b8,#b000ae,#aa00a4,#a4009c,#a00096,#a00096,#a20098,#a5009d,#a900a3,#ad00a9,#b100af,#b400b4,#b700b8,#ba00bc,#bc00c0,#c500cc,#d800f1,#9400f5,#120fe1,#0054e2,#0096ee,#00ccfb,#00e7ff,#00f4f6,#00f3e1,#00f2c4,#02ee84,#07e937,#1ae802,#4fef00,#6ff300,#82f500,#91f700,#9ef900,#aafa00,#b2fa00,#baf900,#c5f800,#d1f800,#dff700,#eff600,#fef400,#ffee00,#ffe600,#ffdf00,#ffd700,#ffd000,#ffc800,#ffc100,#ffb900,#ffb100,#ffa900,#ffa100,#ff9700,#ff8300,#ff6f00,#ff5b00,#ff4800,#ff3500,#ff2300)}
.f121{top:242px;background:linear-gradient(90deg,#ad00fc,#af00fc,#b200fc,#b500fc,#b700fc,#b900fc,#bb00fc,#bd00fc,#bf00fc,#c100fc,#c300fb,#c500fb,#c700fb,#c900fb,#cb00fb,#cd00fb,#d000fb,#d200fb,#d500fb,#d700fb,#da00fa,#dc00fa,#de00fa,#e000fa,#e200fa,#e300fa,#e300f9,#e200f7,#e100f5,#df00f3,#de00f1,#db00ed,#d800e9,#d400e3,#cf00dc,#ca00d3,#c400ca,#bd00c0,#b600b6,#af00ac,#a800a2,#a3009a,#a00096,#a00096,#a00096,#a3009a,#a700a0,#ab00a6,#af00ac,#b200b1,#b500b5,#b800b9,#ba00bc,#bd00c1,#ca00d4,#cb00f8,#5c00ef,#002cdf,#006ee5,#00aff5,#00d7fd,#00f0fe,#00f4ee,#00f3d5,#00f0aa,#04ec60,#0be712,#3dec00,#62f100,#76f400,#87f600,#96f700,#a3f900,#affa00,#b8f900,#c3f900,#d0f800,#dff700,#eef600,#fef400,#ffee00,#ffe600,#ffdf00,#ffd700,#ffcf00,#ffc700,#ffc000,#ffb700,#ffaf00,#ffa800,#ffa000,#ff9400,#ff7f00,#ff6b00,#ff5700,#ff4400,#ff3100,#ff1f00)}
.f122{top:244px;background:linear-gradient(90deg,#af00fc,#b200fc,#b400fc,#b700fc,#b900fc,#bb00fc,#bd00fc,#bf00fc,#c100fc,#c200fb,#c400fb,#c600fb,#c800fb,#ca00fb,#cc00fb,#ce00fb,#d000fb,#d300fb,#d500fb,#d700fb,#da00fa,#dc00fa,#de00fa,#e000fa,#e200fa,#e400fa,#e300f9,#e200f7,#e100f5,#df00f3,#de00f1,#db00ed,#d800e9,#d400e3,#cf00dc,#c900d3,#c300ca,#bc00bf,#b500b5,#ae00ab,#a800a1,#a20099,#a00096,#a00096,#a00096,#a20098,#a5009e,#a900a3,#ad00a9,#b000ae,#b300b2,#b600b6,#b800b9,#ba00bc,#bf00c4,#d500e7,#a600f6,#2108e4,#0049e1,#0088ec,#00c3f9,#00e3fe,#00f4f9,#00f3e3,#00f1c1,#02ee89,#07e932,#2aea00,#54ef00,#69f200,#7cf400,#8cf600,#9cf800,#abfa00,#b6f900,#c1f900,#cff800,#def700,#eef600,#fdf500,#ffee00,#ffe600,#ffdf00,#ffd700,#ffce00,#ffc700,#ffbf00,#ffb600,#ffae00,#ffa600,#ff9f00,#ff9000,#ff7c00,#ff6700,#ff5400,#ff4000,#ff2d00,#ff1b00)}
.f123{top:246px;background:linear-gradient(90deg,#b200fc,#b400fc,#b700fc,#b900fc,#bb00fc,#bd00fc,#bf00fc,#c000fc,#c200fc,#c400fb,#c500fb,#c700fb,#c900fb,#ca00fb,#cc00fb,#ce00fb,#d100fb,#d300fb,#d500fb,#d800fb,#da00fa,#dc00fa,#df00fa,#e100fa,#e200fa,#e400fa,#e300f8,#e200f7,#e100f5,#e000f3,#de00f1,#dc00ee,#d800e9,#d400e3,#cf00dc,#c900d3,#c300c9,#bc00bf,#b500b4,#ae00aa,#a700a0,#a20099,#a00096,#a00096,#a00096,#a10097,#a4009c,#a800a1,#ab00a7,#af00ac,#b200b0,#b400b4,#b600b6,#b800b9,#ba00bc,#c500cc,#d400f5,#7200f2,#0420df,#0062e4,#00a2f2,#00d3fc,#00eefe,#00f4f0,#00f2d3,#00f0ad,#05eb5a,#16e804,#41ed00,#59f000,#6ef300,#81f500,#93f700,#a5f900,#b2fa00,#bff900,#cdf800,#dcf700,#edf600,#fdf500,#ffee00,#ffe600,#ffdf00,#ffd600,#ffce00,#ffc600,#ffbe00,#ffb500,#ffad00,#ffa500,#ff9e00,#ff8d00,#ff7800,#ff6400,#ff5000,#ff3d00,#ff2a00,#ff1700)}
.f124{top:248px;background:linear-gradient(90deg,#b500fc,#b700fc,#b900fc,#bb00fc,#bd00fc,#bf00fc,#c000fc,#c200fc,#c300fb,#c500fb,#c600fb,#c800fb,#c900fb,#cb00fb,#cd00fb,#cf00fb,#d100fb,#d300fb,#d600fb,#d800fb,#da00fa,#dd00fa,#df00fa,#e100fa,#e300fa,#e400fa,#e300f8,#e200f7,#e100f5,#e000f4,#de00f1,#dc00ee,#d900e9,#d500e3,#cf00dc,#c900d3,#c300c9,#bb00be,#b400b4,#ad00aa,#a700a0,#a20099,#a00096,#a00096,#a00096,#a00096,#a3009a,#a700a0,#aa00a5,#ad00aa,#b000ae,#b300b1,#b400b4,#b600b6,#b700b8,#bc00bf,#d000dd,#b700f7,#3503e8,#003ee1,#0079e8,#00b8f6,#00dffd,#00f3fb,#00f3e4,#00f2c6,#02ee88,#09e81e,#27ea00,#46ee00,#5ff100,#74f300,#89f600,#9df800,#affa00,#bcf900,#cbf800,#dbf700,#ecf600,#fcf500,#ffee00,#ffe600,#ffde00,#ffd600,#ffce00,#ffc500,#ffbd00,#ffb400,#ffac00,#ffa400,#ff9c00,#ff8a00,#ff7500,#ff6100,#ff4d00,#ff3900,#ff2600,#ff1400)}
.f125{top:250px;background:linear-gradient(90deg,#b700fc,#b900fc,#bb00fc,#bd00fc,#bf00fc,#c000fc,#c200fc,#c300fb,#c500fb,#c600fb,#c700fb,#c900fb,#ca00fb,#cc00fb,#ce00fb,#d000fb,#d200fb,#d400fb,#d600fb,#d800fb,#db00fa,#dd00fa,#df00fa,#e100fa,#e300fa,#e400fa,#e300f8,#e200f7,#e100f5,#e000f4,#de00f2,#dc00ee,#d900ea,#d500e4,#d000dc,#c900d3,#c200c9,#bb00be,#b400b4,#ad00aa,#a700a1,#a20099,#a00096,#a00096,#a00096,#a00096,#a2009a,#a6009e,#a900a3,#ac00a8,#af00ac,#b100b0,#b300b2,#b500b4,#b600b6,#b800b9,#c000c5,#d700f0,#8800f4,#0c13e0,#0052e1,#0090ec,#00c9f9,#00e9fe,#00f4f2,#00f3d9,#00f0ad,#06ea49,#0ee707,#30eb00,#4dee00,#67f200,#7ef400,#94f700,#aafa00,#b9f900,#c9f800,#d9f700,#eaf600,#fcf500,#ffee00,#ffe700,#ffde00,#ffd600,#ffcd00,#ffc500,#ffbc00,#ffb400,#ffab00,#ffa300,#ff9b00,#ff8700,#ff7300,#ff5e00,#ff4a00,#ff3600,#ff2300,#ff1100)}
.f126{top:252px;background:linear-gradient(90deg,#ba00fc,#bc00fc,#be00fc,#bf00fc,#c100fc,#c200fb,#c400fb,#c500fb,#c600fb,#c700fb,#c900fb,#ca00fb,#cb00fb,#cd00fb,#ce00fb,#d000fb,#d200fb,#d400fb,#d700fb,#d900fa,#db00fa,#dd00fa,#df00fa,#e100fa,#e300fa,#e400fa,#e300f8,#e200f7,#e100f5,#e000f4,#de00f2,#dc00ef,#d900ea,#d500e4,#d000dc,#c900d3,#c300c9,#bb00be,#b400b4,#ae00aa,#a800a1,#a3009a,#a00096,#a00096,#a00096,#a00096,#a20099,#a5009e,#a800a2,#ac00a7,#ae00ab,#b000ae,#b200b0,#b300b2,#b400b4,#b600b6,#b900ba,#c900d2,#c600f8,#5601ee,#0128df,#0066e3,#00a5f1,#00d9fc,#00f3fb,#00f4e6,#00f1c1,#03ed71,#08e824,#18e801,#3aec00,#57f000,#72f300,#8bf600,#a3f900,#b6f900,#c6f800,#d7f700,#e9f600,#fbf500,#ffef00,#ffe700,#ffdf00,#ffd600,#ffcd00,#ffc400,#ffbc00,#ffb300,#ffab00,#ffa300,#ff9900,#ff8500,#ff7000,#ff5c00,#ff4700,#ff3400,#ff2100,#ff0e00)}
.f127{top:254px;background:linear-gradient(90deg,#bc00fc,#be00fc,#c000fc,#c100fc,#c300fb,#c400fb,#c500fb,#c600fb,#c800fb,#c900fb,#ca00fb,#cb00fb,#cc00fb,#ce00fb,#cf00fb,#d100fb,#d300fb,#d500fb,#d700fb,#d900fa,#db00fa,#de00fa,#e000fa,#e100fa,#e300fa,#e400fa,#e300f8,#e200f7,#e100f5,#e000f4,#df00f2,#dd00ef,#da00eb,#d500e5,#d000dc,#c900d3,#c300c9,#bc00be,#b500b4,#ae00aa,#a800a2,#a3009b,#a00096,#a00096,#a00096,#a00096,#a20099,#a5009d,#a800a1,#ab00a6,#ad00aa,#af00ad,#b100af,#b200b0,#b300b2,#b400b3,#b500b6,#bc00bf,#d500e7,#a800f6,#2e05e6,#003fe1,#007be7,#00c3f7,#00ebfe,#00f4ef,#00f2cd,#02ee90,#06ea44,#0ae70d,#27ea00,#47ee00,#65f100,#80f500,#9bf800,#b2fa00,#c3f900,#d4f800,#e7f600,#faf500,#ffef00,#ffe700,#ffdf00,#ffd600,#ffcd00,#ffc400,#ffbb00,#ffb300,#ffaa00,#ffa200,#ff9800,#ff8300,#ff6e00,#ff5a00,#ff4500,#ff3100,#ff1e00,#ff0c00)}
.f128{top:256px;background:linear-gradient(90deg,#be00fc,#c000fc,#c200fc,#c300fb,#c500fb,#c600fb,#c700fb,#c800fb,#c900fb,#ca00fb,#cb00fb,#cc00fb,#cd00fb,#cf00fb,#d000fb,#d200fb,#d400fb,#d600fb,#d800fb,#da00fa,#dc00fa,#de00fa,#e000fa,#e200fa,#e300fa,#e400fa,#e300f8,#e200f7,#e100f5,#e000f4,#df00f2,#dd00ef,#da00eb,#d600e5,#d000dd,#ca00d3,#c300c9,#bc00bf,#b500b5,#ae00ab,#a900a3,#a4009c,#a10097,#a00096,#a00096,#a00096,#a20099,#a4009c,#a700a1,#aa00a5,#ad00a9,#ae00ab,#b000ad,#b100af,#b200b0,#b300b1,#b400b3,#b600b6,#c100c7,#d600f3,#8700f4,#0f11e0,#0056e2,#00a7f1,#00dffd,#00f4f7,#00f3d6,#00f0a7,#04ec60,#08e825,#14e701,#37ec00,#57f000,#75f300,#92f700,#adfa00,#bff900,#d1f800,#e4f700,#f8f500,#fff000,#ffe800,#ffdf00,#ffd600,#ffcd00,#ffc400,#ffbb00,#ffb200,#ffaa00,#ffa200,#ff9700,#ff8200,#ff6d00,#ff5800,#ff4300,#ff3000,#ff1c00,#ff0900)}
.f129{top:258px;background:linear-gradient(90deg,#c100fc,#c200fb,#c400fb,#c500fb,#c600fb,#c800fb,#c900fb,#ca00fb,#ca00fb,#cb00fb,#cc00fb,#cd00fb,#ce00fb,#d000fb,#d100fb,#d200fb,#d400fb,#d600fb,#d800fb,#da00fa,#dc00fa,#de00fa,#e000fa,#e200fa,#e300fa,#e400f9,#e200f8,#e200f6,#e100f5,#e000f4,#df00f2,#dd00ef,#da00eb,#d600e5,#d000dd,#ca00d3,#c300c9,#bc00bf,#b500b5,#af00ac,#a900a4,#a5009d,#a10098,#a00096,#a00096,#a00096,#a20099,#a4009c,#a700a0,#aa00a4,#ac00a8,#ae00aa,#af00ac,#b000ad,#b100ae,#b100b0,#b200b1,#b300b2,#b700b8,#c900d2,#c900f7,#5f00ef,#0035e0,#0088ea,#00d0fb,#00f2fc,#00f3de,#00f1b6,#03ed79,#06ea3d,#0ae70c,#27ea00,#4aee00,#6af200,#89f600,#a7f900,#bbf900,#cef800,#e2f700,#f6f600,#fff100,#ffe800,#ffe000,#ffd600,#ffcd00,#ffc400,#ffbb00,#ffb200,#ffaa00,#ffa100,#ff9600,#ff8100,#ff6b00,#ff5600,#ff4200,#ff2e00,#ff1a00,#ff0800)}</style></head><body>
<div style="left:20.00px;top:20.00px;width:677.00px;height:559.00px;background:#f0f0f0"></div>
<div style="left:20.00px;top:20.00px;width:677.00px;height:11.00px;background:#f4f5f7"></div>
<div class="t" style="left:24.80px;top:22.76px;font-size:6.4px;color:#8c8c8c;">File</div>
<div class="t" style="left:44.60px;top:22.76px;font-size:6.4px;color:#8c8c8c;">MapSheet</div>
<div class="t" style="left:83.30px;top:22.76px;font-size:6.4px;color:#8c8c8c;">Display</div>
<div class="t" style="left:113.80px;top:22.76px;font-size:6.4px;color:#8c8c8c;">Layers</div>
<div class="t" style="left:143.00px;top:22.76px;font-size:6.4px;color:#8c8c8c;">Edit</div>
<div class="t" style="left:163.60px;top:22.76px;font-size:6.4px;color:#8c8c8c;">Lists</div>
<div class="t" style="left:186.50px;top:22.76px;font-size:6.4px;color:#8c8c8c;">Query</div>
<div class="t" style="left:214.60px;top:22.76px;font-size:6.4px;color:#8c8c8c;">Report</div>
<div class="t" style="left:244.60px;top:22.76px;font-size:6.4px;color:#8c8c8c;">Admin</div>
<div class="t" style="left:272.00px;top:22.76px;font-size:6.4px;color:#8c8c8c;">View</div>
<div class="t" style="left:295.00px;top:22.76px;font-size:6.4px;color:#8c8c8c;">Help</div>
<div style="left:20.00px;top:31.00px;width:677.00px;height:18.00px;background:#efefef"></div>
<div style="left:20.00px;top:48.50px;width:677.00px;height:1.00px;background:#dadada"></div>
<div style="left:20.00px;top:49.50px;width:677.00px;height:19.50px;background:#d3d3d3"></div>
<div style="left:20.00px;top:49.50px;width:562.30px;height:19.50px;background:#f0f0f0"></div>
<div style="left:582.30px;top:49.50px;width:1.00px;height:19.50px;background:#e2e2e2"></div>
<svg class="s" style="left:0.00px;top:0px" width="600" height="75"><g transform="translate(28.60,35.80)"><path d="M1.5 0.8H6.5L8.5 2.8V9.2H1.5Z" fill="#e9e2c8" stroke="#a89870" stroke-width="0.7"/><rect x="2.2" y="1.8" width="4" height="3" fill="#3f8fdc"/><rect x="2.2" y="4.8" width="4.5" height="3.5" fill="#78b04a"/><circle cx="7.6" cy="7.3" r="2.3" fill="#3aa543"/><path d="M6.2 7.3H8.6M7.7 6.3L8.7 7.3L7.7 8.3" stroke="#fff" stroke-width="0.8" fill="none"/></g><g transform="translate(43.70,35.80)"><path d="M1.5 0.8H6.5L8.5 2.8V9.2H1.5Z" fill="#eeeeee" stroke="#a0a0a0" stroke-width="0.7"/><rect x="1.8" y="1.6" width="4.2" height="3.8" fill="#d82222"/><path d="M2.8 4.8L3.9 2.4L5 4.8" stroke="#fff" stroke-width="0.6" fill="none"/><circle cx="7.6" cy="7.3" r="2.3" fill="#3aa543"/><path d="M6.2 7.3H8.6M7.7 6.3L8.7 7.3L7.7 8.3" stroke="#fff" stroke-width="0.8" fill="none"/></g><g transform="translate(58.40,35.80)"><path d="M1.5 0.8H6.5L8.5 2.8V9.2H1.5Z" fill="#eeeeee" stroke="#a0a0a0" stroke-width="0.7"/><circle cx="4" cy="3.8" r="2.6" fill="none" stroke="#e8982e" stroke-width="1.4"/><circle cx="7.6" cy="7.3" r="2.3" fill="#3aa543"/><path d="M6.2 7.3H8.6M7.7 6.3L8.7 7.3L7.7 8.3" stroke="#fff" stroke-width="0.8" fill="none"/></g><g transform="translate(73.90,35.80)"><path d="M1.5 0.8H6.5L8.5 2.8V9.2H1.5Z" fill="#eeeeee" stroke="#a0a0a0" stroke-width="0.7"/><circle cx="4" cy="3.8" r="2.6" fill="none" stroke="#e8a232" stroke-width="1.4"/><rect x="3.2" y="2" width="1.6" height="3.5" fill="#e8a232"/><circle cx="7.6" cy="7.3" r="2.3" fill="#3aa543"/><path d="M6.2 7.3H8.6M7.7 6.3L8.7 7.3L7.7 8.3" stroke="#fff" stroke-width="0.8" fill="none"/></g><g transform="translate(96.90,35.80)"><circle cx="5" cy="5" r="3.8" fill="#e6e6e6" stroke="#a8a8a8" stroke-width="0.9"/><path d="M3 5H7" stroke="#a0a0a0" stroke-width="1"/></g><g transform="translate(115.80,35.80)"><path d="M1.5 4.5L4.5 1.6V3.2H7.5Q9 3.2 9 5V9H6.4V5.6H4.5V7.2Z" fill="#3a9ad4" stroke="#2a6a9a" stroke-width="0.5"/></g><g transform="translate(130.90,35.80)"><path d="M1 4.5L4 1.6V3.2H7Q8.6 3.2 8.6 5V8H6V5.6H4V7.2Z" fill="#3a9ad4" stroke="#2a6a9a" stroke-width="0.5"/><path d="M5 7.6L6.3 9L8.6 6.2" stroke="#111" stroke-width="1" fill="none"/></g><g transform="translate(149.80,35.80)"><circle cx="4.2" cy="4.2" r="3" fill="#eef4fa" stroke="#666" stroke-width="0.9"/><path d="M6.4 6.4L9 9" stroke="#d4a030" stroke-width="1.8"/><path d="M2.8 4.2H5.6M4.2 2.8V5.6" stroke="#3a70b0" stroke-width="0.8"/></g><g transform="translate(164.90,35.80)"><circle cx="4.2" cy="4.2" r="3" fill="#f6f6f6" stroke="#aaa" stroke-width="0.9"/><path d="M6.4 6.4L9 9" stroke="#bbb" stroke-width="1.6"/><path d="M2.8 4.2H5.6" stroke="#999" stroke-width="0.8"/></g><g transform="translate(180.00,35.80)"><path d="M1 1L3.5 3.5M9 1L6.5 3.5M1 9L3.5 6.5M9 9L6.5 6.5M3.2 3.2H6.8V6.8H3.2Z" stroke="#3a3a3a" stroke-width="0.9" fill="none"/><path d="M0.6 0.6H2.6M0.6 0.6V2.6M9.4 0.6H7.4M9.4 0.6V2.6M0.6 9.4H2.6M0.6 9.4V7.4M9.4 9.4H7.4M9.4 9.4V7.4" stroke="#3a3a3a" stroke-width="1"/></g><g transform="translate(195.80,35.80)"><path d="M2.5 5V2.5Q3.2 1.4 3.9 2.5V1.6Q4.6 0.6 5.3 1.6V2.2Q6 1.2 6.7 2.2V3Q7.5 2.2 8 3.2V6.5Q7.6 9.2 5 9.3Q2.6 9.2 1.6 6.6Z" fill="#fafafa" stroke="#9a9a9a" stroke-width="0.7"/></g><g transform="translate(210.60,35.80)"><rect x="0.8" y="2.5" width="8.4" height="6" rx="0.8" fill="#9aa0a8" stroke="#5a6068" stroke-width="0.6"/><rect x="3" y="1.5" width="3" height="1.2" fill="#7a8088"/><circle cx="5" cy="5.5" r="1.8" fill="#3a4048"/></g><g transform="translate(225.60,35.80)"><rect x="1" y="1.5" width="6.5" height="7.5" fill="#e8c870" stroke="#a88a40" stroke-width="0.6"/><rect x="3.5" y="4" width="5.8" height="5.2" fill="#f4f4f4" stroke="#888" stroke-width="0.6"/><path d="M4.6 7.6Q6.4 4.8 8.2 7.6Z" fill="#3aa543"/></g><g transform="translate(241.00,35.80)"><rect x="0.8" y="1" width="8.4" height="2.5" fill="#e6a838" stroke="#a07020" stroke-width="0.5"/><path d="M1.2 3.5V9M8.8 3.5V9M2 6.3H8M2 6.3L3.2 5.3M2 6.3L3.2 7.3M8 6.3L6.8 5.3M8 6.3L6.8 7.3" stroke="#4a5a90" stroke-width="0.8" fill="none"/></g><g transform="translate(256.50,35.80)"><rect x="0.8" y="1.8" width="6.8" height="6.8" fill="#222" stroke="#555" stroke-width="0.5"/><rect x="2.4" y="3.4" width="6.8" height="6" fill="#bbb" opacity="0.6"/><path d="M6.5 1.5L8.5 0.8L9 2.8" stroke="#555" stroke-width="0.7" fill="none"/></g><g transform="translate(278.40,35.80)"><rect x="1" y="1" width="8" height="8" fill="#e4e4e4" stroke="#999" stroke-width="0.7"/><path d="M1 3.5H9M1 5.5H9M1 7.3H9M3.5 1V9" stroke="#bbb" stroke-width="0.5"/></g><g transform="translate(294.00,35.80)"><path d="M1 7.8Q2 3 6.5 3.8V2.2L9.2 5L6.5 7.8V6Q3.5 5.6 1 7.8Z" fill="#2e9a48" stroke="#1a6a30" stroke-width="0.4"/></g><g transform="translate(309.00,35.80)"><path d="M1 7.8Q2 3 6.5 3.8V2.2L9.2 5L6.5 7.8V6Q3.5 5.6 1 7.8Z" fill="#b8b8b8" stroke="#999" stroke-width="0.4"/><rect x="7.5" y="4.5" width="1.5" height="4.5" fill="#aaa"/></g><g transform="translate(325.00,35.80)"><path d="M2.5 4Q2.5 1 5 1Q7.5 1 7.5 4V6.5Q7.5 9.3 5 9.3Q2.5 9.3 2.5 6.5Z" fill="#f4f4f4" stroke="#a0a0a0" stroke-width="0.8"/><path d="M2.5 4.5H7.5M5 1V4.5" stroke="#a0a0a0" stroke-width="0.6"/></g><g transform="translate(340.00,35.80)"><path d="M2.5 4Q2.5 1 5 1Q7.5 1 7.5 4V6.5Q7.5 9.3 5 9.3Q2.5 9.3 2.5 6.5Z" fill="#f4f4f4" stroke="#a0a0a0" stroke-width="0.8"/><path d="M2.5 4.5H7.5M5 1V4.5" stroke="#a0a0a0" stroke-width="0.6"/></g><g transform="translate(355.00,35.80)"><rect x="0.8" y="0.8" width="8.4" height="8.4" rx="1" fill="#3a9ad8" stroke="#1f5f9a" stroke-width="0.8"/><path d="M5 1V9" stroke="#9ad0f0" stroke-width="0.6"/></g><g transform="translate(370.70,35.80)"><path d="M0.6 5.2Q5 0.8 9.4 5.2Q5 9 0.6 5.2Z" fill="#e8e8e8" stroke="#a0a0a0" stroke-width="0.7"/><circle cx="5" cy="5" r="1.6" fill="#a8a8a8"/></g><g transform="translate(386.00,35.80)"><path d="M0.6 5.2Q5 0.8 9.4 5.2Q5 9 0.6 5.2Z" fill="#e0d8d8" stroke="#a08888" stroke-width="0.7"/><circle cx="4.6" cy="5" r="1.5" fill="#a09090"/><path d="M5.8 5.6L9 8.8M9 5.6L5.8 8.8" stroke="#e02a2a" stroke-width="1.2"/></g><g transform="translate(401.00,35.80)"><rect x="0.8" y="0.8" width="5.5" height="6" fill="#f0f0f0" stroke="#aaa" stroke-width="0.6"/><rect x="3.5" y="3.2" width="5.7" height="6" fill="#e4e8ec" stroke="#999" stroke-width="0.6"/><path d="M4.5 5H8M4.5 6.5H8" stroke="#8ab" stroke-width="0.5"/></g><g transform="translate(416.00,35.80)"><rect x="1.2" y="1.5" width="6" height="7.5" fill="#f2f2f2" stroke="#bbb" stroke-width="0.6"/><rect x="4" y="4" width="5.2" height="5.2" fill="#f6f6f6" stroke="#bbb" stroke-width="0.6"/></g><g transform="translate(431.50,35.80)"><path d="M1.5 2H8.5M3.5 2V1H6.5V2M2.2 2.5L2.8 9.2H7.2L7.8 2.5Z" fill="#9a9a9a" stroke="#777" stroke-width="0.6"/></g><g transform="translate(446.60,35.80)"><circle cx="3" cy="6.5" r="1.8" fill="#777"/><circle cx="5.2" cy="5" r="1.3" fill="#999"/><rect x="6.8" y="1" width="2" height="2" fill="none" stroke="#aaa" stroke-width="0.5"/><rect x="6.8" y="5" width="2" height="2" fill="none" stroke="#aaa" stroke-width="0.5"/></g><g transform="translate(468.50,35.80)"><rect x="2" y="0.8" width="6" height="8.6" rx="0.6" fill="#3a3a3a" stroke="#222" stroke-width="0.5"/><path d="M3 3H7M3 4.6H7M3 6.2H7M3 7.8H7" stroke="#ccc" stroke-width="0.6"/></g><g transform="translate(484.00,35.80)"><circle cx="1.0" cy="1.0" r="0.7" fill="#3a58c0"/><circle cx="1.0" cy="3.6" r="0.7" fill="#3a58c0"/><circle cx="1.0" cy="6.2" r="0.7" fill="#3a58c0"/><circle cx="1.0" cy="8.8" r="0.7" fill="#3a58c0"/><circle cx="3.6" cy="1.0" r="0.7" fill="#3a58c0"/><circle cx="3.6" cy="3.6" r="0.7" fill="#3a58c0"/><circle cx="3.6" cy="6.2" r="0.7" fill="#3a58c0"/><circle cx="3.6" cy="8.8" r="0.7" fill="#3a58c0"/><circle cx="6.2" cy="1.0" r="0.7" fill="#3a58c0"/><circle cx="6.2" cy="3.6" r="0.7" fill="#3a58c0"/><circle cx="6.2" cy="6.2" r="0.7" fill="#3a58c0"/><circle cx="6.2" cy="8.8" r="0.7" fill="#3a58c0"/><circle cx="8.8" cy="1.0" r="0.7" fill="#3a58c0"/><circle cx="8.8" cy="3.6" r="0.7" fill="#3a58c0"/><circle cx="8.8" cy="6.2" r="0.7" fill="#3a58c0"/><circle cx="8.8" cy="8.8" r="0.7" fill="#3a58c0"/><path d="M2.5 8L7.5 2.5L9 4L4 9.2Z" fill="#e8a22a" stroke="#8a5a10" stroke-width="0.4"/></g><g transform="translate(499.50,35.80)"><path d="M1 3Q1 1 4 1Q8 1 8 3.5Q8 6 5 6Q2 8 1 5Z" fill="#ddd" stroke="#888" stroke-width="0.8"/><path d="M3 8.6L8 3.2L9.4 4.6L4.4 9.6Z" fill="#e8a22a" stroke="#8a5a10" stroke-width="0.4"/><path d="M8 3.2L9.4 4.6" stroke="#d03030" stroke-width="1"/></g><g transform="translate(514.80,35.80)"><path d="M0.8 5.5L3.5 3.5L4.5 6L2 9Z" fill="#3a60c0"/><path d="M3 8.6L8 3.2L9.4 4.6L4.4 9.6Z" fill="#e8a22a" stroke="#8a5a10" stroke-width="0.4"/><path d="M8 3.2L9.4 4.6" stroke="#d03030" stroke-width="1"/></g><g transform="translate(530.00,35.80)"><rect x="0.6" y="2.2" width="8.8" height="5.6" rx="0.8" fill="#e8e8e8" stroke="#aaa" stroke-width="0.7"/><rect x="3" y="4.2" width="4" height="1.6" fill="#ccc"/></g><g transform="translate(28.20,54.20)"><path d="M0.8 2H4L5 3H8.5V8.5H0.8Z" fill="#e8c870" stroke="#b09040" stroke-width="0.5"/><circle cx="6.3" cy="7" r="2.4" fill="#3aa84a"/><path d="M5 7H7.6M6.3 5.7V8.3" stroke="#fff" stroke-width="0.8"/><path d="M6 1.6L8.6 0.6" stroke="#333" stroke-width="0.6"/></g><g transform="translate(43.30,54.20)"><path d="M5 0.8L6.5 4.5L5 5.5L3.5 4.5Z" fill="#333"/><path d="M1.2 5H8.8" stroke="#333" stroke-width="0.8"/><path d="M2 9Q4 6 8.8 7.5" stroke="#6a7aa0" stroke-width="0.8" fill="none"/><path d="M3 6.5Q5 8 7 6.5" stroke="#333" stroke-width="0.8" fill="none"/></g><g transform="translate(58.70,54.20)"><path d="M1 2.5L9 8M1 8L9 2.5" stroke="#4a5a78" stroke-width="0.9"/><circle cx="8" cy="2" r="1.4" fill="#333"/><circle cx="8" cy="8.4" r="1.4" fill="#333"/></g><g transform="translate(74.00,54.20)"><circle cx="2" cy="2" r="1.6" fill="none" stroke="#5a6a98" stroke-width="0.7"/><circle cx="2" cy="5" r="1.6" fill="none" stroke="#5a6a98" stroke-width="0.7"/><circle cx="2" cy="8" r="1.6" fill="none" stroke="#5a6a98" stroke-width="0.7"/><circle cx="5" cy="2" r="1.6" fill="none" stroke="#5a6a98" stroke-width="0.7"/><circle cx="5" cy="5" r="1.6" fill="none" stroke="#5a6a98" stroke-width="0.7"/><circle cx="5" cy="8" r="1.6" fill="none" stroke="#5a6a98" stroke-width="0.7"/><circle cx="8" cy="2" r="1.6" fill="none" stroke="#5a6a98" stroke-width="0.7"/><circle cx="8" cy="5" r="1.6" fill="none" stroke="#5a6a98" stroke-width="0.7"/><circle cx="8" cy="8" r="1.6" fill="none" stroke="#5a6a98" stroke-width="0.7"/></g><g transform="translate(89.00,54.20)"><rect x="0.6" y="0.6" width="2.2" height="2.2" fill="#d23a1a"/><rect x="0.6" y="2.8000000000000003" width="2.2" height="2.2" fill="#e86a20"/><rect x="0.6" y="5.0" width="2.2" height="2.2" fill="#e8b020"/><rect x="0.6" y="7.2" width="2.2" height="2.2" fill="#c8c020"/><rect x="2.8000000000000003" y="0.6" width="2.2" height="2.2" fill="#e89a20"/><rect x="2.8000000000000003" y="2.8000000000000003" width="2.2" height="2.2" fill="#e8c020"/><rect x="2.8000000000000003" y="5.0" width="2.2" height="2.2" fill="#70c040"/><rect x="2.8000000000000003" y="7.2" width="2.2" height="2.2" fill="#40a880"/><rect x="5.0" y="0.6" width="2.2" height="2.2" fill="#e8d020"/><rect x="5.0" y="2.8000000000000003" width="2.2" height="2.2" fill="#8ac840"/><rect x="5.0" y="5.0" width="2.2" height="2.2" fill="#30a0d0"/><rect x="5.0" y="7.2" width="2.2" height="2.2" fill="#2080c0"/><rect x="7.2" y="0.6" width="2.2" height="2.2" fill="#e8e040"/><rect x="7.2" y="2.8000000000000003" width="2.2" height="2.2" fill="#40b0a0"/><rect x="7.2" y="5.0" width="2.2" height="2.2" fill="#2060b0"/><rect x="7.2" y="7.2" width="2.2" height="2.2" fill="#1a4a98"/></g><g transform="translate(104.60,54.20)"><path d="M1 2.6H9M1 5.3H9M1 8H9M2.6 1V9M5.3 1V9M8 1V9" stroke="#5a6a98" stroke-width="0.4"/><circle cx="2.6" cy="2.6" r="0.8" fill="#243a8a"/><circle cx="2.6" cy="5.300000000000001" r="0.8" fill="#243a8a"/><circle cx="2.6" cy="8.0" r="0.8" fill="#243a8a"/><circle cx="5.300000000000001" cy="2.6" r="0.8" fill="#243a8a"/><circle cx="5.300000000000001" cy="5.300000000000001" r="0.8" fill="#243a8a"/><circle cx="5.300000000000001" cy="8.0" r="0.8" fill="#243a8a"/><circle cx="8.0" cy="2.6" r="0.8" fill="#243a8a"/><circle cx="8.0" cy="5.300000000000001" r="0.8" fill="#243a8a"/><circle cx="8.0" cy="8.0" r="0.8" fill="#243a8a"/></g><g transform="translate(119.60,54.20)"><path d="M1.5 1.5H8.5M1.5 3H8.5M1.5 4.5H8.5M1.5 6H8M1.5 7.5H6Q7.5 7.5 8 9" stroke="#7a88a0" stroke-width="0.8" fill="none"/></g><g transform="translate(134.00,54.20)"><path d="M1 9L8 2" stroke="#d82a2a" stroke-width="1"/><path d="M9.4 0.8L5.8 2L8.2 4.4Z" fill="#d82a2a"/></g><g transform="translate(150.00,54.20)"><circle cx="4.6" cy="4.6" r="3.8" fill="#2a78d0"/><path d="M2 3Q4 2 5 4Q3 6 2 5Z" fill="#e8f0f8"/><circle cx="7" cy="7.2" r="2.2" fill="#3aa84a"/><path d="M5.8 7.2H8.2M7 6V8.4" stroke="#fff" stroke-width="0.7"/></g><g transform="translate(165.00,54.20)"><rect x="0.6" y="0.6" width="8.8" height="8.8" fill="#f4f4f4" stroke="#888" stroke-width="0.5"/><circle cx="5" cy="4" r="2.6" fill="#111"/><path d="M0.6 7Q5 4.8 9.4 6.5V9.4H0.6Z" fill="#1a4a9a"/><path d="M0.6 7.4Q4 6 6 6.6" stroke="#e8a020" stroke-width="0.8" fill="none"/></g><g transform="translate(180.90,54.20)"><path d="M1 2L4 1L7 2.2L8.6 5.5L5.5 8.2L1.5 7Z" fill="none" stroke="#3aa84a" stroke-width="1"/><circle cx="7.3" cy="7.3" r="2" fill="#3aa84a"/><path d="M6.2 7.3H8.4" stroke="#fff" stroke-width="0.7"/></g><g transform="translate(195.80,54.20)"><circle cx="3.5" cy="6.2" r="2.8" fill="#4a9a3a"/><circle cx="6.5" cy="3.8" r="2.8" fill="#5aaa40"/><circle cx="3.5" cy="6.2" r="1" fill="#e8a040"/><circle cx="6.6" cy="3.6" r="1" fill="#e8a040"/></g><g transform="translate(211.00,54.20)"><path d="M1.5 0.8H6.5L8.5 2.8V9.2H1.5Z" fill="#eeeeee" stroke="#999" stroke-width="0.7"/><rect x="2.2" y="3" width="5.5" height="5.5" fill="#5aaa3a"/><path d="M2.2 5Q5 3 7.7 4.5V3H2.2Z" fill="#3a7ad0"/></g><g transform="translate(226.00,54.20)"><path d="M1.5 0.8H6.5L8.5 2.8V9.2H1.5Z" fill="#f0f0f0" stroke="#999" stroke-width="0.7"/><rect x="3" y="4" width="4" height="4" fill="#8ad07a" stroke="#3a8a3a" stroke-width="0.5"/></g><g transform="translate(242.00,54.20)"><path d="M1.5 0.8H6.5L8.5 2.8V9.2H1.5Z" fill="#e6f0f8" stroke="#4a8ac0" stroke-width="0.7"/><rect x="1.5" y="4.5" width="8" height="4.5" fill="#2a8ad8"/><path d="M3 6.5H8" stroke="#fff" stroke-width="0.6"/></g><g transform="translate(257.00,54.20)"><path d="M3.2 0.8V9.4M7 0.8V9.4M0.8 3.2H9.4M0.8 7H9.4" stroke="#3a4e80" stroke-width="0.9"/></g><g transform="translate(280.50,54.20)"><text x="5" y="6.6" font-family="Liberation Sans" font-size="3.8" font-weight="bold" text-anchor="middle" fill="#6a7890">ABC</text></g><g transform="translate(295.20,54.20)"><path d="M1 9Q3 8 4 5Q5.5 2 9 1" stroke="#2a6ab0" stroke-width="1.1" fill="none"/></g><g transform="translate(310.30,54.20)"><path d="M1 2Q4 0.5 8 1.5Q9.5 4 8 6Q9 9 5 9Q2 9 2 6.5Q0.5 4 1 2Z" fill="#3a6aa8" stroke="#2a4a80" stroke-width="0.5"/></g><g transform="translate(325.40,54.20)"><rect x="1" y="1" width="8" height="8" fill="#3a6aa8" stroke="#2a4a80" stroke-width="0.5"/></g><g transform="translate(340.60,54.20)"><circle cx="5" cy="5" r="4" fill="#3a6aa8" stroke="#2a4a80" stroke-width="0.5"/></g><g transform="translate(355.80,54.20)"><ellipse cx="5" cy="5" rx="4.2" ry="3.4" transform="rotate(30 5 5)" fill="#3a6aa8" stroke="#2a4a80" stroke-width="0.5"/></g><g transform="translate(371.00,54.20)"><path d="M5 0.5V9.5M0.5 5H9.5" stroke="#3a7ad0" stroke-width="0.9"/><ellipse cx="5" cy="5" rx="3.3" ry="2" fill="#3a7ad0"/><ellipse cx="5" cy="4.5" rx="2" ry="1" fill="#cfe4f6"/></g><g transform="translate(394.00,54.20)"><text x="5" y="4.4" font-family="Liberation Sans" font-size="4" font-weight="bold" text-anchor="middle" fill="#2a3a8a">N</text><path d="M5 4.8L6.5 9L5 8L3.5 9Z" fill="#2a4ab0"/></g><g transform="translate(409.00,54.20)"><rect x="4" y="1" width="2" height="5" fill="#aaa"/><path d="M0.8 7.5H9.2V9H0.8Z" fill="#333"/><path d="M1 6V7.5M9 6V7.5" stroke="#333" stroke-width="0.8"/></g><g transform="translate(424.00,54.20)"><rect x="3.6" y="0.6" width="3" height="8.8" fill="none" stroke="#555" stroke-width="0.5"/><rect x="3.8" y="0.8" width="2.6" height="1.3" fill="#d020d0"/><rect x="3.8" y="2.0" width="2.6" height="1.3" fill="#4040e0"/><rect x="3.8" y="3.2" width="2.6" height="1.3" fill="#20b0e0"/><rect x="3.8" y="4.3999999999999995" width="2.6" height="1.3" fill="#30c040"/><rect x="3.8" y="5.6" width="2.6" height="1.3" fill="#d0e020"/><rect x="3.8" y="6.8" width="2.6" height="1.3" fill="#f0a020"/><rect x="3.8" y="7.999999999999999" width="2.6" height="1.3" fill="#e02020"/></g><g transform="translate(439.00,54.20)"><rect x="0.6" y="1" width="8.8" height="8" fill="#eee" stroke="#999" stroke-width="0.7"/><rect x="2" y="2" width="6" height="1.6" fill="#bbb"/><rect x="4.5" y="4.5" width="4" height="3.8" fill="#a8d0f0"/></g><g transform="translate(454.00,54.20)"><rect x="0.6" y="0.8" width="8.8" height="8.4" rx="0.8" fill="#f6f6f6" stroke="#d04848" stroke-width="0.9"/><rect x="2.6" y="2.8" width="1.4" height="1.4" fill="#555"/><rect x="2.6" y="5.8" width="1.4" height="1.4" fill="#555"/><rect x="5.6" y="2.8" width="1.4" height="1.4" fill="#555"/><rect x="5.6" y="5.8" width="1.4" height="1.4" fill="#555"/></g><g transform="translate(469.60,54.20)"><rect x="0.6" y="0.8" width="8.8" height="8.4" rx="0.8" fill="#f2f2f2" stroke="#888" stroke-width="0.7"/><path d="M2 3.5L5 2L8 4L7 8L3 7.5Z" fill="#eca060"/></g><g transform="translate(484.60,54.20)"><rect x="0.6" y="0.8" width="8.8" height="8.4" rx="0.8" fill="#f2f2f2" stroke="#888" stroke-width="0.7"/><circle cx="3.2" cy="3.4" r="0.9" fill="#e07a40"/><circle cx="3.2" cy="6.6" r="0.9" fill="#e07a40"/><circle cx="6.6" cy="3.4" r="0.9" fill="#e07a40"/><circle cx="6.6" cy="6.6" r="0.9" fill="#e07a40"/></g><g transform="translate(499.80,54.20)"><rect x="0.6" y="2.2" width="8.8" height="5.8" rx="0.8" fill="#e4e4e4" stroke="#999" stroke-width="0.7"/><rect x="3" y="4.2" width="4" height="1.8" fill="#bbb"/></g><g transform="translate(523.60,54.20)"><path d="M2 1.5H6.5L8.5 3.5V9.3H2Z" fill="#cfeef4" stroke="#8aa8b0" stroke-width="0.6"/><circle cx="2" cy="2" r="1.6" fill="#f0a030"/></g><g transform="translate(538.00,54.20)"><path d="M0.6 3H3.5L4.5 4H8.5V8.8H0.6Z" fill="#d8b050"/><path d="M0.6 8.8L2.5 5.2H9.6L8 8.8Z" fill="#eccb68" stroke="#b08a30" stroke-width="0.4"/><path d="M6 3Q7 1 9 1.5" stroke="#3a5aa0" stroke-width="0.8" fill="none"/></g><g transform="translate(553.50,54.20)"><rect x="0.8" y="0.8" width="8.4" height="8.4" rx="0.6" fill="#3a4a8a" stroke="#24306a" stroke-width="0.5"/><rect x="2.5" y="1" width="5" height="3" fill="#e0e8f0"/><rect x="3.5" y="6" width="3" height="3" fill="#111"/></g><g transform="translate(568.50,54.20)"><rect x="0.8" y="1.8" width="8.4" height="7.4" rx="0.6" fill="#3a4a8a" stroke="#24306a" stroke-width="0.5"/><rect x="2" y="0.8" width="6" height="1.5" fill="#5a6aa0"/><rect x="2.5" y="4" width="5" height="4.5" fill="#bfe6ef"/></g><path d="M88.60 32.50V48.00" stroke="#d2d2d2" stroke-width="0.8"/><path d="M111.50 32.50V48.00" stroke="#d2d2d2" stroke-width="0.8"/><path d="M145.50 32.50V48.00" stroke="#d2d2d2" stroke-width="0.8"/><path d="M270.60 32.50V48.00" stroke="#d2d2d2" stroke-width="0.8"/><path d="M460.60 32.50V48.00" stroke="#d2d2d2" stroke-width="0.8"/><path d="M271.50 50.50V68.00" stroke="#d2d2d2" stroke-width="0.8"/><path d="M385.50 50.50V68.00" stroke="#d2d2d2" stroke-width="0.8"/><path d="M514.80 50.50V68.00" stroke="#d2d2d2" stroke-width="0.8"/><path d="M23.50 35.00V47.00" stroke="#a8a8a8" stroke-width="0.8" stroke-dasharray="0.8 1.6"/><path d="M91.70 35.00V47.00" stroke="#a8a8a8" stroke-width="0.8" stroke-dasharray="0.8 1.6"/><path d="M274.00 35.00V47.00" stroke="#a8a8a8" stroke-width="0.8" stroke-dasharray="0.8 1.6"/><path d="M464.00 35.00V47.00" stroke="#a8a8a8" stroke-width="0.8" stroke-dasharray="0.8 1.6"/><path d="M23.50 52.50V66.00" stroke="#a8a8a8" stroke-width="0.8" stroke-dasharray="0.8 1.6"/><path d="M274.60 52.50V66.00" stroke="#a8a8a8" stroke-width="0.8" stroke-dasharray="0.8 1.6"/><path d="M388.70 52.50V66.00" stroke="#a8a8a8" stroke-width="0.8" stroke-dasharray="0.8 1.6"/><path d="M518.00 52.50V66.00" stroke="#a8a8a8" stroke-width="0.8" stroke-dasharray="0.8 1.6"/><path d="M586.00 52.50V66.00" stroke="#a8a8a8" stroke-width="0.8" stroke-dasharray="0.8 1.6"/></svg>
<div style="left:20.00px;top:69.00px;width:156.50px;height:11.20px;background:#dcdcdc"></div>
<div class="t" style="left:21.00px;top:71.56px;font-size:6.4px;color:#111;">Display List</div>
<svg class="s" style="left:157.50px;top:71.00px" width="18" height="8"><path d="M1.5 2.5H5.5V6.5H1.5Z M3 1H7V5" fill="none" stroke="#222" stroke-width="0.9"/><path d="M11.5 1.5L16 6M16 1.5L11.5 6" stroke="#111" stroke-width="1.1"/></svg>
<div class="t" style="left:23.20px;top:89.22px;font-size:6.3px;color:#111;">Grouping</div>
<div style="left:53.30px;top:86.30px;width:120.00px;height:11.70px;background:#e9e9e9;border:1px solid #cfcfcf;box-sizing:border-box;border-radius:1px"></div>
<div class="t" style="left:55.50px;top:89.10px;font-size:6.5px;color:#000;">Display order</div>
<svg class="s" style="left:165.00px;top:90.50px" width="6" height="4"><path d="M0.5 0.5H5.5L3 3.5Z" fill="#111"/></svg>
<div style="left:20.00px;top:103.00px;width:156.80px;height:458.00px;background:#fff;border-top:1px solid #c8c8c8;border-right:1px solid #d0d0d0;box-sizing:border-box"></div>
<div style="left:20.00px;top:104.00px;width:155.5px;height:60px;overflow:hidden">
<div style="left:13.30px;top:0.20px;width:143.00px;height:10.20px;background:#f3f6fa;border:1px solid #e6e9ee;box-sizing:border-box"></div>
<svg class="s" style="left:6px;top:2.30px" width="5" height="6"><path d="M0.8 0.5L4 3L0.8 5.5Z" fill="none" stroke="#b0b0b0" stroke-width="0.9"/></svg>
<div style="left:15.20px;top:1.20px;width:7.60px;height:8.00px;background:#fff;border:1px solid #8e8e8e;box-sizing:border-box"></div>
<svg class="s" style="left:15.5px;top:1.30px" width="8" height="8"><path d="M1.6 4.2L3.2 6L6.6 1.6" fill="none" stroke="#111" stroke-width="1.6"/></svg>
<svg class="s" style="left:26.5px;top:0.90px" width="9.5" height="9"><circle cx="1.3" cy="1.3" r="1.05" fill="#7a9fd0"/><circle cx="1.3" cy="4.5" r="1.05" fill="#5f87c0"/><circle cx="1.3" cy="7.7" r="1.05" fill="#2e5aa8"/><circle cx="4.5" cy="1.3" r="1.05" fill="#7a9fd0"/><circle cx="4.5" cy="4.5" r="1.05" fill="#5f87c0"/><circle cx="4.5" cy="7.7" r="1.05" fill="#2e5aa8"/><circle cx="7.7" cy="1.3" r="1.05" fill="#7a9fd0"/><circle cx="7.7" cy="4.5" r="1.05" fill="#5f87c0"/><circle cx="7.7" cy="7.7" r="1.05" fill="#2e5aa8"/></svg>
<div class="t" style="left:39.80px;top:2.43px;font-size:6.45px;color:#1a1a1a;">Grid Values: GRI CMW_Article_Resample</div>
<svg class="s" style="left:6px;top:13.20px" width="5" height="6"><path d="M0.8 0.5L4 3L0.8 5.5Z" fill="none" stroke="#b0b0b0" stroke-width="0.9"/></svg>
<div style="left:15.20px;top:12.10px;width:7.60px;height:8.00px;background:#fff;border:1px solid #8e8e8e;box-sizing:border-box"></div>
<svg class="s" style="left:26.5px;top:11.80px" width="9.5" height="9"><circle cx="1.3" cy="1.3" r="1.05" fill="#7a9fd0"/><circle cx="1.3" cy="4.5" r="1.05" fill="#5f87c0"/><circle cx="1.3" cy="7.7" r="1.05" fill="#2e5aa8"/><circle cx="4.5" cy="1.3" r="1.05" fill="#7a9fd0"/><circle cx="4.5" cy="4.5" r="1.05" fill="#5f87c0"/><circle cx="4.5" cy="7.7" r="1.05" fill="#2e5aa8"/><circle cx="7.7" cy="1.3" r="1.05" fill="#7a9fd0"/><circle cx="7.7" cy="4.5" r="1.05" fill="#5f87c0"/><circle cx="7.7" cy="7.7" r="1.05" fill="#2e5aa8"/></svg>
<div class="t" style="left:39.80px;top:13.33px;font-size:6.45px;color:#1a1a1a;">Grid Values: GRI CMW_Article_Rotated.grd</div>
<svg class="s" style="left:6px;top:24.10px" width="5" height="6"><path d="M0.8 0.5L4 3L0.8 5.5Z" fill="none" stroke="#b0b0b0" stroke-width="0.9"/></svg>
<div style="left:15.20px;top:23.00px;width:7.60px;height:8.00px;background:#fff;border:1px solid #8e8e8e;box-sizing:border-box"></div>
<svg class="s" style="left:15.5px;top:23.10px" width="8" height="8"><path d="M1.6 4.2L3.2 6L6.6 1.6" fill="none" stroke="#111" stroke-width="1.6"/></svg>
<svg class="s" style="left:26.5px;top:22.60px" width="9.5" height="9"><rect x="0.0" y="0.0" width="3.1" height="3" fill="#e04020"/><rect x="0.0" y="3.0" width="3.1" height="3" fill="#f08020"/><rect x="0.0" y="6.0" width="3.1" height="3" fill="#f0c020"/><rect x="3.1" y="0.0" width="3.1" height="3" fill="#f0a020"/><rect x="3.1" y="3.0" width="3.1" height="3" fill="#60c040"/><rect x="3.1" y="6.0" width="3.1" height="3" fill="#3090d0"/><rect x="6.2" y="0.0" width="3.1" height="3" fill="#e0d020"/><rect x="6.2" y="3.0" width="3.1" height="3" fill="#40a0e0"/><rect x="6.2" y="6.0" width="3.1" height="3" fill="#2050b0"/></svg>
<div class="t" style="left:39.80px;top:24.23px;font-size:6.45px;color:#1a1a1a;">Grid Colorfill: GRI CMW_Article_Resampled</div>
<svg class="s" style="left:6px;top:35.00px" width="5" height="6"><path d="M0.8 0.5L4 3L0.8 5.5Z" fill="none" stroke="#b0b0b0" stroke-width="0.9"/></svg>
<div style="left:15.20px;top:33.90px;width:7.60px;height:8.00px;background:#fff;border:1px solid #8e8e8e;box-sizing:border-box"></div>
<svg class="s" style="left:26.5px;top:33.50px" width="9.5" height="9"><rect x="0.0" y="0.0" width="3.1" height="3" fill="#e04020"/><rect x="0.0" y="3.0" width="3.1" height="3" fill="#f08020"/><rect x="0.0" y="6.0" width="3.1" height="3" fill="#f0c020"/><rect x="3.1" y="0.0" width="3.1" height="3" fill="#f0a020"/><rect x="3.1" y="3.0" width="3.1" height="3" fill="#60c040"/><rect x="3.1" y="6.0" width="3.1" height="3" fill="#3090d0"/><rect x="6.2" y="0.0" width="3.1" height="3" fill="#e0d020"/><rect x="6.2" y="3.0" width="3.1" height="3" fill="#40a0e0"/><rect x="6.2" y="6.0" width="3.1" height="3" fill="#2050b0"/></svg>
<div class="t" style="left:39.80px;top:35.13px;font-size:6.45px;color:#1a1a1a;">Grid Colorfill: GRI CMW_Article_Rotated.grd</div>
<svg class="s" style="left:6px;top:45.90px" width="5" height="6"><path d="M0.8 0.5L4 3L0.8 5.5Z" fill="none" stroke="#b0b0b0" stroke-width="0.9"/></svg>
<div style="left:15.20px;top:44.80px;width:7.60px;height:8.00px;background:#fff;border:1px solid #8e8e8e;box-sizing:border-box"></div>
<svg class="s" style="left:26.5px;top:44.40px" width="9.5" height="9"><rect x="0.0" y="0.0" width="3.1" height="3" fill="#e04020"/><rect x="0.0" y="3.0" width="3.1" height="3" fill="#f08020"/><rect x="0.0" y="6.0" width="3.1" height="3" fill="#f0c020"/><rect x="3.1" y="0.0" width="3.1" height="3" fill="#f0a020"/><rect x="3.1" y="3.0" width="3.1" height="3" fill="#60c040"/><rect x="3.1" y="6.0" width="3.1" height="3" fill="#3090d0"/><rect x="6.2" y="0.0" width="3.1" height="3" fill="#e0d020"/><rect x="6.2" y="3.0" width="3.1" height="3" fill="#40a0e0"/><rect x="6.2" y="6.0" width="3.1" height="3" fill="#2050b0"/></svg>
<div class="t" style="left:39.80px;top:46.03px;font-size:6.45px;color:#1a1a1a;">Grid Colorfill: GRI CMW_Article_Input.grd</div>
</div>
<div style="left:20.00px;top:551.00px;width:156.50px;height:10.00px;background:#f0f0f0"></div>
<div style="left:31.80px;top:551.30px;width:120.00px;height:9.20px;background:#cdcdcd"></div>
<div style="left:88.70px;top:553.50px;width:6.30px;height:5.00px;background:#e8e8e8"></div>
<svg class="s" style="left:24.00px;top:553px" width="152" height="6"><path d="M3.5 0.8L1.2 3L3.5 5.2M147.5 0.8L149.8 3L147.5 5.2" fill="none" stroke="#333" stroke-width="1"/></svg>
<div style="left:180.00px;top:69.20px;width:517.00px;height:480.00px;background:#fff"></div>
<div style="left:687.00px;top:69.50px;width:10.00px;height:480.00px;background:#f0f0f0"></div>
<svg class="s" style="left:689.00px;top:73.00px" width="6" height="475"><path d="M1 3.5L3 1.5L5 3.5M1 470.0L3 472.0L5 470.0" fill="none" stroke="#aaa" stroke-width="0.7"/></svg>
<div style="left:180.00px;top:549.20px;width:517.00px;height:11.80px;background:#f0f0f0;border-top:1px solid #dcdcdc;box-sizing:border-box"></div>
<svg class="s" style="left:183.00px;top:552px" width="505" height="6"><path d="M3.5 0.8L1.5 3L3.5 5.2" fill="none" stroke="#bbb" stroke-width="0.8"/><path d="M497.0 0.8L499.0 3L497.0 5.2" fill="none" stroke="#999" stroke-width="0.8"/></svg>
<div style="left:20.00px;top:560.50px;width:677.00px;height:18.50px;background:#f0f0f0;border-top:1px solid #c2c2c2;box-sizing:border-box"></div>
<div style="left:179.80px;top:549.00px;width:1.60px;height:12.00px;background:#8a8a8a"></div>
<div style="left:588.60px;top:562.00px;width:1.00px;height:16.00px;background:#d6d6d6"></div>
<div class="t" style="left:592.60px;top:566.94px;font-size:5.6px;color:#000;">Map Sheet</div>
<svg class="s" style="left:625.10px;top:565.5px" width="10" height="10"><rect x="0.5" y="0.5" width="9" height="9" fill="#eceff2" stroke="#8a9ab0"/><path d="M2.2 5.5Q2.5 2.2 5.5 2.4Q8 3 7.6 5.6Q7 8 4.6 7.8" fill="none" stroke="#f08a40" stroke-width="1.6"/></svg>
<div class="t" style="left:638.20px;top:566.90px;font-size:5.66px;color:#000;">ARTICLE_TEST3</div>
<div style="left:686.50px;top:562.00px;width:1.00px;height:16.00px;background:#dedede"></div>
<svg class="s" style="left:689.00px;top:570px" width="8" height="8"><rect x="6" y="2" width="1" height="1" fill="#a8a8a8"/><rect x="4" y="4" width="1" height="1" fill="#a8a8a8"/><rect x="6" y="4" width="1" height="1" fill="#a8a8a8"/><rect x="2" y="6" width="1" height="1" fill="#a8a8a8"/><rect x="4" y="6" width="1" height="1" fill="#a8a8a8"/><rect x="6" y="6" width="1" height="1" fill="#a8a8a8"/></svg>
<div style="left:721.00px;top:20.00px;width:679.00px;height:559.00px;background:#f0f0f0"></div>
<div style="left:721.00px;top:20.00px;width:679.00px;height:9.50px;background:#f4f5f7"></div>
<div class="t" style="left:725.80px;top:21.26px;font-size:6.4px;color:#111;">File</div>
<div class="t" style="left:745.60px;top:21.26px;font-size:6.4px;color:#111;">MapSheet</div>
<div class="t" style="left:784.30px;top:21.26px;font-size:6.4px;color:#111;">Display</div>
<div class="t" style="left:814.80px;top:21.26px;font-size:6.4px;color:#111;">Layers</div>
<div class="t" style="left:844.00px;top:21.26px;font-size:6.4px;color:#111;">Edit</div>
<div class="t" style="left:864.60px;top:21.26px;font-size:6.4px;color:#111;">Lists</div>
<div class="t" style="left:887.50px;top:21.26px;font-size:6.4px;color:#111;">Query</div>
<div class="t" style="left:915.60px;top:21.26px;font-size:6.4px;color:#111;">Report</div>
<div class="t" style="left:945.60px;top:21.26px;font-size:6.4px;color:#111;">Admin</div>
<div class="t" style="left:973.00px;top:21.26px;font-size:6.4px;color:#111;">View</div>
<div class="t" style="left:996.00px;top:21.26px;font-size:6.4px;color:#111;">Help</div>
<div style="left:721.00px;top:29.50px;width:679.00px;height:18.00px;background:#efefef"></div>
<div style="left:721.00px;top:47.00px;width:679.00px;height:1.00px;background:#dadada"></div>
<div style="left:721.00px;top:48.00px;width:679.00px;height:19.50px;background:#d3d3d3"></div>
<div style="left:721.00px;top:48.00px;width:562.30px;height:19.50px;background:#f0f0f0"></div>
<div style="left:1283.30px;top:48.00px;width:1.00px;height:19.50px;background:#e2e2e2"></div>
<svg class="s" style="left:701.00px;top:0px" width="600" height="75"><g transform="translate(28.60,34.30)"><path d="M1.5 0.8H6.5L8.5 2.8V9.2H1.5Z" fill="#e9e2c8" stroke="#a89870" stroke-width="0.7"/><rect x="2.2" y="1.8" width="4" height="3" fill="#3f8fdc"/><rect x="2.2" y="4.8" width="4.5" height="3.5" fill="#78b04a"/><circle cx="7.6" cy="7.3" r="2.3" fill="#3aa543"/><path d="M6.2 7.3H8.6M7.7 6.3L8.7 7.3L7.7 8.3" stroke="#fff" stroke-width="0.8" fill="none"/></g><g transform="translate(43.70,34.30)"><path d="M1.5 0.8H6.5L8.5 2.8V9.2H1.5Z" fill="#eeeeee" stroke="#a0a0a0" stroke-width="0.7"/><rect x="1.8" y="1.6" width="4.2" height="3.8" fill="#d82222"/><path d="M2.8 4.8L3.9 2.4L5 4.8" stroke="#fff" stroke-width="0.6" fill="none"/><circle cx="7.6" cy="7.3" r="2.3" fill="#3aa543"/><path d="M6.2 7.3H8.6M7.7 6.3L8.7 7.3L7.7 8.3" stroke="#fff" stroke-width="0.8" fill="none"/></g><g transform="translate(58.40,34.30)"><path d="M1.5 0.8H6.5L8.5 2.8V9.2H1.5Z" fill="#eeeeee" stroke="#a0a0a0" stroke-width="0.7"/><circle cx="4" cy="3.8" r="2.6" fill="none" stroke="#e8982e" stroke-width="1.4"/><circle cx="7.6" cy="7.3" r="2.3" fill="#3aa543"/><path d="M6.2 7.3H8.6M7.7 6.3L8.7 7.3L7.7 8.3" stroke="#fff" stroke-width="0.8" fill="none"/></g><g transform="translate(73.90,34.30)"><path d="M1.5 0.8H6.5L8.5 2.8V9.2H1.5Z" fill="#eeeeee" stroke="#a0a0a0" stroke-width="0.7"/><circle cx="4" cy="3.8" r="2.6" fill="none" stroke="#e8a232" stroke-width="1.4"/><rect x="3.2" y="2" width="1.6" height="3.5" fill="#e8a232"/><circle cx="7.6" cy="7.3" r="2.3" fill="#3aa543"/><path d="M6.2 7.3H8.6M7.7 6.3L8.7 7.3L7.7 8.3" stroke="#fff" stroke-width="0.8" fill="none"/></g><g transform="translate(96.90,34.30)"><circle cx="5" cy="5" r="3.8" fill="#e6e6e6" stroke="#a8a8a8" stroke-width="0.9"/><path d="M3 5H7" stroke="#a0a0a0" stroke-width="1"/></g><g transform="translate(115.80,34.30)"><path d="M1.5 4.5L4.5 1.6V3.2H7.5Q9 3.2 9 5V9H6.4V5.6H4.5V7.2Z" fill="#3a9ad4" stroke="#2a6a9a" stroke-width="0.5"/></g><g transform="translate(130.90,34.30)"><path d="M1 4.5L4 1.6V3.2H7Q8.6 3.2 8.6 5V8H6V5.6H4V7.2Z" fill="#3a9ad4" stroke="#2a6a9a" stroke-width="0.5"/><path d="M5 7.6L6.3 9L8.6 6.2" stroke="#111" stroke-width="1" fill="none"/></g><g transform="translate(149.80,34.30)"><circle cx="4.2" cy="4.2" r="3" fill="#eef4fa" stroke="#666" stroke-width="0.9"/><path d="M6.4 6.4L9 9" stroke="#d4a030" stroke-width="1.8"/><path d="M2.8 4.2H5.6M4.2 2.8V5.6" stroke="#3a70b0" stroke-width="0.8"/></g><g transform="translate(164.90,34.30)"><circle cx="4.2" cy="4.2" r="3" fill="#f6f6f6" stroke="#aaa" stroke-width="0.9"/><path d="M6.4 6.4L9 9" stroke="#bbb" stroke-width="1.6"/><path d="M2.8 4.2H5.6" stroke="#999" stroke-width="0.8"/></g><g transform="translate(180.00,34.30)"><path d="M1 1L3.5 3.5M9 1L6.5 3.5M1 9L3.5 6.5M9 9L6.5 6.5M3.2 3.2H6.8V6.8H3.2Z" stroke="#3a3a3a" stroke-width="0.9" fill="none"/><path d="M0.6 0.6H2.6M0.6 0.6V2.6M9.4 0.6H7.4M9.4 0.6V2.6M0.6 9.4H2.6M0.6 9.4V7.4M9.4 9.4H7.4M9.4 9.4V7.4" stroke="#3a3a3a" stroke-width="1"/></g><g transform="translate(195.80,34.30)"><path d="M2.5 5V2.5Q3.2 1.4 3.9 2.5V1.6Q4.6 0.6 5.3 1.6V2.2Q6 1.2 6.7 2.2V3Q7.5 2.2 8 3.2V6.5Q7.6 9.2 5 9.3Q2.6 9.2 1.6 6.6Z" fill="#fafafa" stroke="#9a9a9a" stroke-width="0.7"/></g><g transform="translate(210.60,34.30)"><rect x="0.8" y="2.5" width="8.4" height="6" rx="0.8" fill="#9aa0a8" stroke="#5a6068" stroke-width="0.6"/><rect x="3" y="1.5" width="3" height="1.2" fill="#7a8088"/><circle cx="5" cy="5.5" r="1.8" fill="#3a4048"/></g><g transform="translate(225.60,34.30)"><rect x="1" y="1.5" width="6.5" height="7.5" fill="#e8c870" stroke="#a88a40" stroke-width="0.6"/><rect x="3.5" y="4" width="5.8" height="5.2" fill="#f4f4f4" stroke="#888" stroke-width="0.6"/><path d="M4.6 7.6Q6.4 4.8 8.2 7.6Z" fill="#3aa543"/></g><g transform="translate(241.00,34.30)"><rect x="0.8" y="1" width="8.4" height="2.5" fill="#e6a838" stroke="#a07020" stroke-width="0.5"/><path d="M1.2 3.5V9M8.8 3.5V9M2 6.3H8M2 6.3L3.2 5.3M2 6.3L3.2 7.3M8 6.3L6.8 5.3M8 6.3L6.8 7.3" stroke="#4a5a90" stroke-width="0.8" fill="none"/></g><g transform="translate(256.50,34.30)"><rect x="0.8" y="1.8" width="6.8" height="6.8" fill="#222" stroke="#555" stroke-width="0.5"/><rect x="2.4" y="3.4" width="6.8" height="6" fill="#bbb" opacity="0.6"/><path d="M6.5 1.5L8.5 0.8L9 2.8" stroke="#555" stroke-width="0.7" fill="none"/></g><g transform="translate(278.40,34.30)"><rect x="1" y="1" width="8" height="8" fill="#e4e4e4" stroke="#999" stroke-width="0.7"/><path d="M1 3.5H9M1 5.5H9M1 7.3H9M3.5 1V9" stroke="#bbb" stroke-width="0.5"/></g><g transform="translate(294.00,34.30)"><path d="M1 7.8Q2 3 6.5 3.8V2.2L9.2 5L6.5 7.8V6Q3.5 5.6 1 7.8Z" fill="#2e9a48" stroke="#1a6a30" stroke-width="0.4"/></g><g transform="translate(309.00,34.30)"><path d="M1 7.8Q2 3 6.5 3.8V2.2L9.2 5L6.5 7.8V6Q3.5 5.6 1 7.8Z" fill="#b8b8b8" stroke="#999" stroke-width="0.4"/><rect x="7.5" y="4.5" width="1.5" height="4.5" fill="#aaa"/></g><g transform="translate(325.00,34.30)"><path d="M2.5 4Q2.5 1 5 1Q7.5 1 7.5 4V6.5Q7.5 9.3 5 9.3Q2.5 9.3 2.5 6.5Z" fill="#f4f4f4" stroke="#a0a0a0" stroke-width="0.8"/><path d="M2.5 4.5H7.5M5 1V4.5" stroke="#a0a0a0" stroke-width="0.6"/></g><g transform="translate(340.00,34.30)"><path d="M2.5 4Q2.5 1 5 1Q7.5 1 7.5 4V6.5Q7.5 9.3 5 9.3Q2.5 9.3 2.5 6.5Z" fill="#f4f4f4" stroke="#a0a0a0" stroke-width="0.8"/><path d="M2.5 4.5H7.5M5 1V4.5" stroke="#a0a0a0" stroke-width="0.6"/></g><g transform="translate(355.00,34.30)"><rect x="0.8" y="0.8" width="8.4" height="8.4" rx="1" fill="#3a9ad8" stroke="#1f5f9a" stroke-width="0.8"/><path d="M5 1V9" stroke="#9ad0f0" stroke-width="0.6"/></g><g transform="translate(370.70,34.30)"><path d="M0.6 5.2Q5 0.8 9.4 5.2Q5 9 0.6 5.2Z" fill="#e8e8e8" stroke="#a0a0a0" stroke-width="0.7"/><circle cx="5" cy="5" r="1.6" fill="#a8a8a8"/></g><g transform="translate(386.00,34.30)"><path d="M0.6 5.2Q5 0.8 9.4 5.2Q5 9 0.6 5.2Z" fill="#e0d8d8" stroke="#a08888" stroke-width="0.7"/><circle cx="4.6" cy="5" r="1.5" fill="#a09090"/><path d="M5.8 5.6L9 8.8M9 5.6L5.8 8.8" stroke="#e02a2a" stroke-width="1.2"/></g><g transform="translate(401.00,34.30)"><rect x="0.8" y="0.8" width="5.5" height="6" fill="#f0f0f0" stroke="#aaa" stroke-width="0.6"/><rect x="3.5" y="3.2" width="5.7" height="6" fill="#e4e8ec" stroke="#999" stroke-width="0.6"/><path d="M4.5 5H8M4.5 6.5H8" stroke="#8ab" stroke-width="0.5"/></g><g transform="translate(416.00,34.30)"><rect x="1.2" y="1.5" width="6" height="7.5" fill="#f2f2f2" stroke="#bbb" stroke-width="0.6"/><rect x="4" y="4" width="5.2" height="5.2" fill="#f6f6f6" stroke="#bbb" stroke-width="0.6"/></g><g transform="translate(431.50,34.30)"><path d="M1.5 2H8.5M3.5 2V1H6.5V2M2.2 2.5L2.8 9.2H7.2L7.8 2.5Z" fill="#9a9a9a" stroke="#777" stroke-width="0.6"/></g><g transform="translate(446.60,34.30)"><circle cx="3" cy="6.5" r="1.8" fill="#777"/><circle cx="5.2" cy="5" r="1.3" fill="#999"/><rect x="6.8" y="1" width="2" height="2" fill="none" stroke="#aaa" stroke-width="0.5"/><rect x="6.8" y="5" width="2" height="2" fill="none" stroke="#aaa" stroke-width="0.5"/></g><g transform="translate(468.50,34.30)"><rect x="2" y="0.8" width="6" height="8.6" rx="0.6" fill="#3a3a3a" stroke="#222" stroke-width="0.5"/><path d="M3 3H7M3 4.6H7M3 6.2H7M3 7.8H7" stroke="#ccc" stroke-width="0.6"/></g><g transform="translate(484.00,34.30)"><circle cx="1.0" cy="1.0" r="0.7" fill="#3a58c0"/><circle cx="1.0" cy="3.6" r="0.7" fill="#3a58c0"/><circle cx="1.0" cy="6.2" r="0.7" fill="#3a58c0"/><circle cx="1.0" cy="8.8" r="0.7" fill="#3a58c0"/><circle cx="3.6" cy="1.0" r="0.7" fill="#3a58c0"/><circle cx="3.6" cy="3.6" r="0.7" fill="#3a58c0"/><circle cx="3.6" cy="6.2" r="0.7" fill="#3a58c0"/><circle cx="3.6" cy="8.8" r="0.7" fill="#3a58c0"/><circle cx="6.2" cy="1.0" r="0.7" fill="#3a58c0"/><circle cx="6.2" cy="3.6" r="0.7" fill="#3a58c0"/><circle cx="6.2" cy="6.2" r="0.7" fill="#3a58c0"/><circle cx="6.2" cy="8.8" r="0.7" fill="#3a58c0"/><circle cx="8.8" cy="1.0" r="0.7" fill="#3a58c0"/><circle cx="8.8" cy="3.6" r="0.7" fill="#3a58c0"/><circle cx="8.8" cy="6.2" r="0.7" fill="#3a58c0"/><circle cx="8.8" cy="8.8" r="0.7" fill="#3a58c0"/><path d="M2.5 8L7.5 2.5L9 4L4 9.2Z" fill="#e8a22a" stroke="#8a5a10" stroke-width="0.4"/></g><g transform="translate(499.50,34.30)"><path d="M1 3Q1 1 4 1Q8 1 8 3.5Q8 6 5 6Q2 8 1 5Z" fill="#ddd" stroke="#888" stroke-width="0.8"/><path d="M3 8.6L8 3.2L9.4 4.6L4.4 9.6Z" fill="#e8a22a" stroke="#8a5a10" stroke-width="0.4"/><path d="M8 3.2L9.4 4.6" stroke="#d03030" stroke-width="1"/></g><g transform="translate(514.80,34.30)"><path d="M0.8 5.5L3.5 3.5L4.5 6L2 9Z" fill="#3a60c0"/><path d="M3 8.6L8 3.2L9.4 4.6L4.4 9.6Z" fill="#e8a22a" stroke="#8a5a10" stroke-width="0.4"/><path d="M8 3.2L9.4 4.6" stroke="#d03030" stroke-width="1"/></g><g transform="translate(530.00,34.30)"><rect x="0.6" y="2.2" width="8.8" height="5.6" rx="0.8" fill="#e8e8e8" stroke="#aaa" stroke-width="0.7"/><rect x="3" y="4.2" width="4" height="1.6" fill="#ccc"/></g><g transform="translate(28.20,52.70)"><path d="M0.8 2H4L5 3H8.5V8.5H0.8Z" fill="#e8c870" stroke="#b09040" stroke-width="0.5"/><circle cx="6.3" cy="7" r="2.4" fill="#3aa84a"/><path d="M5 7H7.6M6.3 5.7V8.3" stroke="#fff" stroke-width="0.8"/><path d="M6 1.6L8.6 0.6" stroke="#333" stroke-width="0.6"/></g><g transform="translate(43.30,52.70)"><path d="M5 0.8L6.5 4.5L5 5.5L3.5 4.5Z" fill="#333"/><path d="M1.2 5H8.8" stroke="#333" stroke-width="0.8"/><path d="M2 9Q4 6 8.8 7.5" stroke="#6a7aa0" stroke-width="0.8" fill="none"/><path d="M3 6.5Q5 8 7 6.5" stroke="#333" stroke-width="0.8" fill="none"/></g><g transform="translate(58.70,52.70)"><path d="M1 2.5L9 8M1 8L9 2.5" stroke="#4a5a78" stroke-width="0.9"/><circle cx="8" cy="2" r="1.4" fill="#333"/><circle cx="8" cy="8.4" r="1.4" fill="#333"/></g><g transform="translate(74.00,52.70)"><circle cx="2" cy="2" r="1.6" fill="none" stroke="#5a6a98" stroke-width="0.7"/><circle cx="2" cy="5" r="1.6" fill="none" stroke="#5a6a98" stroke-width="0.7"/><circle cx="2" cy="8" r="1.6" fill="none" stroke="#5a6a98" stroke-width="0.7"/><circle cx="5" cy="2" r="1.6" fill="none" stroke="#5a6a98" stroke-width="0.7"/><circle cx="5" cy="5" r="1.6" fill="none" stroke="#5a6a98" stroke-width="0.7"/><circle cx="5" cy="8" r="1.6" fill="none" stroke="#5a6a98" stroke-width="0.7"/><circle cx="8" cy="2" r="1.6" fill="none" stroke="#5a6a98" stroke-width="0.7"/><circle cx="8" cy="5" r="1.6" fill="none" stroke="#5a6a98" stroke-width="0.7"/><circle cx="8" cy="8" r="1.6" fill="none" stroke="#5a6a98" stroke-width="0.7"/></g><g transform="translate(89.00,52.70)"><rect x="0.6" y="0.6" width="2.2" height="2.2" fill="#d23a1a"/><rect x="0.6" y="2.8000000000000003" width="2.2" height="2.2" fill="#e86a20"/><rect x="0.6" y="5.0" width="2.2" height="2.2" fill="#e8b020"/><rect x="0.6" y="7.2" width="2.2" height="2.2" fill="#c8c020"/><rect x="2.8000000000000003" y="0.6" width="2.2" height="2.2" fill="#e89a20"/><rect x="2.8000000000000003" y="2.8000000000000003" width="2.2" height="2.2" fill="#e8c020"/><rect x="2.8000000000000003" y="5.0" width="2.2" height="2.2" fill="#70c040"/><rect x="2.8000000000000003" y="7.2" width="2.2" height="2.2" fill="#40a880"/><rect x="5.0" y="0.6" width="2.2" height="2.2" fill="#e8d020"/><rect x="5.0" y="2.8000000000000003" width="2.2" height="2.2" fill="#8ac840"/><rect x="5.0" y="5.0" width="2.2" height="2.2" fill="#30a0d0"/><rect x="5.0" y="7.2" width="2.2" height="2.2" fill="#2080c0"/><rect x="7.2" y="0.6" width="2.2" height="2.2" fill="#e8e040"/><rect x="7.2" y="2.8000000000000003" width="2.2" height="2.2" fill="#40b0a0"/><rect x="7.2" y="5.0" width="2.2" height="2.2" fill="#2060b0"/><rect x="7.2" y="7.2" width="2.2" height="2.2" fill="#1a4a98"/></g><g transform="translate(104.60,52.70)"><path d="M1 2.6H9M1 5.3H9M1 8H9M2.6 1V9M5.3 1V9M8 1V9" stroke="#5a6a98" stroke-width="0.4"/><circle cx="2.6" cy="2.6" r="0.8" fill="#243a8a"/><circle cx="2.6" cy="5.300000000000001" r="0.8" fill="#243a8a"/><circle cx="2.6" cy="8.0" r="0.8" fill="#243a8a"/><circle cx="5.300000000000001" cy="2.6" r="0.8" fill="#243a8a"/><circle cx="5.300000000000001" cy="5.300000000000001" r="0.8" fill="#243a8a"/><circle cx="5.300000000000001" cy="8.0" r="0.8" fill="#243a8a"/><circle cx="8.0" cy="2.6" r="0.8" fill="#243a8a"/><circle cx="8.0" cy="5.300000000000001" r="0.8" fill="#243a8a"/><circle cx="8.0" cy="8.0" r="0.8" fill="#243a8a"/></g><g transform="translate(119.60,52.70)"><path d="M1.5 1.5H8.5M1.5 3H8.5M1.5 4.5H8.5M1.5 6H8M1.5 7.5H6Q7.5 7.5 8 9" stroke="#7a88a0" stroke-width="0.8" fill="none"/></g><g transform="translate(134.00,52.70)"><path d="M1 9L8 2" stroke="#d82a2a" stroke-width="1"/><path d="M9.4 0.8L5.8 2L8.2 4.4Z" fill="#d82a2a"/></g><g transform="translate(150.00,52.70)"><circle cx="4.6" cy="4.6" r="3.8" fill="#2a78d0"/><path d="M2 3Q4 2 5 4Q3 6 2 5Z" fill="#e8f0f8"/><circle cx="7" cy="7.2" r="2.2" fill="#3aa84a"/><path d="M5.8 7.2H8.2M7 6V8.4" stroke="#fff" stroke-width="0.7"/></g><g transform="translate(165.00,52.70)"><rect x="0.6" y="0.6" width="8.8" height="8.8" fill="#f4f4f4" stroke="#888" stroke-width="0.5"/><circle cx="5" cy="4" r="2.6" fill="#111"/><path d="M0.6 7Q5 4.8 9.4 6.5V9.4H0.6Z" fill="#1a4a9a"/><path d="M0.6 7.4Q4 6 6 6.6" stroke="#e8a020" stroke-width="0.8" fill="none"/></g><g transform="translate(180.90,52.70)"><path d="M1 2L4 1L7 2.2L8.6 5.5L5.5 8.2L1.5 7Z" fill="none" stroke="#3aa84a" stroke-width="1"/><circle cx="7.3" cy="7.3" r="2" fill="#3aa84a"/><path d="M6.2 7.3H8.4" stroke="#fff" stroke-width="0.7"/></g><g transform="translate(195.80,52.70)"><circle cx="3.5" cy="6.2" r="2.8" fill="#4a9a3a"/><circle cx="6.5" cy="3.8" r="2.8" fill="#5aaa40"/><circle cx="3.5" cy="6.2" r="1" fill="#e8a040"/><circle cx="6.6" cy="3.6" r="1" fill="#e8a040"/></g><g transform="translate(211.00,52.70)"><path d="M1.5 0.8H6.5L8.5 2.8V9.2H1.5Z" fill="#eeeeee" stroke="#999" stroke-width="0.7"/><rect x="2.2" y="3" width="5.5" height="5.5" fill="#5aaa3a"/><path d="M2.2 5Q5 3 7.7 4.5V3H2.2Z" fill="#3a7ad0"/></g><g transform="translate(226.00,52.70)"><path d="M1.5 0.8H6.5L8.5 2.8V9.2H1.5Z" fill="#f0f0f0" stroke="#999" stroke-width="0.7"/><rect x="3" y="4" width="4" height="4" fill="#8ad07a" stroke="#3a8a3a" stroke-width="0.5"/></g><g transform="translate(242.00,52.70)"><path d="M1.5 0.8H6.5L8.5 2.8V9.2H1.5Z" fill="#e6f0f8" stroke="#4a8ac0" stroke-width="0.7"/><rect x="1.5" y="4.5" width="8" height="4.5" fill="#2a8ad8"/><path d="M3 6.5H8" stroke="#fff" stroke-width="0.6"/></g><g transform="translate(257.00,52.70)"><path d="M3.2 0.8V9.4M7 0.8V9.4M0.8 3.2H9.4M0.8 7H9.4" stroke="#3a4e80" stroke-width="0.9"/></g><g transform="translate(280.50,52.70)"><text x="5" y="6.6" font-family="Liberation Sans" font-size="3.8" font-weight="bold" text-anchor="middle" fill="#6a7890">ABC</text></g><g transform="translate(295.20,52.70)"><path d="M1 9Q3 8 4 5Q5.5 2 9 1" stroke="#2a6ab0" stroke-width="1.1" fill="none"/></g><g transform="translate(310.30,52.70)"><path d="M1 2Q4 0.5 8 1.5Q9.5 4 8 6Q9 9 5 9Q2 9 2 6.5Q0.5 4 1 2Z" fill="#3a6aa8" stroke="#2a4a80" stroke-width="0.5"/></g><g transform="translate(325.40,52.70)"><rect x="1" y="1" width="8" height="8" fill="#3a6aa8" stroke="#2a4a80" stroke-width="0.5"/></g><g transform="translate(340.60,52.70)"><circle cx="5" cy="5" r="4" fill="#3a6aa8" stroke="#2a4a80" stroke-width="0.5"/></g><g transform="translate(355.80,52.70)"><ellipse cx="5" cy="5" rx="4.2" ry="3.4" transform="rotate(30 5 5)" fill="#3a6aa8" stroke="#2a4a80" stroke-width="0.5"/></g><g transform="translate(371.00,52.70)"><path d="M5 0.5V9.5M0.5 5H9.5" stroke="#3a7ad0" stroke-width="0.9"/><ellipse cx="5" cy="5" rx="3.3" ry="2" fill="#3a7ad0"/><ellipse cx="5" cy="4.5" rx="2" ry="1" fill="#cfe4f6"/></g><g transform="translate(394.00,52.70)"><text x="5" y="4.4" font-family="Liberation Sans" font-size="4" font-weight="bold" text-anchor="middle" fill="#2a3a8a">N</text><path d="M5 4.8L6.5 9L5 8L3.5 9Z" fill="#2a4ab0"/></g><g transform="translate(409.00,52.70)"><rect x="4" y="1" width="2" height="5" fill="#aaa"/><path d="M0.8 7.5H9.2V9H0.8Z" fill="#333"/><path d="M1 6V7.5M9 6V7.5" stroke="#333" stroke-width="0.8"/></g><g transform="translate(424.00,52.70)"><rect x="3.6" y="0.6" width="3" height="8.8" fill="none" stroke="#555" stroke-width="0.5"/><rect x="3.8" y="0.8" width="2.6" height="1.3" fill="#d020d0"/><rect x="3.8" y="2.0" width="2.6" height="1.3" fill="#4040e0"/><rect x="3.8" y="3.2" width="2.6" height="1.3" fill="#20b0e0"/><rect x="3.8" y="4.3999999999999995" width="2.6" height="1.3" fill="#30c040"/><rect x="3.8" y="5.6" width="2.6" height="1.3" fill="#d0e020"/><rect x="3.8" y="6.8" width="2.6" height="1.3" fill="#f0a020"/><rect x="3.8" y="7.999999999999999" width="2.6" height="1.3" fill="#e02020"/></g><g transform="translate(439.00,52.70)"><rect x="0.6" y="1" width="8.8" height="8" fill="#eee" stroke="#999" stroke-width="0.7"/><rect x="2" y="2" width="6" height="1.6" fill="#bbb"/><rect x="4.5" y="4.5" width="4" height="3.8" fill="#a8d0f0"/></g><g transform="translate(454.00,52.70)"><rect x="0.6" y="0.8" width="8.8" height="8.4" rx="0.8" fill="#f6f6f6" stroke="#d04848" stroke-width="0.9"/><rect x="2.6" y="2.8" width="1.4" height="1.4" fill="#555"/><rect x="2.6" y="5.8" width="1.4" height="1.4" fill="#555"/><rect x="5.6" y="2.8" width="1.4" height="1.4" fill="#555"/><rect x="5.6" y="5.8" width="1.4" height="1.4" fill="#555"/></g><g transform="translate(469.60,52.70)"><rect x="0.6" y="0.8" width="8.8" height="8.4" rx="0.8" fill="#f2f2f2" stroke="#888" stroke-width="0.7"/><path d="M2 3.5L5 2L8 4L7 8L3 7.5Z" fill="#eca060"/></g><g transform="translate(484.60,52.70)"><rect x="0.6" y="0.8" width="8.8" height="8.4" rx="0.8" fill="#f2f2f2" stroke="#888" stroke-width="0.7"/><circle cx="3.2" cy="3.4" r="0.9" fill="#e07a40"/><circle cx="3.2" cy="6.6" r="0.9" fill="#e07a40"/><circle cx="6.6" cy="3.4" r="0.9" fill="#e07a40"/><circle cx="6.6" cy="6.6" r="0.9" fill="#e07a40"/></g><g transform="translate(499.80,52.70)"><rect x="0.6" y="2.2" width="8.8" height="5.8" rx="0.8" fill="#e4e4e4" stroke="#999" stroke-width="0.7"/><rect x="3" y="4.2" width="4" height="1.8" fill="#bbb"/></g><g transform="translate(523.60,52.70)"><path d="M2 1.5H6.5L8.5 3.5V9.3H2Z" fill="#cfeef4" stroke="#8aa8b0" stroke-width="0.6"/><circle cx="2" cy="2" r="1.6" fill="#f0a030"/></g><g transform="translate(538.00,52.70)"><path d="M0.6 3H3.5L4.5 4H8.5V8.8H0.6Z" fill="#d8b050"/><path d="M0.6 8.8L2.5 5.2H9.6L8 8.8Z" fill="#eccb68" stroke="#b08a30" stroke-width="0.4"/><path d="M6 3Q7 1 9 1.5" stroke="#3a5aa0" stroke-width="0.8" fill="none"/></g><g transform="translate(553.50,52.70)"><rect x="0.8" y="0.8" width="8.4" height="8.4" rx="0.6" fill="#3a4a8a" stroke="#24306a" stroke-width="0.5"/><rect x="2.5" y="1" width="5" height="3" fill="#e0e8f0"/><rect x="3.5" y="6" width="3" height="3" fill="#111"/></g><g transform="translate(568.50,52.70)"><rect x="0.8" y="1.8" width="8.4" height="7.4" rx="0.6" fill="#3a4a8a" stroke="#24306a" stroke-width="0.5"/><rect x="2" y="0.8" width="6" height="1.5" fill="#5a6aa0"/><rect x="2.5" y="4" width="5" height="4.5" fill="#bfe6ef"/></g><path d="M88.60 31.00V46.50" stroke="#d2d2d2" stroke-width="0.8"/><path d="M111.50 31.00V46.50" stroke="#d2d2d2" stroke-width="0.8"/><path d="M145.50 31.00V46.50" stroke="#d2d2d2" stroke-width="0.8"/><path d="M270.60 31.00V46.50" stroke="#d2d2d2" stroke-width="0.8"/><path d="M460.60 31.00V46.50" stroke="#d2d2d2" stroke-width="0.8"/><path d="M271.50 49.00V66.50" stroke="#d2d2d2" stroke-width="0.8"/><path d="M385.50 49.00V66.50" stroke="#d2d2d2" stroke-width="0.8"/><path d="M514.80 49.00V66.50" stroke="#d2d2d2" stroke-width="0.8"/><path d="M23.50 33.50V45.50" stroke="#a8a8a8" stroke-width="0.8" stroke-dasharray="0.8 1.6"/><path d="M91.70 33.50V45.50" stroke="#a8a8a8" stroke-width="0.8" stroke-dasharray="0.8 1.6"/><path d="M274.00 33.50V45.50" stroke="#a8a8a8" stroke-width="0.8" stroke-dasharray="0.8 1.6"/><path d="M464.00 33.50V45.50" stroke="#a8a8a8" stroke-width="0.8" stroke-dasharray="0.8 1.6"/><path d="M23.50 51.00V64.50" stroke="#a8a8a8" stroke-width="0.8" stroke-dasharray="0.8 1.6"/><path d="M274.60 51.00V64.50" stroke="#a8a8a8" stroke-width="0.8" stroke-dasharray="0.8 1.6"/><path d="M388.70 51.00V64.50" stroke="#a8a8a8" stroke-width="0.8" stroke-dasharray="0.8 1.6"/><path d="M518.00 51.00V64.50" stroke="#a8a8a8" stroke-width="0.8" stroke-dasharray="0.8 1.6"/><path d="M586.00 51.00V64.50" stroke="#a8a8a8" stroke-width="0.8" stroke-dasharray="0.8 1.6"/></svg>
<div style="left:721.00px;top:68.30px;width:156.50px;height:11.20px;background:#dcdcdc"></div>
<div class="t" style="left:722.00px;top:70.86px;font-size:6.4px;color:#111;">Display List</div>
<svg class="s" style="left:858.50px;top:70.30px" width="18" height="8"><path d="M1.5 2.5H5.5V6.5H1.5Z M3 1H7V5" fill="none" stroke="#222" stroke-width="0.9"/><path d="M11.5 1.5L16 6M16 1.5L11.5 6" stroke="#111" stroke-width="1.1"/></svg>
<div class="t" style="left:724.20px;top:88.52px;font-size:6.3px;color:#111;">Grouping</div>
<div style="left:754.30px;top:85.60px;width:120.00px;height:11.70px;background:#e9e9e9;border:1px solid #cfcfcf;box-sizing:border-box;border-radius:1px"></div>
<div class="t" style="left:756.50px;top:88.40px;font-size:6.5px;color:#000;">Display order</div>
<svg class="s" style="left:866.00px;top:89.80px" width="6" height="4"><path d="M0.5 0.5H5.5L3 3.5Z" fill="#111"/></svg>
<div style="left:721.00px;top:102.30px;width:156.80px;height:458.70px;background:#fff;border-top:1px solid #c8c8c8;border-right:1px solid #d0d0d0;box-sizing:border-box"></div>
<div style="left:721.00px;top:103.30px;width:155.5px;height:60px;overflow:hidden">
<div style="left:13.30px;top:0.20px;width:143.00px;height:10.20px;background:#f3f6fa;border:1px solid #e6e9ee;box-sizing:border-box"></div>
<svg class="s" style="left:6px;top:2.30px" width="5" height="6"><path d="M0.8 0.5L4 3L0.8 5.5Z" fill="none" stroke="#b0b0b0" stroke-width="0.9"/></svg>
<div style="left:15.20px;top:1.20px;width:7.60px;height:8.00px;background:#fff;border:1px solid #8e8e8e;box-sizing:border-box"></div>
<svg class="s" style="left:26.5px;top:0.90px" width="9.5" height="9"><circle cx="1.3" cy="1.3" r="1.05" fill="#7a9fd0"/><circle cx="1.3" cy="4.5" r="1.05" fill="#5f87c0"/><circle cx="1.3" cy="7.7" r="1.05" fill="#2e5aa8"/><circle cx="4.5" cy="1.3" r="1.05" fill="#7a9fd0"/><circle cx="4.5" cy="4.5" r="1.05" fill="#5f87c0"/><circle cx="4.5" cy="7.7" r="1.05" fill="#2e5aa8"/><circle cx="7.7" cy="1.3" r="1.05" fill="#7a9fd0"/><circle cx="7.7" cy="4.5" r="1.05" fill="#5f87c0"/><circle cx="7.7" cy="7.7" r="1.05" fill="#2e5aa8"/></svg>
<div class="t" style="left:39.80px;top:2.43px;font-size:6.45px;color:#1a1a1a;">Grid Values: GRI CMW_Article_Resample</div>
<svg class="s" style="left:6px;top:13.20px" width="5" height="6"><path d="M0.8 0.5L4 3L0.8 5.5Z" fill="none" stroke="#b0b0b0" stroke-width="0.9"/></svg>
<div style="left:15.20px;top:12.10px;width:7.60px;height:8.00px;background:#fff;border:1px solid #8e8e8e;box-sizing:border-box"></div>
<svg class="s" style="left:15.5px;top:12.20px" width="8" height="8"><path d="M1.6 4.2L3.2 6L6.6 1.6" fill="none" stroke="#111" stroke-width="1.6"/></svg>
<svg class="s" style="left:26.5px;top:11.80px" width="9.5" height="9"><circle cx="1.3" cy="1.3" r="1.05" fill="#7a9fd0"/><circle cx="1.3" cy="4.5" r="1.05" fill="#5f87c0"/><circle cx="1.3" cy="7.7" r="1.05" fill="#2e5aa8"/><circle cx="4.5" cy="1.3" r="1.05" fill="#7a9fd0"/><circle cx="4.5" cy="4.5" r="1.05" fill="#5f87c0"/><circle cx="4.5" cy="7.7" r="1.05" fill="#2e5aa8"/><circle cx="7.7" cy="1.3" r="1.05" fill="#7a9fd0"/><circle cx="7.7" cy="4.5" r="1.05" fill="#5f87c0"/><circle cx="7.7" cy="7.7" r="1.05" fill="#2e5aa8"/></svg>
<div class="t" style="left:39.80px;top:13.33px;font-size:6.45px;color:#1a1a1a;">Grid Values: GRI CMW_Article_Rotated.grd</div>
<svg class="s" style="left:6px;top:24.10px" width="5" height="6"><path d="M0.8 0.5L4 3L0.8 5.5Z" fill="none" stroke="#b0b0b0" stroke-width="0.9"/></svg>
<div style="left:15.20px;top:23.00px;width:7.60px;height:8.00px;background:#fff;border:1px solid #8e8e8e;box-sizing:border-box"></div>
<svg class="s" style="left:26.5px;top:22.60px" width="9.5" height="9"><rect x="0.0" y="0.0" width="3.1" height="3" fill="#e04020"/><rect x="0.0" y="3.0" width="3.1" height="3" fill="#f08020"/><rect x="0.0" y="6.0" width="3.1" height="3" fill="#f0c020"/><rect x="3.1" y="0.0" width="3.1" height="3" fill="#f0a020"/><rect x="3.1" y="3.0" width="3.1" height="3" fill="#60c040"/><rect x="3.1" y="6.0" width="3.1" height="3" fill="#3090d0"/><rect x="6.2" y="0.0" width="3.1" height="3" fill="#e0d020"/><rect x="6.2" y="3.0" width="3.1" height="3" fill="#40a0e0"/><rect x="6.2" y="6.0" width="3.1" height="3" fill="#2050b0"/></svg>
<div class="t" style="left:39.80px;top:24.23px;font-size:6.45px;color:#1a1a1a;">Grid Colorfill: GRI CMW_Article_Resampled</div>
<svg class="s" style="left:6px;top:35.00px" width="5" height="6"><path d="M0.8 0.5L4 3L0.8 5.5Z" fill="none" stroke="#b0b0b0" stroke-width="0.9"/></svg>
<div style="left:15.20px;top:33.90px;width:7.60px;height:8.00px;background:#fff;border:1px solid #8e8e8e;box-sizing:border-box"></div>
<svg class="s" style="left:15.5px;top:34.00px" width="8" height="8"><path d="M1.6 4.2L3.2 6L6.6 1.6" fill="none" stroke="#111" stroke-width="1.6"/></svg>
<svg class="s" style="left:26.5px;top:33.50px" width="9.5" height="9"><rect x="0.0" y="0.0" width="3.1" height="3" fill="#e04020"/><rect x="0.0" y="3.0" width="3.1" height="3" fill="#f08020"/><rect x="0.0" y="6.0" width="3.1" height="3" fill="#f0c020"/><rect x="3.1" y="0.0" width="3.1" height="3" fill="#f0a020"/><rect x="3.1" y="3.0" width="3.1" height="3" fill="#60c040"/><rect x="3.1" y="6.0" width="3.1" height="3" fill="#3090d0"/><rect x="6.2" y="0.0" width="3.1" height="3" fill="#e0d020"/><rect x="6.2" y="3.0" width="3.1" height="3" fill="#40a0e0"/><rect x="6.2" y="6.0" width="3.1" height="3" fill="#2050b0"/></svg>
<div class="t" style="left:39.80px;top:35.13px;font-size:6.45px;color:#1a1a1a;">Grid Colorfill: GRI CMW_Article_Rotated.grd</div>
<svg class="s" style="left:6px;top:45.90px" width="5" height="6"><path d="M0.8 0.5L4 3L0.8 5.5Z" fill="none" stroke="#b0b0b0" stroke-width="0.9"/></svg>
<div style="left:15.20px;top:44.80px;width:7.60px;height:8.00px;background:#fff;border:1px solid #8e8e8e;box-sizing:border-box"></div>
<svg class="s" style="left:26.5px;top:44.40px" width="9.5" height="9"><rect x="0.0" y="0.0" width="3.1" height="3" fill="#e04020"/><rect x="0.0" y="3.0" width="3.1" height="3" fill="#f08020"/><rect x="0.0" y="6.0" width="3.1" height="3" fill="#f0c020"/><rect x="3.1" y="0.0" width="3.1" height="3" fill="#f0a020"/><rect x="3.1" y="3.0" width="3.1" height="3" fill="#60c040"/><rect x="3.1" y="6.0" width="3.1" height="3" fill="#3090d0"/><rect x="6.2" y="0.0" width="3.1" height="3" fill="#e0d020"/><rect x="6.2" y="3.0" width="3.1" height="3" fill="#40a0e0"/><rect x="6.2" y="6.0" width="3.1" height="3" fill="#2050b0"/></svg>
<div class="t" style="left:39.80px;top:46.03px;font-size:6.45px;color:#1a1a1a;">Grid Colorfill: GRI CMW_Article_Input.grd</div>
</div>
<div style="left:721.00px;top:551.00px;width:156.50px;height:10.00px;background:#f0f0f0"></div>
<div style="left:732.80px;top:551.30px;width:120.00px;height:9.20px;background:#cdcdcd"></div>
<div style="left:789.70px;top:553.50px;width:6.30px;height:5.00px;background:#e8e8e8"></div>
<svg class="s" style="left:725.00px;top:553px" width="152" height="6"><path d="M3.5 0.8L1.2 3L3.5 5.2M147.5 0.8L149.8 3L147.5 5.2" fill="none" stroke="#333" stroke-width="1"/></svg>
<div style="left:881.00px;top:67.70px;width:519.00px;height:481.50px;background:#fff"></div>
<div style="left:1390.00px;top:68.00px;width:10.00px;height:481.50px;background:#f0f0f0"></div>
<svg class="s" style="left:1392.00px;top:71.50px" width="6" height="475"><path d="M1 3.5L3 1.5L5 3.5M1 471.5L3 473.5L5 471.5" fill="none" stroke="#aaa" stroke-width="0.7"/></svg>
<div style="left:881.00px;top:549.20px;width:519.00px;height:11.80px;background:#f0f0f0;border-top:1px solid #dcdcdc;box-sizing:border-box"></div>
<svg class="s" style="left:884.00px;top:552px" width="507" height="6"><path d="M3.5 0.8L1.5 3L3.5 5.2" fill="none" stroke="#bbb" stroke-width="0.8"/><path d="M499.0 0.8L501.0 3L499.0 5.2" fill="none" stroke="#999" stroke-width="0.8"/></svg>
<div style="left:721.00px;top:560.50px;width:679.00px;height:18.50px;background:#f0f0f0;border-top:1px solid #c2c2c2;box-sizing:border-box"></div>
<div style="left:880.80px;top:549.00px;width:1.60px;height:12.00px;background:#8a8a8a"></div>
<div style="left:1291.60px;top:562.00px;width:1.00px;height:16.00px;background:#d6d6d6"></div>
<div class="t" style="left:1295.60px;top:566.94px;font-size:5.6px;color:#000;">Map Sheet</div>
<svg class="s" style="left:1328.10px;top:565.5px" width="10" height="10"><rect x="0.5" y="0.5" width="9" height="9" fill="#eceff2" stroke="#8a9ab0"/><path d="M2.2 5.5Q2.5 2.2 5.5 2.4Q8 3 7.6 5.6Q7 8 4.6 7.8" fill="none" stroke="#f08a40" stroke-width="1.6"/></svg>
<div class="t" style="left:1341.20px;top:566.90px;font-size:5.66px;color:#000;">ARTICLE_TEST3</div>
<div style="left:1389.50px;top:562.00px;width:1.00px;height:16.00px;background:#dedede"></div>
<svg class="s" style="left:1392.00px;top:570px" width="8" height="8"><rect x="6" y="2" width="1" height="1" fill="#a8a8a8"/><rect x="4" y="4" width="1" height="1" fill="#a8a8a8"/><rect x="6" y="4" width="1" height="1" fill="#a8a8a8"/><rect x="2" y="6" width="1" height="1" fill="#a8a8a8"/><rect x="4" y="6" width="1" height="1" fill="#a8a8a8"/><rect x="6" y="6" width="1" height="1" fill="#a8a8a8"/></svg>
<svg class="s" style="left:0;top:0" width="1429" height="608"><rect x="180.20" y="70.10" width="475.20" height="478.70" fill="#e6e6e6" stroke="#5a5a5a" stroke-width="1.6"/><polygon points="186.50,71.70 651.80,76.60 649.40,548.00 181.50,543.00" fill="#fff" stroke="#555" stroke-width="0.8"/></svg>
<div class="dm" style="left:187.50px;top:351.80px;transform:rotate(-44.958deg) scale(0.9885,0.9829)"><i class="f0"></i><i class="f1"></i><i class="f2"></i><i class="f3"></i><i class="f4"></i><i class="f5"></i><i class="f6"></i><i class="f7"></i><i class="f8"></i><i class="f9"></i><i class="f10"></i><i class="f11"></i><i class="f12"></i><i class="f13"></i><i class="f14"></i><i class="f15"></i><i class="f16"></i><i class="f17"></i><i class="f18"></i><i class="f19"></i><i class="f20"></i><i class="f21"></i><i class="f22"></i><i class="f23"></i><i class="f24"></i><i class="f25"></i><i class="f26"></i><i class="f27"></i><i class="f28"></i><i class="f29"></i><i class="f30"></i><i class="f31"></i><i class="f32"></i><i class="f33"></i><i class="f34"></i><i class="f35"></i><i class="f36"></i><i class="f37"></i><i class="f38"></i><i class="f39"></i><i class="f40"></i><i class="f41"></i><i class="f42"></i><i class="f43"></i><i class="f44"></i><i class="f45"></i><i class="f46"></i><i class="f47"></i><i class="f48"></i><i class="f49"></i><i class="f50"></i><i class="f51"></i><i class="f52"></i><i class="f53"></i><i class="f54"></i><i class="f55"></i><i class="f56"></i><i class="f57"></i><i class="f58"></i><i class="f59"></i><i class="f60"></i><i class="f61"></i><i class="f62"></i><i class="f63"></i><i class="f64"></i><i class="f65"></i><i class="f66"></i><i class="f67"></i><i class="f68"></i><i class="f69"></i><i class="f70"></i><i class="f71"></i><i class="f72"></i><i class="f73"></i><i class="f74"></i><i class="f75"></i><i class="f76"></i><i class="f77"></i><i class="f78"></i><i class="f79"></i><i class="f80"></i><i class="f81"></i><i class="f82"></i><i class="f83"></i><i class="f84"></i><i class="f85"></i><i class="f86"></i><i class="f87"></i><i class="f88"></i><i class="f89"></i><i class="f90"></i><i class="f91"></i><i class="f92"></i><i class="f93"></i><i class="f94"></i><i class="f95"></i><i class="f96"></i><i class="f97"></i><i class="f98"></i><i class="f99"></i><i class="f100"></i><i class="f101"></i><i class="f102"></i><i class="f103"></i><i class="f104"></i><i class="f105"></i><i class="f106"></i><i class="f107"></i><i class="f108"></i><i class="f109"></i><i class="f110"></i><i class="f111"></i><i class="f112"></i><i class="f113"></i><i class="f114"></i><i class="f115"></i><i class="f116"></i><i class="f117"></i><i class="f118"></i><i class="f119"></i><i class="f120"></i><i class="f121"></i><i class="f122"></i><i class="f123"></i><i class="f124"></i><i class="f125"></i><i class="f126"></i><i class="f127"></i><i class="f128"></i><i class="f129"></i></div>
<svg class="s" style="left:0;top:0" width="1429" height="608"><clipPath id="cl"><polygon points="186.50,71.70 651.80,76.60 649.40,548.00 181.50,543.00"/></clipPath><path clip-path="url(#cl)" d="M164.16 70.1V548.8M180.38 70.1V548.8M196.60 70.1V548.8M212.82 70.1V548.8M229.04 70.1V548.8M245.26 70.1V548.8M261.48 70.1V548.8M277.70 70.1V548.8M293.92 70.1V548.8M310.14 70.1V548.8M326.36 70.1V548.8M342.58 70.1V548.8M358.80 70.1V548.8M375.02 70.1V548.8M391.24 70.1V548.8M407.46 70.1V548.8M423.68 70.1V548.8M439.90 70.1V548.8M456.12 70.1V548.8M472.34 70.1V548.8M488.56 70.1V548.8M504.78 70.1V548.8M521.00 70.1V548.8M537.22 70.1V548.8M553.44 70.1V548.8M569.66 70.1V548.8M585.88 70.1V548.8M602.10 70.1V548.8M618.32 70.1V548.8M634.54 70.1V548.8M650.76 70.1V548.8M180.2 47.16H655.4M180.2 63.38H655.4M180.2 79.60H655.4M180.2 95.82H655.4M180.2 112.04H655.4M180.2 128.26H655.4M180.2 144.48H655.4M180.2 160.70H655.4M180.2 176.92H655.4M180.2 193.14H655.4M180.2 209.36H655.4M180.2 225.58H655.4M180.2 241.80H655.4M180.2 258.02H655.4M180.2 274.24H655.4M180.2 290.46H655.4M180.2 306.68H655.4M180.2 322.90H655.4M180.2 339.12H655.4M180.2 355.34H655.4M180.2 371.56H655.4M180.2 387.78H655.4M180.2 404.00H655.4M180.2 420.22H655.4M180.2 436.44H655.4M180.2 452.66H655.4M180.2 468.88H655.4M180.2 485.10H655.4M180.2 501.32H655.4M180.2 517.54H655.4M180.2 533.76H655.4" stroke="#353535" stroke-width="1.05" fill="none"/></svg>
<svg class="s" style="left:0;top:0" width="1429" height="608"><rect x="880.90" y="69.20" width="476.10" height="479.70" fill="#e6e6e6" stroke="#5a5a5a" stroke-width="1.6"/><polygon points="887.50,70.20 1356.50,75.10 1351.50,548.30 882.50,543.30" fill="#fff" stroke="#555" stroke-width="0.8"/></svg>
<div class="dm" style="left:886.30px;top:350.80px;transform:rotate(-45.042deg) scale(0.9983,1.0003)"><i class="f0"></i><i class="f1"></i><i class="f2"></i><i class="f3"></i><i class="f4"></i><i class="f5"></i><i class="f6"></i><i class="f7"></i><i class="f8"></i><i class="f9"></i><i class="f10"></i><i class="f11"></i><i class="f12"></i><i class="f13"></i><i class="f14"></i><i class="f15"></i><i class="f16"></i><i class="f17"></i><i class="f18"></i><i class="f19"></i><i class="f20"></i><i class="f21"></i><i class="f22"></i><i class="f23"></i><i class="f24"></i><i class="f25"></i><i class="f26"></i><i class="f27"></i><i class="f28"></i><i class="f29"></i><i class="f30"></i><i class="f31"></i><i class="f32"></i><i class="f33"></i><i class="f34"></i><i class="f35"></i><i class="f36"></i><i class="f37"></i><i class="f38"></i><i class="f39"></i><i class="f40"></i><i class="f41"></i><i class="f42"></i><i class="f43"></i><i class="f44"></i><i class="f45"></i><i class="f46"></i><i class="f47"></i><i class="f48"></i><i class="f49"></i><i class="f50"></i><i class="f51"></i><i class="f52"></i><i class="f53"></i><i class="f54"></i><i class="f55"></i><i class="f56"></i><i class="f57"></i><i class="f58"></i><i class="f59"></i><i class="f60"></i><i class="f61"></i><i class="f62"></i><i class="f63"></i><i class="f64"></i><i class="f65"></i><i class="f66"></i><i class="f67"></i><i class="f68"></i><i class="f69"></i><i class="f70"></i><i class="f71"></i><i class="f72"></i><i class="f73"></i><i class="f74"></i><i class="f75"></i><i class="f76"></i><i class="f77"></i><i class="f78"></i><i class="f79"></i><i class="f80"></i><i class="f81"></i><i class="f82"></i><i class="f83"></i><i class="f84"></i><i class="f85"></i><i class="f86"></i><i class="f87"></i><i class="f88"></i><i class="f89"></i><i class="f90"></i><i class="f91"></i><i class="f92"></i><i class="f93"></i><i class="f94"></i><i class="f95"></i><i class="f96"></i><i class="f97"></i><i class="f98"></i><i class="f99"></i><i class="f100"></i><i class="f101"></i><i class="f102"></i><i class="f103"></i><i class="f104"></i><i class="f105"></i><i class="f106"></i><i class="f107"></i><i class="f108"></i><i class="f109"></i><i class="f110"></i><i class="f111"></i><i class="f112"></i><i class="f113"></i><i class="f114"></i><i class="f115"></i><i class="f116"></i><i class="f117"></i><i class="f118"></i><i class="f119"></i><i class="f120"></i><i class="f121"></i><i class="f122"></i><i class="f123"></i><i class="f124"></i><i class="f125"></i><i class="f126"></i><i class="f127"></i><i class="f128"></i><i class="f129"></i><svg class="s" style="left:0;top:0;overflow:visible" width="390" height="260"><path d="M0.00 0V260M16.25 0V260M32.50 0V260M48.75 0V260M65.00 0V260M81.25 0V260M97.50 0V260M113.75 0V260M130.00 0V260M146.25 0V260M162.50 0V260M178.75 0V260M195.00 0V260M211.25 0V260M227.50 0V260M243.75 0V260M260.00 0V260M276.25 0V260M292.50 0V260M308.75 0V260M325.00 0V260M341.25 0V260M357.50 0V260M373.75 0V260M390.00 0V260M0 0.00H390M0 16.25H390M0 32.50H390M0 48.75H390M0 65.00H390M0 81.25H390M0 97.50H390M0 113.75H390M0 130.00H390M0 146.25H390M0 162.50H390M0 178.75H390M0 195.00H390M0 211.25H390M0 227.50H390M0 243.75H390M0 260.00H390" stroke="rgba(30,30,30,0.72)" stroke-width="0.8" fill="none"/></svg></div>
</body></html>
